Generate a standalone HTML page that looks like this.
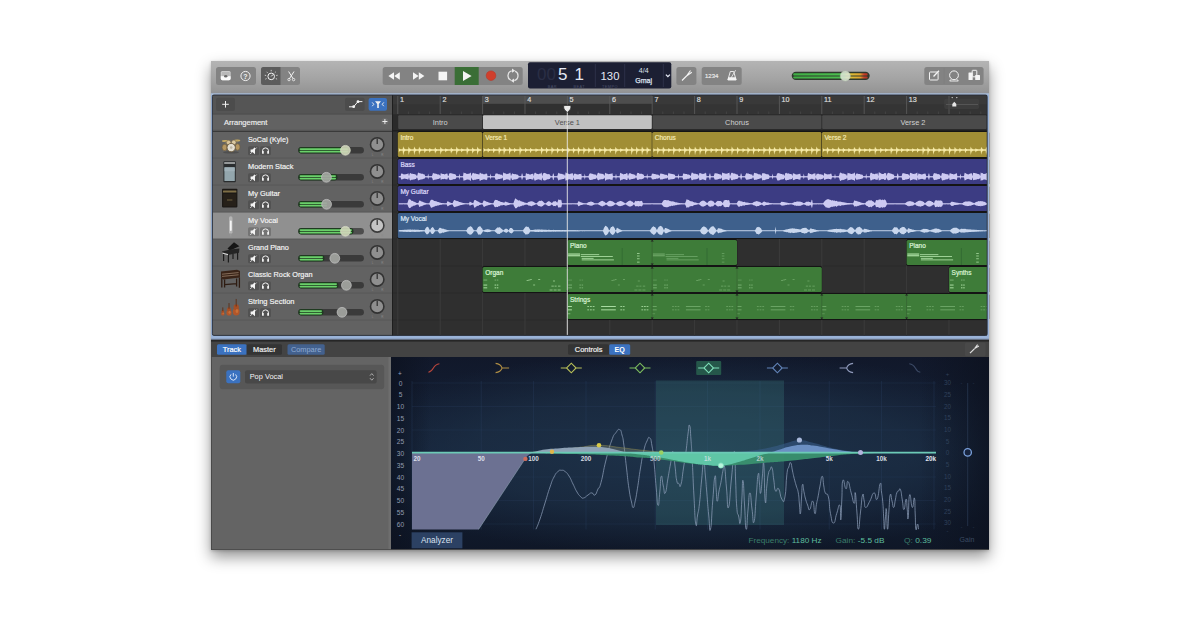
<!DOCTYPE html><html><head><meta charset="utf-8"><title>GarageBand</title><style>*{box-sizing:border-box;margin:0;padding:0}
html,body{width:1200px;height:627px;overflow:hidden;background:#fff;font-family:"Liberation Sans",sans-serif;}
body{position:relative}
#win{position:absolute;left:211px;top:61px;width:778px;height:489px;background:#616161;box-shadow:0 7px 14px rgba(0,0,0,.42),0 1px 3px rgba(0,0,0,.18)}
#main{position:absolute;left:0;top:0}
text{white-space:pre}
</style></head><body><div id="win"></div><svg id="main" width="1200" height="627" viewBox="0 0 1200 627" font-family="Liberation Sans, sans-serif"><defs>
<linearGradient id="tbg" x1="0" y1="0" x2="0" y2="1"><stop offset="0" stop-color="#b4b4b4"/><stop offset=".5" stop-color="#a5a5a5"/><stop offset=".88" stop-color="#979797"/><stop offset="1" stop-color="#8e9094"/></linearGradient>
<linearGradient id="eqbg" x1="0" y1="0" x2="0" y2="1"><stop offset="0" stop-color="#11182a"/><stop offset=".5" stop-color="#15233a"/><stop offset="1" stop-color="#0f1727"/></linearGradient>
<radialGradient id="eqglow" cx=".5" cy=".47" r=".62" gradientTransform="translate(0 .1) scale(1 .85)"><stop offset="0" stop-color="#1f344b" stop-opacity=".9"/><stop offset=".6" stop-color="#1d3046" stop-opacity=".65"/><stop offset="1" stop-color="#1b2c42" stop-opacity="0"/></radialGradient>
<linearGradient id="mtr" x1="0" y1="0" x2="1" y2="0"><stop offset="0" stop-color="#3fae44"/><stop offset=".68" stop-color="#4cc04f"/><stop offset=".72" stop-color="#d8c93a"/><stop offset=".9" stop-color="#e0a22e"/><stop offset=".95" stop-color="#c8402a"/><stop offset="1" stop-color="#b23020"/></linearGradient>
<linearGradient id="vl" x1="0" y1="0" x2="1" y2="0"><stop offset="0" stop-color="#0c111e" stop-opacity=".7"/><stop offset="1" stop-color="#0c111e" stop-opacity="0"/></linearGradient>
<linearGradient id="vr" x1="0" y1="0" x2="1" y2="0"><stop offset="0" stop-color="#0c111e" stop-opacity="0"/><stop offset="1" stop-color="#0c111e" stop-opacity=".75"/></linearGradient>
</defs><rect x="211" y="61" width="778" height="33" fill="url(#tbg)"/>
<rect x="216" y="67" width="40" height="18" fill="#838383" rx="2.5"/>
<rect x="220.8" y="71" width="9.8" height="9.2" fill="#d2d2d2" rx="1.6"/>
<rect x="221.6" y="71.8" width="8.2" height="4.6" fill="#b9b9b9" rx="1"/>
<path d="M220.8 76.2 h9.8 v2.4 a1.6 1.6 0 0 1 -1.6 1.6 h-6.6 a1.6 1.6 0 0 1 -1.6 -1.6z" fill="#fbfbfb"/>
<ellipse cx="225.7" cy="76.2" rx="1.7" ry="1.2" fill="#6a6a6a"/>
<circle cx="245.5" cy="76" r="4.6" fill="none" stroke="#f2f2f2" stroke-width="1"/>
<text x="245.5" y="78.6" font-size="7" fill="#f2f2f2" text-anchor="middle" font-weight="bold">?</text>
<rect x="261" y="67" width="39" height="18" fill="#838383" rx="2.5"/>
<path d="M263.5 67 h17 v18 h-17 a2.5 2.5 0 0 1 -2.5 -2.5 v-13 a2.5 2.5 0 0 1 2.5 -2.5z" fill="#5c5c5c"/>
<circle cx="271.2" cy="76.4" r="3.3" fill="none" stroke="#f2f2f2" stroke-width="1"/>
<line x1="271.2" y1="76.4" x2="273.2" y2="74.4" stroke="#f2f2f2" stroke-width="1"/>
<line x1="266.58" y1="78.56" x2="265.31" y2="79.15" stroke="#e6e6e6" stroke-width="0.8"/>
<line x1="266.18" y1="75.51" x2="264.8" y2="75.27" stroke="#e6e6e6" stroke-width="0.8"/>
<line x1="267.59" y1="72.79" x2="266.6" y2="71.8" stroke="#e6e6e6" stroke-width="0.8"/>
<line x1="271.2" y1="71.3" x2="271.2" y2="69.9" stroke="#e6e6e6" stroke-width="0.8"/>
<line x1="274.81" y1="72.79" x2="275.8" y2="71.8" stroke="#e6e6e6" stroke-width="0.8"/>
<line x1="276.22" y1="75.51" x2="277.6" y2="75.27" stroke="#e6e6e6" stroke-width="0.8"/>
<line x1="275.82" y1="78.56" x2="277.09" y2="79.15" stroke="#e6e6e6" stroke-width="0.8"/>
<path d="M288.6 71.5 L293.2 78.8 M294 71.5 L289.4 78.8" fill="none" stroke="#f2f2f2" stroke-width="1"/>
<circle cx="289" cy="79.6" r="1.2" fill="none" stroke="#f2f2f2" stroke-width="0.8"/>
<circle cx="293.6" cy="79.6" r="1.2" fill="none" stroke="#f2f2f2" stroke-width="0.8"/>
<rect x="382.7" y="67" width="140" height="18" fill="#838383" rx="2.5"/>
<rect x="454.7" y="67" width="24" height="18" fill="#3a6e36"/>
<path d="M394 72.2 v7.6 l-5.6 -3.8z M399.8 72.2 v7.6 l-5.6 -3.8z" fill="#f4f4f4"/>
<path d="M413 72.2 v7.6 l5.6 -3.8z M418.8 72.2 v7.6 l5.6 -3.8z" fill="#f4f4f4"/>
<rect x="438.5" y="71.7" width="8.6" height="8.6" fill="#f4f4f4"/>
<path d="M463 71 v10 l8.6 -5z" fill="#f4f4f4"/>
<circle cx="491" cy="75.7" r="4.8" fill="#d03f2c" stroke="#b8382a" stroke-width="0.6"/>
<path d="M510.89 80.23 A5 5 0 0 1 511.71 70.87 M515.11 71.17 A5 5 0 0 1 514.29 80.53" fill="none" stroke="#e2e2e2" stroke-width="1.3"/>
<path d="M512 68.6 l3.2 2.1 l-3.2 2.1z M514 82.8 l-3.2 -2.1 l3.2 -2.1z" fill="#e8e8e8"/>
<rect x="528" y="62.3" width="143.3" height="26.3" fill="#1c1f33" rx="2"/>
<line x1="595.3" y1="64" x2="595.3" y2="87" stroke="#2d3149" stroke-width="1"/>
<line x1="624.7" y1="64" x2="624.7" y2="87" stroke="#2d3149" stroke-width="1"/>
<line x1="663.3" y1="64" x2="663.3" y2="87" stroke="#2d3149" stroke-width="1"/>
<text x="556" y="80.3" font-size="17" fill="#2a2e45" text-anchor="end">00</text>
<text x="562.7" y="80.3" font-size="17" fill="#e6e9f5" text-anchor="middle">5</text>
<text x="579.3" y="80.3" font-size="17" fill="#e6e9f5" text-anchor="middle">1</text>
<text x="610" y="80.2" font-size="11.3" fill="#e6e9f5" text-anchor="middle">130</text>
<text x="643.7" y="73.2" font-size="7" fill="#dfe3f0" text-anchor="middle">4/4</text>
<text x="643.7" y="83.4" font-size="7" fill="#dfe3f0" text-anchor="middle" stroke="#dfe3f0" stroke-width=".25">Gmaj</text>
<text x="552.3" y="87.6" font-size="3.9" fill="#4a506a" text-anchor="middle" letter-spacing=".4">BAR</text>
<text x="579.3" y="87.6" font-size="3.9" fill="#4a506a" text-anchor="middle" letter-spacing=".4">BEAT</text>
<text x="610" y="87.6" font-size="3.9" fill="#4a506a" text-anchor="middle" letter-spacing=".4">TEMPO</text>
<path d="M665.9 74.6 l2 2 l2 -2" fill="none" stroke="#e6e9f5" stroke-width="1.3"/>
<rect x="676.4" y="67" width="20" height="18" fill="#838383" rx="2.5"/>
<path d="M682 80.5 L686.5 76 M686.5 76 L690.5 70.5 M686.5 76 L691.8 72.2" fill="none" stroke="#f4f4f4" stroke-width="1.1"/>
<rect x="701.7" y="67" width="40" height="18" fill="#838383" rx="2.5"/>
<text x="711.7" y="78.3" font-size="6" fill="#ececec" text-anchor="middle" stroke="#ececec" stroke-width=".15">1234</text>
<path d="M730.3 71.5 h3.4 l2.4 8.5 h-8.2z" fill="none" stroke="#f4f4f4" stroke-width="0.9"/>
<path d="M728.2 77.3 h7.6 l0.6 2.7 h-8.8z" fill="#f4f4f4"/>
<line x1="731" y1="78" x2="735.6" y2="70.2" stroke="#f4f4f4" stroke-width="0.8"/>
<rect x="791.7" y="71.7" width="78" height="8.3" fill="#2f3a2d" rx="4.15"/>
<rect x="793.2" y="73.2" width="74.5" height="2.2" fill="url(#mtr)" rx="1"/>
<rect x="793.2" y="76.4" width="74.5" height="2.2" fill="url(#mtr)" rx="1"/>
<circle cx="845.3" cy="76" r="5" fill="#d9e6d2" stroke="#b9c6b2" stroke-width="0.6" fill-opacity=".9"/>
<rect x="924.3" y="67" width="59.3" height="18" fill="#838383" rx="2.5"/>
<line x1="944.2" y1="68" x2="944.2" y2="84" stroke="#7d7d7d" stroke-width="0.8"/>
<rect x="929.5" y="72" width="8.6" height="8" fill="none" rx="0.8" stroke="#f2f2f2" stroke-width="1"/>
<line x1="933.5" y1="76.5" x2="939" y2="70.8" stroke="#f4f4f4" stroke-width="1.3"/>
<circle cx="954" cy="75.3" r="4.4" fill="none" stroke="#f4f4f4" stroke-width="1"/>
<path d="M951 79.3 l-1.3 1.7 h8.6 l-1.3 -1.7" fill="none" stroke="#f4f4f4" stroke-width="0.9"/>
<rect x="968.5" y="72.5" width="4.2" height="7.5" fill="#f4f4f4" rx="0.5"/>
<rect x="972.2" y="70.3" width="4.6" height="6.5" fill="none" rx="0.5" stroke="#f2f2f2" stroke-width="1"/>
<rect x="975.2" y="75" width="4.8" height="5" fill="#f4f4f4" rx="0.5"/>
<rect x="211" y="93.5" width="778" height="248" fill="#9ab3d8"/>
<rect x="211" y="93.5" width="778" height="1.2" fill="#aebfd8"/>
<rect x="212.6" y="95" width="179.4" height="240.5" fill="#626262"/>
<rect x="392" y="95" width="595.3" height="240.5" fill="#2f2f2f"/>
<rect x="392" y="95" width="1" height="240.5" fill="#1e1e1e"/>
<rect x="212.6" y="95" width="179.4" height="19" fill="#555555"/>
<rect x="216" y="97.7" width="19" height="13.2" fill="#4c4c4c" rx="2"/>
<path d="M225.5 101 v6.6 M222.2 104.3 h6.6" fill="none" stroke="#f0f0f0" stroke-width="1"/>
<rect x="345" y="97.7" width="19.6" height="13.2" fill="#4c4c4c" rx="2"/>
<path d="M349 106.8 h4.6 l4.4 -5.2 h4.4" fill="none" stroke="#f0f0f0" stroke-width="1"/>
<circle cx="353.7" cy="106.7" r="1.4" fill="#f4f4f4"/>
<circle cx="358" cy="101.7" r="1.4" fill="#f4f4f4"/>
<rect x="368.6" y="97.9" width="18.4" height="12.8" fill="#3b72c0" rx="2"/>
<path d="M375 101.3 h6 l-2.2 2.6 v4 h-1.6 v-4z" fill="#f0f0f0"/>
<path d="M372.2 102.4 l1.6 1.9 l-1.6 1.9 M383.8 102.4 l-1.6 1.9 l1.6 1.9" fill="none" stroke="#f0f0f0" stroke-width="0.9"/>
<line x1="212.6" y1="114.1" x2="392" y2="114.1" stroke="#4d4d4d" stroke-width="1"/>
<text x="224" y="124.5" font-size="7.5" fill="#ececec" stroke="#ececec" stroke-width=".18">Arrangement</text>
<circle cx="384.9" cy="121.5" r="3.6" fill="#6c6c6c"/>
<path d="M384.9 119 v5 M382.4 121.5 h5" fill="none" stroke="#ececec" stroke-width="1"/>
<line x1="212.6" y1="131.2" x2="392" y2="131.2" stroke="#2e2e2e" stroke-width="1.1"/>
<line x1="212.6" y1="130.2" x2="392" y2="130.2" stroke="#575757" stroke-width="0.9"/>
<rect x="393" y="95" width="594.3" height="9.8" fill="#393939"/>
<rect x="393" y="104.8" width="594.3" height="9.6" fill="#343434"/>
<rect x="482.6" y="95" width="169.6" height="8.9" fill="#4d4d4d"/>
<rect x="482.6" y="103.9" width="169.6" height="10.5" fill="#303030"/>
<line x1="397.8" y1="96" x2="397.8" y2="114" stroke="#5e5e5e" stroke-width="0.8"/>
<text x="400" y="102.4" font-size="7.2" fill="#dcdcdc" stroke="#dcdcdc" stroke-width=".2">1</text>
<line x1="408.4" y1="111.5" x2="408.4" y2="114" stroke="#4a4a4a" stroke-width="0.7"/>
<line x1="419" y1="111.5" x2="419" y2="114" stroke="#4a4a4a" stroke-width="0.7"/>
<line x1="429.6" y1="111.5" x2="429.6" y2="114" stroke="#4a4a4a" stroke-width="0.7"/>
<line x1="440.2" y1="96" x2="440.2" y2="114" stroke="#5e5e5e" stroke-width="0.8"/>
<text x="442.4" y="102.4" font-size="7.2" fill="#dcdcdc" stroke="#dcdcdc" stroke-width=".2">2</text>
<line x1="450.8" y1="111.5" x2="450.8" y2="114" stroke="#4a4a4a" stroke-width="0.7"/>
<line x1="461.4" y1="111.5" x2="461.4" y2="114" stroke="#4a4a4a" stroke-width="0.7"/>
<line x1="472" y1="111.5" x2="472" y2="114" stroke="#4a4a4a" stroke-width="0.7"/>
<line x1="482.6" y1="96" x2="482.6" y2="114" stroke="#5e5e5e" stroke-width="0.8"/>
<text x="484.8" y="102.4" font-size="7.2" fill="#dcdcdc" stroke="#dcdcdc" stroke-width=".2">3</text>
<line x1="493.2" y1="111.5" x2="493.2" y2="114" stroke="#4a4a4a" stroke-width="0.7"/>
<line x1="503.8" y1="111.5" x2="503.8" y2="114" stroke="#4a4a4a" stroke-width="0.7"/>
<line x1="514.4" y1="111.5" x2="514.4" y2="114" stroke="#4a4a4a" stroke-width="0.7"/>
<line x1="525" y1="96" x2="525" y2="114" stroke="#5e5e5e" stroke-width="0.8"/>
<text x="527.2" y="102.4" font-size="7.2" fill="#dcdcdc" stroke="#dcdcdc" stroke-width=".2">4</text>
<line x1="535.6" y1="111.5" x2="535.6" y2="114" stroke="#4a4a4a" stroke-width="0.7"/>
<line x1="546.2" y1="111.5" x2="546.2" y2="114" stroke="#4a4a4a" stroke-width="0.7"/>
<line x1="556.8" y1="111.5" x2="556.8" y2="114" stroke="#4a4a4a" stroke-width="0.7"/>
<line x1="567.4" y1="96" x2="567.4" y2="114" stroke="#5e5e5e" stroke-width="0.8"/>
<text x="569.6" y="102.4" font-size="7.2" fill="#dcdcdc" stroke="#dcdcdc" stroke-width=".2">5</text>
<line x1="578" y1="111.5" x2="578" y2="114" stroke="#4a4a4a" stroke-width="0.7"/>
<line x1="588.6" y1="111.5" x2="588.6" y2="114" stroke="#4a4a4a" stroke-width="0.7"/>
<line x1="599.2" y1="111.5" x2="599.2" y2="114" stroke="#4a4a4a" stroke-width="0.7"/>
<line x1="609.8" y1="96" x2="609.8" y2="114" stroke="#5e5e5e" stroke-width="0.8"/>
<text x="612" y="102.4" font-size="7.2" fill="#dcdcdc" stroke="#dcdcdc" stroke-width=".2">6</text>
<line x1="620.4" y1="111.5" x2="620.4" y2="114" stroke="#4a4a4a" stroke-width="0.7"/>
<line x1="631" y1="111.5" x2="631" y2="114" stroke="#4a4a4a" stroke-width="0.7"/>
<line x1="641.6" y1="111.5" x2="641.6" y2="114" stroke="#4a4a4a" stroke-width="0.7"/>
<line x1="652.2" y1="96" x2="652.2" y2="114" stroke="#5e5e5e" stroke-width="0.8"/>
<text x="654.4" y="102.4" font-size="7.2" fill="#dcdcdc" stroke="#dcdcdc" stroke-width=".2">7</text>
<line x1="662.8" y1="111.5" x2="662.8" y2="114" stroke="#4a4a4a" stroke-width="0.7"/>
<line x1="673.4" y1="111.5" x2="673.4" y2="114" stroke="#4a4a4a" stroke-width="0.7"/>
<line x1="684" y1="111.5" x2="684" y2="114" stroke="#4a4a4a" stroke-width="0.7"/>
<line x1="694.6" y1="96" x2="694.6" y2="114" stroke="#5e5e5e" stroke-width="0.8"/>
<text x="696.8" y="102.4" font-size="7.2" fill="#dcdcdc" stroke="#dcdcdc" stroke-width=".2">8</text>
<line x1="705.2" y1="111.5" x2="705.2" y2="114" stroke="#4a4a4a" stroke-width="0.7"/>
<line x1="715.8" y1="111.5" x2="715.8" y2="114" stroke="#4a4a4a" stroke-width="0.7"/>
<line x1="726.4" y1="111.5" x2="726.4" y2="114" stroke="#4a4a4a" stroke-width="0.7"/>
<line x1="737" y1="96" x2="737" y2="114" stroke="#5e5e5e" stroke-width="0.8"/>
<text x="739.2" y="102.4" font-size="7.2" fill="#dcdcdc" stroke="#dcdcdc" stroke-width=".2">9</text>
<line x1="747.6" y1="111.5" x2="747.6" y2="114" stroke="#4a4a4a" stroke-width="0.7"/>
<line x1="758.2" y1="111.5" x2="758.2" y2="114" stroke="#4a4a4a" stroke-width="0.7"/>
<line x1="768.8" y1="111.5" x2="768.8" y2="114" stroke="#4a4a4a" stroke-width="0.7"/>
<line x1="779.4" y1="96" x2="779.4" y2="114" stroke="#5e5e5e" stroke-width="0.8"/>
<text x="781.6" y="102.4" font-size="7.2" fill="#dcdcdc" stroke="#dcdcdc" stroke-width=".2">10</text>
<line x1="790" y1="111.5" x2="790" y2="114" stroke="#4a4a4a" stroke-width="0.7"/>
<line x1="800.6" y1="111.5" x2="800.6" y2="114" stroke="#4a4a4a" stroke-width="0.7"/>
<line x1="811.2" y1="111.5" x2="811.2" y2="114" stroke="#4a4a4a" stroke-width="0.7"/>
<line x1="821.8" y1="96" x2="821.8" y2="114" stroke="#5e5e5e" stroke-width="0.8"/>
<text x="824" y="102.4" font-size="7.2" fill="#dcdcdc" stroke="#dcdcdc" stroke-width=".2">11</text>
<line x1="832.4" y1="111.5" x2="832.4" y2="114" stroke="#4a4a4a" stroke-width="0.7"/>
<line x1="843" y1="111.5" x2="843" y2="114" stroke="#4a4a4a" stroke-width="0.7"/>
<line x1="853.6" y1="111.5" x2="853.6" y2="114" stroke="#4a4a4a" stroke-width="0.7"/>
<line x1="864.2" y1="96" x2="864.2" y2="114" stroke="#5e5e5e" stroke-width="0.8"/>
<text x="866.4" y="102.4" font-size="7.2" fill="#dcdcdc" stroke="#dcdcdc" stroke-width=".2">12</text>
<line x1="874.8" y1="111.5" x2="874.8" y2="114" stroke="#4a4a4a" stroke-width="0.7"/>
<line x1="885.4" y1="111.5" x2="885.4" y2="114" stroke="#4a4a4a" stroke-width="0.7"/>
<line x1="896" y1="111.5" x2="896" y2="114" stroke="#4a4a4a" stroke-width="0.7"/>
<line x1="906.6" y1="96" x2="906.6" y2="114" stroke="#5e5e5e" stroke-width="0.8"/>
<text x="908.8" y="102.4" font-size="7.2" fill="#dcdcdc" stroke="#dcdcdc" stroke-width=".2">13</text>
<line x1="917.2" y1="111.5" x2="917.2" y2="114" stroke="#4a4a4a" stroke-width="0.7"/>
<line x1="927.8" y1="111.5" x2="927.8" y2="114" stroke="#4a4a4a" stroke-width="0.7"/>
<line x1="938.4" y1="111.5" x2="938.4" y2="114" stroke="#4a4a4a" stroke-width="0.7"/>
<line x1="949" y1="96" x2="949" y2="114" stroke="#5e5e5e" stroke-width="0.8"/>
<line x1="959.6" y1="111.5" x2="959.6" y2="114" stroke="#4a4a4a" stroke-width="0.7"/>
<line x1="970.2" y1="111.5" x2="970.2" y2="114" stroke="#4a4a4a" stroke-width="0.7"/>
<line x1="980.8" y1="111.5" x2="980.8" y2="114" stroke="#4a4a4a" stroke-width="0.7"/>
<rect x="393" y="114.4" width="594.3" height="16.4" fill="#2a2a2a"/>
<rect x="398.2" y="115.3" width="84" height="13.8" fill="#4a4a4a" rx="1"/>
<text x="440.2" y="124.8" font-size="7.4" fill="#d2d2d2" text-anchor="middle">Intro</text>
<rect x="483" y="115.3" width="168.8" height="13.8" fill="#c1c1c1" rx="1"/>
<text x="567.4" y="124.8" font-size="7.4" fill="#505050" text-anchor="middle">Verse 1</text>
<rect x="652.6" y="115.3" width="168.8" height="13.8" fill="#4a4a4a" rx="1"/>
<text x="737" y="124.8" font-size="7.4" fill="#d2d2d2" text-anchor="middle">Chorus</text>
<rect x="822.2" y="115.3" width="164.4" height="13.8" fill="#4a4a4a" rx="1"/>
<text x="912.96" y="124.8" font-size="7.4" fill="#d2d2d2" text-anchor="middle">Verse 2</text>
<line x1="212.6" y1="158" x2="392" y2="158" stroke="#575757" stroke-width="0.9"/>
<text x="248" y="141.9" font-size="8" fill="#f4f4f4" textLength="40.3" lengthAdjust="spacingAndGlyphs" stroke="#f4f4f4" stroke-width=".18">SoCal (Kyle)</text>
<rect x="248" y="146.2" width="11" height="9" fill="#525252" rx="1.5"/>
<rect x="260" y="146.2" width="11" height="9" fill="#525252" rx="1.5"/>
<path d="M250.6 149.5 h1.8 l2.6 -2.2 v7 l-2.6 -2.2 h-1.8z" fill="#f2f2f2"/>
<line x1="250.2" y1="154" x2="256.6" y2="147.6" stroke="#f2f2f2" stroke-width="0.8"/>
<path d="M262.5 152.5 v-1.6 a3 3 0 0 1 6 0 v1.6" fill="none" stroke="#f2f2f2" stroke-width="1"/>
<rect x="262" y="151" width="1.8" height="2.8" fill="#f2f2f2" rx="0.5"/>
<rect x="267.2" y="151" width="1.8" height="2.8" fill="#f2f2f2" rx="0.5"/>
<rect x="298.3" y="147" width="65.6" height="6.6" fill="#3a3a3a" rx="3.3"/>
<rect x="298.3" y="147" width="51.2" height="6.6" fill="#1f3a20" rx="3.3"/>
<rect x="299.6" y="148.2" width="48.4" height="1.8" fill="#6ad06a" rx="0.9"/>
<rect x="299.6" y="150.7" width="48.4" height="1.8" fill="#6ad06a" rx="0.9"/>
<circle cx="345.4" cy="150.3" r="4.9" fill="#cfd6b8" stroke="#d9ddc8" stroke-width="0.7" fill-opacity=".92"/>
<circle cx="377.2" cy="144.4" r="6.7" fill="#8f8f8f" stroke="#333333" stroke-width="1.6"/>
<line x1="377.2" y1="144" x2="377.2" y2="138.4" stroke="#2e2e2e" stroke-width="1.2"/>
<text x="372.6" y="155.6" font-size="3" fill="#8a8a8a" text-anchor="middle">L</text>
<text x="382.4" y="155.6" font-size="3" fill="#8a8a8a" text-anchor="middle">R</text>
<line x1="212.6" y1="185" x2="392" y2="185" stroke="#575757" stroke-width="0.9"/>
<text x="248" y="168.9" font-size="8" fill="#f4f4f4" textLength="45.5" lengthAdjust="spacingAndGlyphs" stroke="#f4f4f4" stroke-width=".18">Modern Stack</text>
<rect x="248" y="173.2" width="11" height="9" fill="#525252" rx="1.5"/>
<rect x="260" y="173.2" width="11" height="9" fill="#525252" rx="1.5"/>
<path d="M250.6 176.5 h1.8 l2.6 -2.2 v7 l-2.6 -2.2 h-1.8z" fill="#f2f2f2"/>
<line x1="250.2" y1="181" x2="256.6" y2="174.6" stroke="#f2f2f2" stroke-width="0.8"/>
<path d="M262.5 179.5 v-1.6 a3 3 0 0 1 6 0 v1.6" fill="none" stroke="#f2f2f2" stroke-width="1"/>
<rect x="262" y="178" width="1.8" height="2.8" fill="#f2f2f2" rx="0.5"/>
<rect x="267.2" y="178" width="1.8" height="2.8" fill="#f2f2f2" rx="0.5"/>
<rect x="298.3" y="174" width="65.6" height="6.6" fill="#3a3a3a" rx="3.3"/>
<rect x="298.3" y="174" width="39.2" height="6.6" fill="#1f3a20" rx="3.3"/>
<rect x="299.6" y="175.2" width="36.4" height="1.8" fill="#6ad06a" rx="0.9"/>
<rect x="299.6" y="177.7" width="36.4" height="1.8" fill="#6ad06a" rx="0.9"/>
<circle cx="326.4" cy="177.3" r="4.9" fill="#a4a6a2" stroke="#c6c6c6" stroke-width="0.7" fill-opacity=".92"/>
<circle cx="377.2" cy="171.4" r="6.7" fill="#8f8f8f" stroke="#333333" stroke-width="1.6"/>
<line x1="377.2" y1="171" x2="377.2" y2="165.4" stroke="#2e2e2e" stroke-width="1.2"/>
<text x="372.6" y="182.6" font-size="3" fill="#8a8a8a" text-anchor="middle">L</text>
<text x="382.4" y="182.6" font-size="3" fill="#8a8a8a" text-anchor="middle">R</text>
<line x1="212.6" y1="212" x2="392" y2="212" stroke="#575757" stroke-width="0.9"/>
<text x="248" y="195.9" font-size="8" fill="#f4f4f4" textLength="32" lengthAdjust="spacingAndGlyphs" stroke="#f4f4f4" stroke-width=".18">My Guitar</text>
<rect x="248" y="200.2" width="11" height="9" fill="#525252" rx="1.5"/>
<rect x="260" y="200.2" width="11" height="9" fill="#525252" rx="1.5"/>
<path d="M250.6 203.5 h1.8 l2.6 -2.2 v7 l-2.6 -2.2 h-1.8z" fill="#f2f2f2"/>
<line x1="250.2" y1="208" x2="256.6" y2="201.6" stroke="#f2f2f2" stroke-width="0.8"/>
<path d="M262.5 206.5 v-1.6 a3 3 0 0 1 6 0 v1.6" fill="none" stroke="#f2f2f2" stroke-width="1"/>
<rect x="262" y="205" width="1.8" height="2.8" fill="#f2f2f2" rx="0.5"/>
<rect x="267.2" y="205" width="1.8" height="2.8" fill="#f2f2f2" rx="0.5"/>
<rect x="298.3" y="201" width="65.6" height="6.6" fill="#3a3a3a" rx="3.3"/>
<rect x="298.3" y="201" width="30.2" height="6.6" fill="#1f3a20" rx="3.3"/>
<rect x="299.6" y="202.2" width="27.4" height="1.8" fill="#6ad06a" rx="0.9"/>
<rect x="299.6" y="204.7" width="27.4" height="1.8" fill="#6ad06a" rx="0.9"/>
<circle cx="326.6" cy="204.3" r="4.9" fill="#a4a6a2" stroke="#c6c6c6" stroke-width="0.7" fill-opacity=".92"/>
<circle cx="377.2" cy="198.4" r="6.7" fill="#8f8f8f" stroke="#333333" stroke-width="1.6"/>
<line x1="377.2" y1="198" x2="377.2" y2="192.4" stroke="#2e2e2e" stroke-width="1.2"/>
<text x="372.6" y="209.6" font-size="3" fill="#8a8a8a" text-anchor="middle">L</text>
<text x="382.4" y="209.6" font-size="3" fill="#8a8a8a" text-anchor="middle">R</text>
<rect x="212.6" y="212.6" width="179.4" height="26.4" fill="#909090"/>
<line x1="212.6" y1="239" x2="392" y2="239" stroke="#575757" stroke-width="0.9"/>
<text x="248" y="222.9" font-size="8" fill="#f4f4f4" textLength="30" lengthAdjust="spacingAndGlyphs" stroke="#f4f4f4" stroke-width=".18">My Vocal</text>
<rect x="248" y="227.2" width="11" height="9" fill="#747474" rx="1.5"/>
<rect x="260" y="227.2" width="11" height="9" fill="#747474" rx="1.5"/>
<path d="M250.6 230.5 h1.8 l2.6 -2.2 v7 l-2.6 -2.2 h-1.8z" fill="#f2f2f2"/>
<line x1="250.2" y1="235" x2="256.6" y2="228.6" stroke="#f2f2f2" stroke-width="0.8"/>
<path d="M262.5 233.5 v-1.6 a3 3 0 0 1 6 0 v1.6" fill="none" stroke="#f2f2f2" stroke-width="1"/>
<rect x="262" y="232" width="1.8" height="2.8" fill="#f2f2f2" rx="0.5"/>
<rect x="267.2" y="232" width="1.8" height="2.8" fill="#f2f2f2" rx="0.5"/>
<rect x="298.3" y="228" width="65.6" height="6.6" fill="#4d4d4d" rx="3.3"/>
<rect x="298.3" y="228" width="55.2" height="6.6" fill="#1f3a20" rx="3.3"/>
<rect x="299.6" y="229.2" width="52.4" height="1.8" fill="#6ad06a" rx="0.9"/>
<rect x="299.6" y="231.7" width="52.4" height="1.8" fill="#6ad06a" rx="0.9"/>
<circle cx="345.4" cy="231.3" r="4.9" fill="#cfd6b8" stroke="#d9ddc8" stroke-width="0.7" fill-opacity=".92"/>
<circle cx="377.2" cy="225.4" r="6.7" fill="#c4c4c4" stroke="#3c3c3c" stroke-width="1.6"/>
<line x1="377.2" y1="225" x2="377.2" y2="219.4" stroke="#2e2e2e" stroke-width="1.2"/>
<text x="372.6" y="236.6" font-size="3" fill="#8a8a8a" text-anchor="middle">L</text>
<text x="382.4" y="236.6" font-size="3" fill="#8a8a8a" text-anchor="middle">R</text>
<line x1="212.6" y1="266" x2="392" y2="266" stroke="#575757" stroke-width="0.9"/>
<text x="248" y="249.9" font-size="8" fill="#f4f4f4" textLength="40.8" lengthAdjust="spacingAndGlyphs" stroke="#f4f4f4" stroke-width=".18">Grand Piano</text>
<rect x="248" y="254.2" width="11" height="9" fill="#525252" rx="1.5"/>
<rect x="260" y="254.2" width="11" height="9" fill="#525252" rx="1.5"/>
<path d="M250.6 257.5 h1.8 l2.6 -2.2 v7 l-2.6 -2.2 h-1.8z" fill="#f2f2f2"/>
<line x1="250.2" y1="262" x2="256.6" y2="255.6" stroke="#f2f2f2" stroke-width="0.8"/>
<path d="M262.5 260.5 v-1.6 a3 3 0 0 1 6 0 v1.6" fill="none" stroke="#f2f2f2" stroke-width="1"/>
<rect x="262" y="259" width="1.8" height="2.8" fill="#f2f2f2" rx="0.5"/>
<rect x="267.2" y="259" width="1.8" height="2.8" fill="#f2f2f2" rx="0.5"/>
<rect x="298.3" y="255" width="65.6" height="6.6" fill="#3a3a3a" rx="3.3"/>
<rect x="298.3" y="255" width="26.2" height="6.6" fill="#1f3a20" rx="3.3"/>
<rect x="299.6" y="256.2" width="23.4" height="1.8" fill="#6ad06a" rx="0.9"/>
<rect x="299.6" y="258.7" width="23.4" height="1.8" fill="#6ad06a" rx="0.9"/>
<circle cx="334.8" cy="258.3" r="4.9" fill="#a4a6a2" stroke="#c6c6c6" stroke-width="0.7" fill-opacity=".92"/>
<circle cx="377.2" cy="252.4" r="6.7" fill="#8f8f8f" stroke="#333333" stroke-width="1.6"/>
<line x1="377.2" y1="252" x2="377.2" y2="246.4" stroke="#2e2e2e" stroke-width="1.2"/>
<text x="372.6" y="263.6" font-size="3" fill="#8a8a8a" text-anchor="middle">L</text>
<text x="382.4" y="263.6" font-size="3" fill="#8a8a8a" text-anchor="middle">R</text>
<line x1="212.6" y1="293" x2="392" y2="293" stroke="#575757" stroke-width="0.9"/>
<text x="248" y="276.9" font-size="8" fill="#f4f4f4" textLength="64.5" lengthAdjust="spacingAndGlyphs" stroke="#f4f4f4" stroke-width=".18">Classic Rock Organ</text>
<rect x="248" y="281.2" width="11" height="9" fill="#525252" rx="1.5"/>
<rect x="260" y="281.2" width="11" height="9" fill="#525252" rx="1.5"/>
<path d="M250.6 284.5 h1.8 l2.6 -2.2 v7 l-2.6 -2.2 h-1.8z" fill="#f2f2f2"/>
<line x1="250.2" y1="289" x2="256.6" y2="282.6" stroke="#f2f2f2" stroke-width="0.8"/>
<path d="M262.5 287.5 v-1.6 a3 3 0 0 1 6 0 v1.6" fill="none" stroke="#f2f2f2" stroke-width="1"/>
<rect x="262" y="286" width="1.8" height="2.8" fill="#f2f2f2" rx="0.5"/>
<rect x="267.2" y="286" width="1.8" height="2.8" fill="#f2f2f2" rx="0.5"/>
<rect x="298.3" y="282" width="65.6" height="6.6" fill="#3a3a3a" rx="3.3"/>
<rect x="298.3" y="282" width="40.2" height="6.6" fill="#1f3a20" rx="3.3"/>
<rect x="299.6" y="283.2" width="37.4" height="1.8" fill="#6ad06a" rx="0.9"/>
<rect x="299.6" y="285.7" width="37.4" height="1.8" fill="#6ad06a" rx="0.9"/>
<circle cx="346.4" cy="285.3" r="4.9" fill="#a4a6a2" stroke="#c6c6c6" stroke-width="0.7" fill-opacity=".92"/>
<circle cx="377.2" cy="279.4" r="6.7" fill="#8f8f8f" stroke="#333333" stroke-width="1.6"/>
<line x1="377.2" y1="279" x2="377.2" y2="273.4" stroke="#2e2e2e" stroke-width="1.2"/>
<text x="372.6" y="290.6" font-size="3" fill="#8a8a8a" text-anchor="middle">L</text>
<text x="382.4" y="290.6" font-size="3" fill="#8a8a8a" text-anchor="middle">R</text>
<line x1="212.6" y1="320" x2="392" y2="320" stroke="#575757" stroke-width="0.9"/>
<text x="248" y="303.9" font-size="8" fill="#f4f4f4" textLength="46.5" lengthAdjust="spacingAndGlyphs" stroke="#f4f4f4" stroke-width=".18">String Section</text>
<rect x="248" y="308.2" width="11" height="9" fill="#525252" rx="1.5"/>
<rect x="260" y="308.2" width="11" height="9" fill="#525252" rx="1.5"/>
<path d="M250.6 311.5 h1.8 l2.6 -2.2 v7 l-2.6 -2.2 h-1.8z" fill="#f2f2f2"/>
<line x1="250.2" y1="316" x2="256.6" y2="309.6" stroke="#f2f2f2" stroke-width="0.8"/>
<path d="M262.5 314.5 v-1.6 a3 3 0 0 1 6 0 v1.6" fill="none" stroke="#f2f2f2" stroke-width="1"/>
<rect x="262" y="313" width="1.8" height="2.8" fill="#f2f2f2" rx="0.5"/>
<rect x="267.2" y="313" width="1.8" height="2.8" fill="#f2f2f2" rx="0.5"/>
<rect x="298.3" y="309" width="65.6" height="6.6" fill="#3a3a3a" rx="3.3"/>
<rect x="298.3" y="309" width="25.2" height="6.6" fill="#1f3a20" rx="3.3"/>
<rect x="299.6" y="310.2" width="22.4" height="1.8" fill="#6ad06a" rx="0.9"/>
<rect x="299.6" y="312.7" width="22.4" height="1.8" fill="#6ad06a" rx="0.9"/>
<circle cx="342" cy="312.3" r="4.9" fill="#a4a6a2" stroke="#c6c6c6" stroke-width="0.7" fill-opacity=".92"/>
<circle cx="377.2" cy="306.4" r="6.7" fill="#8f8f8f" stroke="#333333" stroke-width="1.6"/>
<line x1="377.2" y1="306" x2="377.2" y2="300.4" stroke="#2e2e2e" stroke-width="1.2"/>
<text x="372.6" y="317.6" font-size="3" fill="#8a8a8a" text-anchor="middle">L</text>
<text x="382.4" y="317.6" font-size="3" fill="#8a8a8a" text-anchor="middle">R</text>
<ellipse cx="231" cy="152.3" rx="8" ry="1.3" fill="#3c3c3c" fill-opacity=".5"/>
<ellipse cx="225.3" cy="141" rx="3.4" ry="1.1" fill="#c9ad62"/>
<ellipse cx="237.2" cy="140.6" rx="3.2" ry="1.1" fill="#c9ad62"/>
<line x1="225.3" y1="141" x2="225.3" y2="151" stroke="#8a8064" stroke-width="0.6"/>
<line x1="237.2" y1="140.6" x2="237.2" y2="151" stroke="#8a8064" stroke-width="0.6"/>
<circle cx="228.6" cy="142.6" r="2.3" fill="#d8c49a" stroke="#7a6645" stroke-width="0.6"/>
<circle cx="233.8" cy="142.4" r="2.3" fill="#dccaa2" stroke="#7a6645" stroke-width="0.6"/>
<ellipse cx="224.6" cy="147.4" rx="2.5" ry="3.1" fill="#b59660" stroke="#6c5a3c" stroke-width=".6"/>
<ellipse cx="237.6" cy="147" rx="2.4" ry="3.2" fill="#b59660" stroke="#6c5a3c" stroke-width=".6"/>
<circle cx="231.2" cy="147.6" r="4.2" fill="#e4dfd2" stroke="#6c5a3c" stroke-width="0.9"/>
<circle cx="231.2" cy="147.6" r="1.3" fill="#bdb6a4"/>
<rect x="223.4" y="161.2" width="12.4" height="21" fill="#2a2d2f" rx="0.8"/>
<rect x="224.2" y="162.2" width="10.8" height="1.6" fill="#b9bcbd" rx="0.3"/>
<rect x="224.4" y="167.2" width="10.4" height="13.8" fill="#93a6ad" rx="0.5"/>
<rect x="224.4" y="167.2" width="10.4" height="4" fill="#a5b7bd" rx="0.5" fill-opacity=".7"/>
<rect x="222" y="188.8" width="15.4" height="18.6" fill="#1c1916" rx="0.8"/>
<rect x="223" y="190.6" width="13.4" height="2" fill="#7e6e46" rx="0.3"/>
<rect x="223.2" y="194" width="13" height="12.2" fill="#262019" rx="0.4"/>
<rect x="227" y="199.5" width="5.4" height="1" fill="#6e6040"/>
<rect x="229" y="216.3" width="3.5" height="17.5" fill="#b4b4b4" rx="1.6"/>
<rect x="229.9" y="220.6" width="1.8" height="10.4" fill="#f6f6f6" rx="0.9"/>
<rect x="230.2" y="233.5" width="1.2" height="3" fill="#9a9a9a"/>
<path d="M227.5 248.5 L234 242.2 L239.4 246.2 L230 250.4 Z" fill="#161616"/>
<path d="M222 251.4 L230 249.6 L239.4 248.4 L239 252.8 L228 255 L222.4 253.6 Z" fill="#242424"/>
<path d="M222.3 252.6 L228 254 L228 255.2 L222.5 253.8 Z" fill="#d8d8d8"/>
<path d="M223.6 254 v7 M228.4 255 v7.4 M237.6 252.6 v7.2 M233 254 v5" fill="none" stroke="#1c1c1c" stroke-width="1.2"/>
<path d="M221 271.4 L237 269.8 L240 271 L240 277.4 L223.4 279.4 L221 277.6 Z" fill="#3a2418"/>
<path d="M222 274.2 L238.6 272.6 M222 276.4 L238.6 274.8" fill="none" stroke="#8c7460" stroke-width="0.9"/>
<path d="M221.8 278 v9.6 M239.4 277.4 v10.4 M224.6 279.4 v8 M236.6 278.4 v8 M224.6 284.6 L236.6 283.6" fill="none" stroke="#2e1c12" stroke-width="1.3"/>
<ellipse cx="222.8" cy="313.74" rx="1.67" ry="1.86" fill="#b2562a"/>
<ellipse cx="222.8" cy="311.51" rx="1.3" ry="1.43" fill="#a64e24"/>
<ellipse cx="223.17" cy="313.37" rx="0.68" ry="0.99" fill="#d07a3e" fill-opacity=".7"/>
<line x1="222.8" y1="311.14" x2="222.8" y2="307.42" stroke="#5a301a" stroke-width="0.9"/>
<ellipse cx="229" cy="312.74" rx="2.56" ry="2.85" fill="#b2562a"/>
<ellipse cx="229" cy="309.32" rx="1.99" ry="2.18" fill="#a64e24"/>
<ellipse cx="229.57" cy="312.17" rx="1.04" ry="1.52" fill="#d07a3e" fill-opacity=".7"/>
<line x1="229" y1="308.75" x2="229" y2="303.05" stroke="#5a301a" stroke-width="0.9"/>
<ellipse cx="236.2" cy="311.7" rx="3.38" ry="3.75" fill="#b2562a"/>
<ellipse cx="236.2" cy="307.2" rx="2.62" ry="2.88" fill="#a64e24"/>
<ellipse cx="236.95" cy="310.95" rx="1.38" ry="2" fill="#d07a3e" fill-opacity=".7"/>
<line x1="236.2" y1="306.45" x2="236.2" y2="298.95" stroke="#5a301a" stroke-width="0.9"/>
<line x1="393" y1="158" x2="987" y2="158" stroke="#292929" stroke-width="0.8"/>
<line x1="393" y1="185" x2="987" y2="185" stroke="#292929" stroke-width="0.8"/>
<line x1="393" y1="212" x2="987" y2="212" stroke="#292929" stroke-width="0.8"/>
<line x1="393" y1="239" x2="987" y2="239" stroke="#292929" stroke-width="0.8"/>
<line x1="393" y1="266" x2="987" y2="266" stroke="#292929" stroke-width="0.8"/>
<line x1="393" y1="293" x2="987" y2="293" stroke="#292929" stroke-width="0.8"/>
<line x1="393" y1="320" x2="987" y2="320" stroke="#292929" stroke-width="0.8"/>
<line x1="397.8" y1="131" x2="397.8" y2="335.5" stroke="#3d3d3d" stroke-width="0.9"/>
<line x1="440.2" y1="131" x2="440.2" y2="335.5" stroke="#3d3d3d" stroke-width="0.9"/>
<line x1="482.6" y1="131" x2="482.6" y2="335.5" stroke="#3d3d3d" stroke-width="0.9"/>
<line x1="525" y1="131" x2="525" y2="335.5" stroke="#3d3d3d" stroke-width="0.9"/>
<line x1="567.4" y1="131" x2="567.4" y2="335.5" stroke="#3d3d3d" stroke-width="0.9"/>
<line x1="609.8" y1="131" x2="609.8" y2="335.5" stroke="#3d3d3d" stroke-width="0.9"/>
<line x1="652.2" y1="131" x2="652.2" y2="335.5" stroke="#3d3d3d" stroke-width="0.9"/>
<line x1="694.6" y1="131" x2="694.6" y2="335.5" stroke="#3d3d3d" stroke-width="0.9"/>
<line x1="737" y1="131" x2="737" y2="335.5" stroke="#3d3d3d" stroke-width="0.9"/>
<line x1="779.4" y1="131" x2="779.4" y2="335.5" stroke="#3d3d3d" stroke-width="0.9"/>
<line x1="821.8" y1="131" x2="821.8" y2="335.5" stroke="#3d3d3d" stroke-width="0.9"/>
<line x1="864.2" y1="131" x2="864.2" y2="335.5" stroke="#3d3d3d" stroke-width="0.9"/>
<line x1="906.6" y1="131" x2="906.6" y2="335.5" stroke="#3d3d3d" stroke-width="0.9"/>
<line x1="949" y1="131" x2="949" y2="335.5" stroke="#3d3d3d" stroke-width="0.9"/>
<line x1="392.5" y1="130.9" x2="987" y2="130.9" stroke="#1c1c1c" stroke-width="1.2"/>
<rect x="397.4" y="131.1" width="85.6" height="26.9" fill="#141414" rx="1.8"/>
<rect x="397.8" y="132" width="84.8" height="25" fill="#a18e35" rx="1.6"/>
<text x="400.4" y="139.6" font-size="6.5" fill="#f3e8b4" stroke="#f3e8b4" stroke-width=".22">Intro</text>
<path d="M398.8 148.01 L399.35 148.85 L399.9 148.85 L400.45 149.15 L401 149.15 L401.55 149.15 L402.1 149.15 L402.65 149.15 L403.2 146.3 L403.75 147.77 L404.3 148.78 L404.85 148.78 L405.4 149.15 L405.95 149.15 L406.5 149.15 L407.05 149.15 L407.6 149.15 L408.15 149.15 L408.7 146.55 L409.25 147.89 L409.8 148.81 L410.35 148.81 L410.9 149.15 L411.45 149.15 L412 149.15 L412.55 149.15 L413.1 149.15 L413.65 149.15 L414.2 146.42 L414.75 147.83 L415.3 148.8 L415.85 148.8 L416.4 149.15 L416.95 149.15 L417.5 149.15 L418.05 149.15 L418.6 149.15 L419.15 146.55 L419.7 147.89 L420.25 148.81 L420.8 148.81 L421.35 149.15 L421.9 149.15 L422.45 149.15 L423 149.15 L423.55 149.15 L424.1 149.15 L424.65 147.66 L425.2 148.43 L425.75 148.96 L426.3 148.96 L426.85 149.15 L427.4 149.15 L427.95 149.15 L428.5 149.15 L429.05 149.15 L429.6 147.91 L430.15 148.55 L430.7 148.99 L431.25 148.99 L431.8 149.15 L432.35 149.15 L432.9 149.15 L433.45 149.15 L434 149.15 L434.55 149.15 L435.1 147.29 L435.65 148.25 L436.2 148.91 L436.75 148.91 L437.3 149.15 L437.85 149.15 L438.4 149.15 L438.95 149.15 L439.5 149.15 L440.05 149.15 L440.6 146.79 L441.15 148.01 L441.7 148.85 L442.25 148.85 L442.8 149.15 L443.35 149.15 L443.9 149.15 L444.45 149.15 L445 149.15 L445.55 148.16 L446.1 148.67 L446.65 149.02 L447.2 149.02 L447.75 149.15 L448.3 149.15 L448.85 149.15 L449.4 149.15 L449.95 149.15 L450.5 149.15 L451.05 147.29 L451.6 148.25 L452.15 148.91 L452.7 148.91 L453.25 149.15 L453.8 149.15 L454.35 149.15 L454.9 149.15 L455.45 149.15 L456 149.15 L456.55 146.42 L457.1 147.83 L457.65 148.8 L458.2 148.8 L458.75 149.15 L459.3 149.15 L459.85 149.15 L460.4 149.15 L460.95 149.15 L461.5 148.16 L462.05 148.67 L462.6 149.02 L463.15 149.02 L463.7 149.15 L464.25 149.15 L464.8 149.15 L465.35 149.15 L465.9 149.15 L466.45 149.15 L467 146.55 L467.55 147.89 L468.1 148.81 L468.65 148.81 L469.2 149.15 L469.75 149.15 L470.3 149.15 L470.85 149.15 L471.4 149.15 L471.95 149.15 L472.5 147.29 L473.05 148.25 L473.6 148.91 L474.15 148.91 L474.7 149.15 L475.25 149.15 L475.8 149.15 L476.35 149.15 L476.9 149.15 L477.45 146.55 L478 147.89 L478.55 148.81 L479.1 148.81 L479.65 149.15 L480.2 149.15 L480.75 149.15 L481.3 149.15 L481.3 150.85 L480.75 150.85 L480.2 150.85 L479.65 150.85 L479.1 151.27 L478.55 151.27 L478 152.74 L477.45 155.05 L476.9 150.85 L476.35 150.85 L475.8 150.85 L475.25 150.85 L474.7 150.85 L474.15 151.15 L473.6 151.15 L473.05 152.2 L472.5 153.85 L471.95 150.85 L471.4 150.85 L470.85 150.85 L470.3 150.85 L469.75 150.85 L469.2 150.85 L468.65 151.27 L468.1 151.27 L467.55 152.74 L467 155.05 L466.45 150.85 L465.9 150.85 L465.35 150.85 L464.8 150.85 L464.25 150.85 L463.7 150.85 L463.15 151.01 L462.6 151.01 L462.05 151.57 L461.5 152.45 L460.95 150.85 L460.4 150.85 L459.85 150.85 L459.3 150.85 L458.75 150.85 L458.2 151.29 L457.65 151.29 L457.1 152.83 L456.55 155.25 L456 150.85 L455.45 150.85 L454.9 150.85 L454.35 150.85 L453.8 150.85 L453.25 150.85 L452.7 151.15 L452.15 151.15 L451.6 152.2 L451.05 153.85 L450.5 150.85 L449.95 150.85 L449.4 150.85 L448.85 150.85 L448.3 150.85 L447.75 150.85 L447.2 151.01 L446.65 151.01 L446.1 151.57 L445.55 152.45 L445 150.85 L444.45 150.85 L443.9 150.85 L443.35 150.85 L442.8 150.85 L442.25 151.23 L441.7 151.23 L441.15 152.56 L440.6 154.65 L440.05 150.85 L439.5 150.85 L438.95 150.85 L438.4 150.85 L437.85 150.85 L437.3 150.85 L436.75 151.15 L436.2 151.15 L435.65 152.2 L435.1 153.85 L434.55 150.85 L434 150.85 L433.45 150.85 L432.9 150.85 L432.35 150.85 L431.8 150.85 L431.25 151.05 L430.7 151.05 L430.15 151.75 L429.6 152.85 L429.05 150.85 L428.5 150.85 L427.95 150.85 L427.4 150.85 L426.85 150.85 L426.3 151.09 L425.75 151.09 L425.2 151.93 L424.65 153.25 L424.1 150.85 L423.55 150.85 L423 150.85 L422.45 150.85 L421.9 150.85 L421.35 150.85 L420.8 151.27 L420.25 151.27 L419.7 152.74 L419.15 155.05 L418.6 150.85 L418.05 150.85 L417.5 150.85 L416.95 150.85 L416.4 150.85 L415.85 151.29 L415.3 151.29 L414.75 152.83 L414.2 155.25 L413.65 150.85 L413.1 150.85 L412.55 150.85 L412 150.85 L411.45 150.85 L410.9 150.85 L410.35 151.27 L409.8 151.27 L409.25 152.74 L408.7 155.05 L408.15 150.85 L407.6 150.85 L407.05 150.85 L406.5 150.85 L405.95 150.85 L405.4 150.85 L404.85 151.31 L404.3 151.31 L403.75 152.92 L403.2 155.45 L402.65 150.85 L402.1 150.85 L401.55 150.85 L401 150.85 L400.45 150.85 L399.9 151.23 L399.35 151.23 L398.8 152.56Z" fill="#f6eaa6"/>
<rect x="482.2" y="131.1" width="170.4" height="26.9" fill="#141414" rx="1.8"/>
<rect x="482.6" y="132" width="169.6" height="25" fill="#a18e35" rx="1.6"/>
<text x="485.2" y="139.6" font-size="6.5" fill="#f3e8b4" stroke="#f3e8b4" stroke-width=".22">Verse 1</text>
<path d="M483.6 147.77 L484.15 148.78 L484.7 148.78 L485.25 149.15 L485.8 149.15 L486.35 149.15 L486.9 149.15 L487.45 149.15 L488 147.91 L488.55 148.55 L489.1 148.99 L489.65 148.99 L490.2 149.15 L490.75 149.15 L491.3 149.15 L491.85 149.15 L492.4 149.15 L492.95 149.15 L493.5 147.66 L494.05 148.43 L494.6 148.96 L495.15 148.96 L495.7 149.15 L496.25 149.15 L496.8 149.15 L497.35 149.15 L497.9 149.15 L498.45 149.15 L499 146.55 L499.55 147.89 L500.1 148.81 L500.65 148.81 L501.2 149.15 L501.75 149.15 L502.3 149.15 L502.85 149.15 L503.4 149.15 L503.95 146.42 L504.5 147.83 L505.05 148.8 L505.6 148.8 L506.15 149.15 L506.7 149.15 L507.25 149.15 L507.8 149.15 L508.35 149.15 L508.9 149.15 L509.45 146.79 L510 148.01 L510.55 148.85 L511.1 148.85 L511.65 149.15 L512.2 149.15 L512.75 149.15 L513.3 149.15 L513.85 149.15 L514.4 147.91 L514.95 148.55 L515.5 148.99 L516.05 148.99 L516.6 149.15 L517.15 149.15 L517.7 149.15 L518.25 149.15 L518.8 149.15 L519.35 149.15 L519.9 146.3 L520.45 147.77 L521 148.78 L521.55 148.78 L522.1 149.15 L522.65 149.15 L523.2 149.15 L523.75 149.15 L524.3 149.15 L524.85 149.15 L525.4 147.91 L525.95 148.55 L526.5 148.99 L527.05 148.99 L527.6 149.15 L528.15 149.15 L528.7 149.15 L529.25 149.15 L529.8 149.15 L530.35 147.66 L530.9 148.43 L531.45 148.96 L532 148.96 L532.55 149.15 L533.1 149.15 L533.65 149.15 L534.2 149.15 L534.75 149.15 L535.3 149.15 L535.85 148.16 L536.4 148.67 L536.95 149.02 L537.5 149.02 L538.05 149.15 L538.6 149.15 L539.15 149.15 L539.7 149.15 L540.25 149.15 L540.8 149.15 L541.35 146.55 L541.9 147.89 L542.45 148.81 L543 148.81 L543.55 149.15 L544.1 149.15 L544.65 149.15 L545.2 149.15 L545.75 149.15 L546.3 147.29 L546.85 148.25 L547.4 148.91 L547.95 148.91 L548.5 149.15 L549.05 149.15 L549.6 149.15 L550.15 149.15 L550.7 149.15 L551.25 149.15 L551.8 146.55 L552.35 147.89 L552.9 148.81 L553.45 148.81 L554 149.15 L554.55 149.15 L555.1 149.15 L555.65 149.15 L556.2 149.15 L556.75 149.15 L557.3 147.29 L557.85 148.25 L558.4 148.91 L558.95 148.91 L559.5 149.15 L560.05 149.15 L560.6 149.15 L561.15 149.15 L561.7 149.15 L562.25 147.91 L562.8 148.55 L563.35 148.99 L563.9 148.99 L564.45 149.15 L565 149.15 L565.55 149.15 L566.1 149.15 L566.65 149.15 L567.2 149.15 L567.75 146.79 L568.3 148.01 L568.85 148.85 L569.4 148.85 L569.95 149.15 L570.5 149.15 L571.05 149.15 L571.6 149.15 L572.15 149.15 L572.7 149.15 L573.25 147.29 L573.8 148.25 L574.35 148.91 L574.9 148.91 L575.45 149.15 L576 149.15 L576.55 149.15 L577.1 149.15 L577.65 149.15 L578.2 146.42 L578.75 147.83 L579.3 148.8 L579.85 148.8 L580.4 149.15 L580.95 149.15 L581.5 149.15 L582.05 149.15 L582.6 149.15 L583.15 149.15 L583.7 146.79 L584.25 148.01 L584.8 148.85 L585.35 148.85 L585.9 149.15 L586.45 149.15 L587 149.15 L587.55 149.15 L588.1 149.15 L588.65 147.29 L589.2 148.25 L589.75 148.91 L590.3 148.91 L590.85 149.15 L591.4 149.15 L591.95 149.15 L592.5 149.15 L593.05 149.15 L593.6 149.15 L594.15 146.3 L594.7 147.77 L595.25 148.78 L595.8 148.78 L596.35 149.15 L596.9 149.15 L597.45 149.15 L598 149.15 L598.55 149.15 L599.1 149.15 L599.65 147.66 L600.2 148.43 L600.75 148.96 L601.3 148.96 L601.85 149.15 L602.4 149.15 L602.95 149.15 L603.5 149.15 L604.05 149.15 L604.6 146.55 L605.15 147.89 L605.7 148.81 L606.25 148.81 L606.8 149.15 L607.35 149.15 L607.9 149.15 L608.45 149.15 L609 149.15 L609.55 149.15 L610.1 147.66 L610.65 148.43 L611.2 148.96 L611.75 148.96 L612.3 149.15 L612.85 149.15 L613.4 149.15 L613.95 149.15 L614.5 149.15 L615.05 149.15 L615.6 146.79 L616.15 148.01 L616.7 148.85 L617.25 148.85 L617.8 149.15 L618.35 149.15 L618.9 149.15 L619.45 149.15 L620 149.15 L620.55 148.16 L621.1 148.67 L621.65 149.02 L622.2 149.02 L622.75 149.15 L623.3 149.15 L623.85 149.15 L624.4 149.15 L624.95 149.15 L625.5 149.15 L626.05 146.79 L626.6 148.01 L627.15 148.85 L627.7 148.85 L628.25 149.15 L628.8 149.15 L629.35 149.15 L629.9 149.15 L630.45 149.15 L631 149.15 L631.55 146.42 L632.1 147.83 L632.65 148.8 L633.2 148.8 L633.75 149.15 L634.3 149.15 L634.85 149.15 L635.4 149.15 L635.95 149.15 L636.5 146.55 L637.05 147.89 L637.6 148.81 L638.15 148.81 L638.7 149.15 L639.25 149.15 L639.8 149.15 L640.35 149.15 L640.9 149.15 L641.45 149.15 L642 146.3 L642.55 147.77 L643.1 148.78 L643.65 148.78 L644.2 149.15 L644.75 149.15 L645.3 149.15 L645.85 149.15 L646.4 149.15 L646.95 146.55 L647.5 147.89 L648.05 148.81 L648.6 148.81 L649.15 149.15 L649.7 149.15 L650.25 149.15 L650.8 149.15 L650.8 150.85 L650.25 150.85 L649.7 150.85 L649.15 150.85 L648.6 151.27 L648.05 151.27 L647.5 152.74 L646.95 155.05 L646.4 150.85 L645.85 150.85 L645.3 150.85 L644.75 150.85 L644.2 150.85 L643.65 151.31 L643.1 151.31 L642.55 152.92 L642 155.45 L641.45 150.85 L640.9 150.85 L640.35 150.85 L639.8 150.85 L639.25 150.85 L638.7 150.85 L638.15 151.27 L637.6 151.27 L637.05 152.74 L636.5 155.05 L635.95 150.85 L635.4 150.85 L634.85 150.85 L634.3 150.85 L633.75 150.85 L633.2 151.29 L632.65 151.29 L632.1 152.83 L631.55 155.25 L631 150.85 L630.45 150.85 L629.9 150.85 L629.35 150.85 L628.8 150.85 L628.25 150.85 L627.7 151.23 L627.15 151.23 L626.6 152.56 L626.05 154.65 L625.5 150.85 L624.95 150.85 L624.4 150.85 L623.85 150.85 L623.3 150.85 L622.75 150.85 L622.2 151.01 L621.65 151.01 L621.1 151.57 L620.55 152.45 L620 150.85 L619.45 150.85 L618.9 150.85 L618.35 150.85 L617.8 150.85 L617.25 151.23 L616.7 151.23 L616.15 152.56 L615.6 154.65 L615.05 150.85 L614.5 150.85 L613.95 150.85 L613.4 150.85 L612.85 150.85 L612.3 150.85 L611.75 151.09 L611.2 151.09 L610.65 151.93 L610.1 153.25 L609.55 150.85 L609 150.85 L608.45 150.85 L607.9 150.85 L607.35 150.85 L606.8 150.85 L606.25 151.27 L605.7 151.27 L605.15 152.74 L604.6 155.05 L604.05 150.85 L603.5 150.85 L602.95 150.85 L602.4 150.85 L601.85 150.85 L601.3 151.09 L600.75 151.09 L600.2 151.93 L599.65 153.25 L599.1 150.85 L598.55 150.85 L598 150.85 L597.45 150.85 L596.9 150.85 L596.35 150.85 L595.8 151.31 L595.25 151.31 L594.7 152.92 L594.15 155.45 L593.6 150.85 L593.05 150.85 L592.5 150.85 L591.95 150.85 L591.4 150.85 L590.85 150.85 L590.3 151.15 L589.75 151.15 L589.2 152.2 L588.65 153.85 L588.1 150.85 L587.55 150.85 L587 150.85 L586.45 150.85 L585.9 150.85 L585.35 151.23 L584.8 151.23 L584.25 152.56 L583.7 154.65 L583.15 150.85 L582.6 150.85 L582.05 150.85 L581.5 150.85 L580.95 150.85 L580.4 150.85 L579.85 151.29 L579.3 151.29 L578.75 152.83 L578.2 155.25 L577.65 150.85 L577.1 150.85 L576.55 150.85 L576 150.85 L575.45 150.85 L574.9 151.15 L574.35 151.15 L573.8 152.2 L573.25 153.85 L572.7 150.85 L572.15 150.85 L571.6 150.85 L571.05 150.85 L570.5 150.85 L569.95 150.85 L569.4 151.23 L568.85 151.23 L568.3 152.56 L567.75 154.65 L567.2 150.85 L566.65 150.85 L566.1 150.85 L565.55 150.85 L565 150.85 L564.45 150.85 L563.9 151.05 L563.35 151.05 L562.8 151.75 L562.25 152.85 L561.7 150.85 L561.15 150.85 L560.6 150.85 L560.05 150.85 L559.5 150.85 L558.95 151.15 L558.4 151.15 L557.85 152.2 L557.3 153.85 L556.75 150.85 L556.2 150.85 L555.65 150.85 L555.1 150.85 L554.55 150.85 L554 150.85 L553.45 151.27 L552.9 151.27 L552.35 152.74 L551.8 155.05 L551.25 150.85 L550.7 150.85 L550.15 150.85 L549.6 150.85 L549.05 150.85 L548.5 150.85 L547.95 151.15 L547.4 151.15 L546.85 152.2 L546.3 153.85 L545.75 150.85 L545.2 150.85 L544.65 150.85 L544.1 150.85 L543.55 150.85 L543 151.27 L542.45 151.27 L541.9 152.74 L541.35 155.05 L540.8 150.85 L540.25 150.85 L539.7 150.85 L539.15 150.85 L538.6 150.85 L538.05 150.85 L537.5 151.01 L536.95 151.01 L536.4 151.57 L535.85 152.45 L535.3 150.85 L534.75 150.85 L534.2 150.85 L533.65 150.85 L533.1 150.85 L532.55 150.85 L532 151.09 L531.45 151.09 L530.9 151.93 L530.35 153.25 L529.8 150.85 L529.25 150.85 L528.7 150.85 L528.15 150.85 L527.6 150.85 L527.05 151.05 L526.5 151.05 L525.95 151.75 L525.4 152.85 L524.85 150.85 L524.3 150.85 L523.75 150.85 L523.2 150.85 L522.65 150.85 L522.1 150.85 L521.55 151.31 L521 151.31 L520.45 152.92 L519.9 155.45 L519.35 150.85 L518.8 150.85 L518.25 150.85 L517.7 150.85 L517.15 150.85 L516.6 150.85 L516.05 151.05 L515.5 151.05 L514.95 151.75 L514.4 152.85 L513.85 150.85 L513.3 150.85 L512.75 150.85 L512.2 150.85 L511.65 150.85 L511.1 151.23 L510.55 151.23 L510 152.56 L509.45 154.65 L508.9 150.85 L508.35 150.85 L507.8 150.85 L507.25 150.85 L506.7 150.85 L506.15 150.85 L505.6 151.29 L505.05 151.29 L504.5 152.83 L503.95 155.25 L503.4 150.85 L502.85 150.85 L502.3 150.85 L501.75 150.85 L501.2 150.85 L500.65 151.27 L500.1 151.27 L499.55 152.74 L499 155.05 L498.45 150.85 L497.9 150.85 L497.35 150.85 L496.8 150.85 L496.25 150.85 L495.7 150.85 L495.15 151.09 L494.6 151.09 L494.05 151.93 L493.5 153.25 L492.95 150.85 L492.4 150.85 L491.85 150.85 L491.3 150.85 L490.75 150.85 L490.2 150.85 L489.65 151.05 L489.1 151.05 L488.55 151.75 L488 152.85 L487.45 150.85 L486.9 150.85 L486.35 150.85 L485.8 150.85 L485.25 150.85 L484.7 151.31 L484.15 151.31 L483.6 152.92Z" fill="#f6eaa6"/>
<rect x="651.8" y="131.1" width="170.4" height="26.9" fill="#141414" rx="1.8"/>
<rect x="652.2" y="132" width="169.6" height="25" fill="#a18e35" rx="1.6"/>
<text x="654.8" y="139.6" font-size="6.5" fill="#f3e8b4" stroke="#f3e8b4" stroke-width=".22">Chorus</text>
<path d="M653.2 147.89 L653.75 148.81 L654.3 148.81 L654.85 149.15 L655.4 149.15 L655.95 149.15 L656.5 149.15 L657.05 149.15 L657.6 146.79 L658.15 148.01 L658.7 148.85 L659.25 148.85 L659.8 149.15 L660.35 149.15 L660.9 149.15 L661.45 149.15 L662 149.15 L662.55 149.15 L663.1 146.55 L663.65 147.89 L664.2 148.81 L664.75 148.81 L665.3 149.15 L665.85 149.15 L666.4 149.15 L666.95 149.15 L667.5 149.15 L668.05 149.15 L668.6 147.91 L669.15 148.55 L669.7 148.99 L670.25 148.99 L670.8 149.15 L671.35 149.15 L671.9 149.15 L672.45 149.15 L673 149.15 L673.55 146.42 L674.1 147.83 L674.65 148.8 L675.2 148.8 L675.75 149.15 L676.3 149.15 L676.85 149.15 L677.4 149.15 L677.95 149.15 L678.5 149.15 L679.05 147.91 L679.6 148.55 L680.15 148.99 L680.7 148.99 L681.25 149.15 L681.8 149.15 L682.35 149.15 L682.9 149.15 L683.45 149.15 L684 149.15 L684.55 146.55 L685.1 147.89 L685.65 148.81 L686.2 148.81 L686.75 149.15 L687.3 149.15 L687.85 149.15 L688.4 149.15 L688.95 149.15 L689.5 146.3 L690.05 147.77 L690.6 148.78 L691.15 148.78 L691.7 149.15 L692.25 149.15 L692.8 149.15 L693.35 149.15 L693.9 149.15 L694.45 149.15 L695 146.42 L695.55 147.83 L696.1 148.8 L696.65 148.8 L697.2 149.15 L697.75 149.15 L698.3 149.15 L698.85 149.15 L699.4 149.15 L699.95 146.42 L700.5 147.83 L701.05 148.8 L701.6 148.8 L702.15 149.15 L702.7 149.15 L703.25 149.15 L703.8 149.15 L704.35 149.15 L704.9 149.15 L705.45 146.55 L706 147.89 L706.55 148.81 L707.1 148.81 L707.65 149.15 L708.2 149.15 L708.75 149.15 L709.3 149.15 L709.85 149.15 L710.4 149.15 L710.95 147.66 L711.5 148.43 L712.05 148.96 L712.6 148.96 L713.15 149.15 L713.7 149.15 L714.25 149.15 L714.8 149.15 L715.35 149.15 L715.9 147.66 L716.45 148.43 L717 148.96 L717.55 148.96 L718.1 149.15 L718.65 149.15 L719.2 149.15 L719.75 149.15 L720.3 149.15 L720.85 149.15 L721.4 146.42 L721.95 147.83 L722.5 148.8 L723.05 148.8 L723.6 149.15 L724.15 149.15 L724.7 149.15 L725.25 149.15 L725.8 149.15 L726.35 149.15 L726.9 147.66 L727.45 148.43 L728 148.96 L728.55 148.96 L729.1 149.15 L729.65 149.15 L730.2 149.15 L730.75 149.15 L731.3 149.15 L731.85 146.3 L732.4 147.77 L732.95 148.78 L733.5 148.78 L734.05 149.15 L734.6 149.15 L735.15 149.15 L735.7 149.15 L736.25 149.15 L736.8 149.15 L737.35 146.79 L737.9 148.01 L738.45 148.85 L739 148.85 L739.55 149.15 L740.1 149.15 L740.65 149.15 L741.2 149.15 L741.75 149.15 L742.3 149.15 L742.85 147.91 L743.4 148.55 L743.95 148.99 L744.5 148.99 L745.05 149.15 L745.6 149.15 L746.15 149.15 L746.7 149.15 L747.25 149.15 L747.8 146.79 L748.35 148.01 L748.9 148.85 L749.45 148.85 L750 149.15 L750.55 149.15 L751.1 149.15 L751.65 149.15 L752.2 149.15 L752.75 149.15 L753.3 146.55 L753.85 147.89 L754.4 148.81 L754.95 148.81 L755.5 149.15 L756.05 149.15 L756.6 149.15 L757.15 149.15 L757.7 149.15 L758.25 148.16 L758.8 148.67 L759.35 149.02 L759.9 149.02 L760.45 149.15 L761 149.15 L761.55 149.15 L762.1 149.15 L762.65 149.15 L763.2 149.15 L763.75 146.79 L764.3 148.01 L764.85 148.85 L765.4 148.85 L765.95 149.15 L766.5 149.15 L767.05 149.15 L767.6 149.15 L768.15 149.15 L768.7 149.15 L769.25 146.3 L769.8 147.77 L770.35 148.78 L770.9 148.78 L771.45 149.15 L772 149.15 L772.55 149.15 L773.1 149.15 L773.65 149.15 L774.2 146.79 L774.75 148.01 L775.3 148.85 L775.85 148.85 L776.4 149.15 L776.95 149.15 L777.5 149.15 L778.05 149.15 L778.6 149.15 L779.15 149.15 L779.7 147.29 L780.25 148.25 L780.8 148.91 L781.35 148.91 L781.9 149.15 L782.45 149.15 L783 149.15 L783.55 149.15 L784.1 149.15 L784.65 149.15 L785.2 146.3 L785.75 147.77 L786.3 148.78 L786.85 148.78 L787.4 149.15 L787.95 149.15 L788.5 149.15 L789.05 149.15 L789.6 149.15 L790.15 147.66 L790.7 148.43 L791.25 148.96 L791.8 148.96 L792.35 149.15 L792.9 149.15 L793.45 149.15 L794 149.15 L794.55 149.15 L795.1 149.15 L795.65 146.42 L796.2 147.83 L796.75 148.8 L797.3 148.8 L797.85 149.15 L798.4 149.15 L798.95 149.15 L799.5 149.15 L800.05 149.15 L800.6 149.15 L801.15 146.55 L801.7 147.89 L802.25 148.81 L802.8 148.81 L803.35 149.15 L803.9 149.15 L804.45 149.15 L805 149.15 L805.55 149.15 L806.1 147.29 L806.65 148.25 L807.2 148.91 L807.75 148.91 L808.3 149.15 L808.85 149.15 L809.4 149.15 L809.95 149.15 L810.5 149.15 L811.05 149.15 L811.6 146.55 L812.15 147.89 L812.7 148.81 L813.25 148.81 L813.8 149.15 L814.35 149.15 L814.9 149.15 L815.45 149.15 L816 149.15 L816.55 146.42 L817.1 147.83 L817.65 148.8 L818.2 148.8 L818.75 149.15 L819.3 149.15 L819.85 149.15 L820.4 149.15 L820.4 150.85 L819.85 150.85 L819.3 150.85 L818.75 150.85 L818.2 151.29 L817.65 151.29 L817.1 152.83 L816.55 155.25 L816 150.85 L815.45 150.85 L814.9 150.85 L814.35 150.85 L813.8 150.85 L813.25 151.27 L812.7 151.27 L812.15 152.74 L811.6 155.05 L811.05 150.85 L810.5 150.85 L809.95 150.85 L809.4 150.85 L808.85 150.85 L808.3 150.85 L807.75 151.15 L807.2 151.15 L806.65 152.2 L806.1 153.85 L805.55 150.85 L805 150.85 L804.45 150.85 L803.9 150.85 L803.35 150.85 L802.8 151.27 L802.25 151.27 L801.7 152.74 L801.15 155.05 L800.6 150.85 L800.05 150.85 L799.5 150.85 L798.95 150.85 L798.4 150.85 L797.85 150.85 L797.3 151.29 L796.75 151.29 L796.2 152.83 L795.65 155.25 L795.1 150.85 L794.55 150.85 L794 150.85 L793.45 150.85 L792.9 150.85 L792.35 150.85 L791.8 151.09 L791.25 151.09 L790.7 151.93 L790.15 153.25 L789.6 150.85 L789.05 150.85 L788.5 150.85 L787.95 150.85 L787.4 150.85 L786.85 151.31 L786.3 151.31 L785.75 152.92 L785.2 155.45 L784.65 150.85 L784.1 150.85 L783.55 150.85 L783 150.85 L782.45 150.85 L781.9 150.85 L781.35 151.15 L780.8 151.15 L780.25 152.2 L779.7 153.85 L779.15 150.85 L778.6 150.85 L778.05 150.85 L777.5 150.85 L776.95 150.85 L776.4 150.85 L775.85 151.23 L775.3 151.23 L774.75 152.56 L774.2 154.65 L773.65 150.85 L773.1 150.85 L772.55 150.85 L772 150.85 L771.45 150.85 L770.9 151.31 L770.35 151.31 L769.8 152.92 L769.25 155.45 L768.7 150.85 L768.15 150.85 L767.6 150.85 L767.05 150.85 L766.5 150.85 L765.95 150.85 L765.4 151.23 L764.85 151.23 L764.3 152.56 L763.75 154.65 L763.2 150.85 L762.65 150.85 L762.1 150.85 L761.55 150.85 L761 150.85 L760.45 150.85 L759.9 151.01 L759.35 151.01 L758.8 151.57 L758.25 152.45 L757.7 150.85 L757.15 150.85 L756.6 150.85 L756.05 150.85 L755.5 150.85 L754.95 151.27 L754.4 151.27 L753.85 152.74 L753.3 155.05 L752.75 150.85 L752.2 150.85 L751.65 150.85 L751.1 150.85 L750.55 150.85 L750 150.85 L749.45 151.23 L748.9 151.23 L748.35 152.56 L747.8 154.65 L747.25 150.85 L746.7 150.85 L746.15 150.85 L745.6 150.85 L745.05 150.85 L744.5 151.05 L743.95 151.05 L743.4 151.75 L742.85 152.85 L742.3 150.85 L741.75 150.85 L741.2 150.85 L740.65 150.85 L740.1 150.85 L739.55 150.85 L739 151.23 L738.45 151.23 L737.9 152.56 L737.35 154.65 L736.8 150.85 L736.25 150.85 L735.7 150.85 L735.15 150.85 L734.6 150.85 L734.05 150.85 L733.5 151.31 L732.95 151.31 L732.4 152.92 L731.85 155.45 L731.3 150.85 L730.75 150.85 L730.2 150.85 L729.65 150.85 L729.1 150.85 L728.55 151.09 L728 151.09 L727.45 151.93 L726.9 153.25 L726.35 150.85 L725.8 150.85 L725.25 150.85 L724.7 150.85 L724.15 150.85 L723.6 150.85 L723.05 151.29 L722.5 151.29 L721.95 152.83 L721.4 155.25 L720.85 150.85 L720.3 150.85 L719.75 150.85 L719.2 150.85 L718.65 150.85 L718.1 150.85 L717.55 151.09 L717 151.09 L716.45 151.93 L715.9 153.25 L715.35 150.85 L714.8 150.85 L714.25 150.85 L713.7 150.85 L713.15 150.85 L712.6 151.09 L712.05 151.09 L711.5 151.93 L710.95 153.25 L710.4 150.85 L709.85 150.85 L709.3 150.85 L708.75 150.85 L708.2 150.85 L707.65 150.85 L707.1 151.27 L706.55 151.27 L706 152.74 L705.45 155.05 L704.9 150.85 L704.35 150.85 L703.8 150.85 L703.25 150.85 L702.7 150.85 L702.15 150.85 L701.6 151.29 L701.05 151.29 L700.5 152.83 L699.95 155.25 L699.4 150.85 L698.85 150.85 L698.3 150.85 L697.75 150.85 L697.2 150.85 L696.65 151.29 L696.1 151.29 L695.55 152.83 L695 155.25 L694.45 150.85 L693.9 150.85 L693.35 150.85 L692.8 150.85 L692.25 150.85 L691.7 150.85 L691.15 151.31 L690.6 151.31 L690.05 152.92 L689.5 155.45 L688.95 150.85 L688.4 150.85 L687.85 150.85 L687.3 150.85 L686.75 150.85 L686.2 151.27 L685.65 151.27 L685.1 152.74 L684.55 155.05 L684 150.85 L683.45 150.85 L682.9 150.85 L682.35 150.85 L681.8 150.85 L681.25 150.85 L680.7 151.05 L680.15 151.05 L679.6 151.75 L679.05 152.85 L678.5 150.85 L677.95 150.85 L677.4 150.85 L676.85 150.85 L676.3 150.85 L675.75 150.85 L675.2 151.29 L674.65 151.29 L674.1 152.83 L673.55 155.25 L673 150.85 L672.45 150.85 L671.9 150.85 L671.35 150.85 L670.8 150.85 L670.25 151.05 L669.7 151.05 L669.15 151.75 L668.6 152.85 L668.05 150.85 L667.5 150.85 L666.95 150.85 L666.4 150.85 L665.85 150.85 L665.3 150.85 L664.75 151.27 L664.2 151.27 L663.65 152.74 L663.1 155.05 L662.55 150.85 L662 150.85 L661.45 150.85 L660.9 150.85 L660.35 150.85 L659.8 150.85 L659.25 151.23 L658.7 151.23 L658.15 152.56 L657.6 154.65 L657.05 150.85 L656.5 150.85 L655.95 150.85 L655.4 150.85 L654.85 150.85 L654.3 151.27 L653.75 151.27 L653.2 152.74Z" fill="#f6eaa6"/>
<rect x="821.4" y="131.1" width="167.8" height="26.9" fill="#141414" rx="1.8"/>
<rect x="821.8" y="132" width="167" height="25" fill="#a18e35" rx="1.6"/>
<text x="824.4" y="139.6" font-size="6.5" fill="#f3e8b4" stroke="#f3e8b4" stroke-width=".22">Verse 2</text>
<path d="M822.8 147.89 L823.35 148.81 L823.9 148.81 L824.45 149.15 L825 149.15 L825.55 149.15 L826.1 149.15 L826.65 149.15 L827.2 146.79 L827.75 148.01 L828.3 148.85 L828.85 148.85 L829.4 149.15 L829.95 149.15 L830.5 149.15 L831.05 149.15 L831.6 149.15 L832.15 149.15 L832.7 147.66 L833.25 148.43 L833.8 148.96 L834.35 148.96 L834.9 149.15 L835.45 149.15 L836 149.15 L836.55 149.15 L837.1 149.15 L837.65 149.15 L838.2 146.55 L838.75 147.89 L839.3 148.81 L839.85 148.81 L840.4 149.15 L840.95 149.15 L841.5 149.15 L842.05 149.15 L842.6 149.15 L843.15 147.66 L843.7 148.43 L844.25 148.96 L844.8 148.96 L845.35 149.15 L845.9 149.15 L846.45 149.15 L847 149.15 L847.55 149.15 L848.1 149.15 L848.65 147.91 L849.2 148.55 L849.75 148.99 L850.3 148.99 L850.85 149.15 L851.4 149.15 L851.95 149.15 L852.5 149.15 L853.05 149.15 L853.6 149.15 L854.15 146.79 L854.7 148.01 L855.25 148.85 L855.8 148.85 L856.35 149.15 L856.9 149.15 L857.45 149.15 L858 149.15 L858.55 149.15 L859.1 146.55 L859.65 147.89 L860.2 148.81 L860.75 148.81 L861.3 149.15 L861.85 149.15 L862.4 149.15 L862.95 149.15 L863.5 149.15 L864.05 149.15 L864.6 148.16 L865.15 148.67 L865.7 149.02 L866.25 149.02 L866.8 149.15 L867.35 149.15 L867.9 149.15 L868.45 149.15 L869 149.15 L869.55 147.91 L870.1 148.55 L870.65 148.99 L871.2 148.99 L871.75 149.15 L872.3 149.15 L872.85 149.15 L873.4 149.15 L873.95 149.15 L874.5 149.15 L875.05 146.42 L875.6 147.83 L876.15 148.8 L876.7 148.8 L877.25 149.15 L877.8 149.15 L878.35 149.15 L878.9 149.15 L879.45 149.15 L880 149.15 L880.55 147.66 L881.1 148.43 L881.65 148.96 L882.2 148.96 L882.75 149.15 L883.3 149.15 L883.85 149.15 L884.4 149.15 L884.95 149.15 L885.5 148.16 L886.05 148.67 L886.6 149.02 L887.15 149.02 L887.7 149.15 L888.25 149.15 L888.8 149.15 L889.35 149.15 L889.9 149.15 L890.45 149.15 L891 146.79 L891.55 148.01 L892.1 148.85 L892.65 148.85 L893.2 149.15 L893.75 149.15 L894.3 149.15 L894.85 149.15 L895.4 149.15 L895.95 149.15 L896.5 146.55 L897.05 147.89 L897.6 148.81 L898.15 148.81 L898.7 149.15 L899.25 149.15 L899.8 149.15 L900.35 149.15 L900.9 149.15 L901.45 147.91 L902 148.55 L902.55 148.99 L903.1 148.99 L903.65 149.15 L904.2 149.15 L904.75 149.15 L905.3 149.15 L905.85 149.15 L906.4 149.15 L906.95 148.16 L907.5 148.67 L908.05 149.02 L908.6 149.02 L909.15 149.15 L909.7 149.15 L910.25 149.15 L910.8 149.15 L911.35 149.15 L911.9 149.15 L912.45 148.16 L913 148.67 L913.55 149.02 L914.1 149.02 L914.65 149.15 L915.2 149.15 L915.75 149.15 L916.3 149.15 L916.85 149.15 L917.4 147.91 L917.95 148.55 L918.5 148.99 L919.05 148.99 L919.6 149.15 L920.15 149.15 L920.7 149.15 L921.25 149.15 L921.8 149.15 L922.35 149.15 L922.9 146.42 L923.45 147.83 L924 148.8 L924.55 148.8 L925.1 149.15 L925.65 149.15 L926.2 149.15 L926.75 149.15 L927.3 149.15 L927.85 146.3 L928.4 147.77 L928.95 148.78 L929.5 148.78 L930.05 149.15 L930.6 149.15 L931.15 149.15 L931.7 149.15 L932.25 149.15 L932.8 149.15 L933.35 146.79 L933.9 148.01 L934.45 148.85 L935 148.85 L935.55 149.15 L936.1 149.15 L936.65 149.15 L937.2 149.15 L937.75 149.15 L938.3 149.15 L938.85 147.91 L939.4 148.55 L939.95 148.99 L940.5 148.99 L941.05 149.15 L941.6 149.15 L942.15 149.15 L942.7 149.15 L943.25 149.15 L943.8 146.42 L944.35 147.83 L944.9 148.8 L945.45 148.8 L946 149.15 L946.55 149.15 L947.1 149.15 L947.65 149.15 L948.2 149.15 L948.75 149.15 L949.3 146.42 L949.85 147.83 L950.4 148.8 L950.95 148.8 L951.5 149.15 L952.05 149.15 L952.6 149.15 L953.15 149.15 L953.7 149.15 L954.25 149.15 L954.8 146.79 L955.35 148.01 L955.9 148.85 L956.45 148.85 L957 149.15 L957.55 149.15 L958.1 149.15 L958.65 149.15 L959.2 149.15 L959.75 147.66 L960.3 148.43 L960.85 148.96 L961.4 148.96 L961.95 149.15 L962.5 149.15 L963.05 149.15 L963.6 149.15 L964.15 149.15 L964.7 149.15 L965.25 147.66 L965.8 148.43 L966.35 148.96 L966.9 148.96 L967.45 149.15 L968 149.15 L968.55 149.15 L969.1 149.15 L969.65 149.15 L970.2 149.15 L970.75 146.55 L971.3 147.89 L971.85 148.81 L972.4 148.81 L972.95 149.15 L973.5 149.15 L974.05 149.15 L974.6 149.15 L975.15 149.15 L975.7 148.16 L976.25 148.67 L976.8 149.02 L977.35 149.02 L977.9 149.15 L978.45 149.15 L979 149.15 L979.55 149.15 L980.1 149.15 L980.65 149.15 L981.2 146.79 L981.75 148.01 L982.3 148.85 L982.85 148.85 L983.4 149.15 L983.95 149.15 L984.5 149.15 L985.05 149.15 L985.6 149.15 L986.15 146.42 L986.7 147.83 L987.25 148.8 L987.8 148.8 L987.8 151.29 L987.25 151.29 L986.7 152.83 L986.15 155.25 L985.6 150.85 L985.05 150.85 L984.5 150.85 L983.95 150.85 L983.4 150.85 L982.85 151.23 L982.3 151.23 L981.75 152.56 L981.2 154.65 L980.65 150.85 L980.1 150.85 L979.55 150.85 L979 150.85 L978.45 150.85 L977.9 150.85 L977.35 151.01 L976.8 151.01 L976.25 151.57 L975.7 152.45 L975.15 150.85 L974.6 150.85 L974.05 150.85 L973.5 150.85 L972.95 150.85 L972.4 151.27 L971.85 151.27 L971.3 152.74 L970.75 155.05 L970.2 150.85 L969.65 150.85 L969.1 150.85 L968.55 150.85 L968 150.85 L967.45 150.85 L966.9 151.09 L966.35 151.09 L965.8 151.93 L965.25 153.25 L964.7 150.85 L964.15 150.85 L963.6 150.85 L963.05 150.85 L962.5 150.85 L961.95 150.85 L961.4 151.09 L960.85 151.09 L960.3 151.93 L959.75 153.25 L959.2 150.85 L958.65 150.85 L958.1 150.85 L957.55 150.85 L957 150.85 L956.45 151.23 L955.9 151.23 L955.35 152.56 L954.8 154.65 L954.25 150.85 L953.7 150.85 L953.15 150.85 L952.6 150.85 L952.05 150.85 L951.5 150.85 L950.95 151.29 L950.4 151.29 L949.85 152.83 L949.3 155.25 L948.75 150.85 L948.2 150.85 L947.65 150.85 L947.1 150.85 L946.55 150.85 L946 150.85 L945.45 151.29 L944.9 151.29 L944.35 152.83 L943.8 155.25 L943.25 150.85 L942.7 150.85 L942.15 150.85 L941.6 150.85 L941.05 150.85 L940.5 151.05 L939.95 151.05 L939.4 151.75 L938.85 152.85 L938.3 150.85 L937.75 150.85 L937.2 150.85 L936.65 150.85 L936.1 150.85 L935.55 150.85 L935 151.23 L934.45 151.23 L933.9 152.56 L933.35 154.65 L932.8 150.85 L932.25 150.85 L931.7 150.85 L931.15 150.85 L930.6 150.85 L930.05 150.85 L929.5 151.31 L928.95 151.31 L928.4 152.92 L927.85 155.45 L927.3 150.85 L926.75 150.85 L926.2 150.85 L925.65 150.85 L925.1 150.85 L924.55 151.29 L924 151.29 L923.45 152.83 L922.9 155.25 L922.35 150.85 L921.8 150.85 L921.25 150.85 L920.7 150.85 L920.15 150.85 L919.6 150.85 L919.05 151.05 L918.5 151.05 L917.95 151.75 L917.4 152.85 L916.85 150.85 L916.3 150.85 L915.75 150.85 L915.2 150.85 L914.65 150.85 L914.1 151.01 L913.55 151.01 L913 151.57 L912.45 152.45 L911.9 150.85 L911.35 150.85 L910.8 150.85 L910.25 150.85 L909.7 150.85 L909.15 150.85 L908.6 151.01 L908.05 151.01 L907.5 151.57 L906.95 152.45 L906.4 150.85 L905.85 150.85 L905.3 150.85 L904.75 150.85 L904.2 150.85 L903.65 150.85 L903.1 151.05 L902.55 151.05 L902 151.75 L901.45 152.85 L900.9 150.85 L900.35 150.85 L899.8 150.85 L899.25 150.85 L898.7 150.85 L898.15 151.27 L897.6 151.27 L897.05 152.74 L896.5 155.05 L895.95 150.85 L895.4 150.85 L894.85 150.85 L894.3 150.85 L893.75 150.85 L893.2 150.85 L892.65 151.23 L892.1 151.23 L891.55 152.56 L891 154.65 L890.45 150.85 L889.9 150.85 L889.35 150.85 L888.8 150.85 L888.25 150.85 L887.7 150.85 L887.15 151.01 L886.6 151.01 L886.05 151.57 L885.5 152.45 L884.95 150.85 L884.4 150.85 L883.85 150.85 L883.3 150.85 L882.75 150.85 L882.2 151.09 L881.65 151.09 L881.1 151.93 L880.55 153.25 L880 150.85 L879.45 150.85 L878.9 150.85 L878.35 150.85 L877.8 150.85 L877.25 150.85 L876.7 151.29 L876.15 151.29 L875.6 152.83 L875.05 155.25 L874.5 150.85 L873.95 150.85 L873.4 150.85 L872.85 150.85 L872.3 150.85 L871.75 150.85 L871.2 151.05 L870.65 151.05 L870.1 151.75 L869.55 152.85 L869 150.85 L868.45 150.85 L867.9 150.85 L867.35 150.85 L866.8 150.85 L866.25 151.01 L865.7 151.01 L865.15 151.57 L864.6 152.45 L864.05 150.85 L863.5 150.85 L862.95 150.85 L862.4 150.85 L861.85 150.85 L861.3 150.85 L860.75 151.27 L860.2 151.27 L859.65 152.74 L859.1 155.05 L858.55 150.85 L858 150.85 L857.45 150.85 L856.9 150.85 L856.35 150.85 L855.8 151.23 L855.25 151.23 L854.7 152.56 L854.15 154.65 L853.6 150.85 L853.05 150.85 L852.5 150.85 L851.95 150.85 L851.4 150.85 L850.85 150.85 L850.3 151.05 L849.75 151.05 L849.2 151.75 L848.65 152.85 L848.1 150.85 L847.55 150.85 L847 150.85 L846.45 150.85 L845.9 150.85 L845.35 150.85 L844.8 151.09 L844.25 151.09 L843.7 151.93 L843.15 153.25 L842.6 150.85 L842.05 150.85 L841.5 150.85 L840.95 150.85 L840.4 150.85 L839.85 151.27 L839.3 151.27 L838.75 152.74 L838.2 155.05 L837.65 150.85 L837.1 150.85 L836.55 150.85 L836 150.85 L835.45 150.85 L834.9 150.85 L834.35 151.09 L833.8 151.09 L833.25 151.93 L832.7 153.25 L832.15 150.85 L831.6 150.85 L831.05 150.85 L830.5 150.85 L829.95 150.85 L829.4 150.85 L828.85 151.23 L828.3 151.23 L827.75 152.56 L827.2 154.65 L826.65 150.85 L826.1 150.85 L825.55 150.85 L825 150.85 L824.45 150.85 L823.9 151.27 L823.35 151.27 L822.8 152.74Z" fill="#f6eaa6"/>
<rect x="397.4" y="158.1" width="591.8" height="26.9" fill="#141414" rx="1.8"/>
<rect x="397.8" y="159" width="591" height="25" fill="#3c3c83" rx="1.6"/>
<text x="400.4" y="166.6" font-size="6.5" fill="#dcd9f8" stroke="#dcd9f8" stroke-width=".22">Bass</text>
<path d="M398.8 176.35 L399.4 176.35 L400 176.35 L400.6 176.35 L401.2 173.21 L401.8 173.65 L402.4 173.86 L403 173.77 L403.6 174.39 L404.2 174.35 L404.8 174.56 L405.4 174.28 L406 174.16 L406.6 173.95 L407.2 173.9 L407.8 173.38 L408.4 173.31 L409 176.3 L409.6 173.82 L410.2 173.07 L410.8 173.22 L411.4 173.78 L412 173.84 L412.6 173.67 L413.2 174.04 L413.8 174.06 L414.4 174.02 L415 174.59 L415.6 174.46 L416.2 174.85 L416.8 176.3 L417.4 175.28 L418 172.42 L418.6 172.64 L419.2 172.89 L419.8 173.18 L420.4 173.29 L421 173.71 L421.6 173.64 L422.2 173.61 L422.8 174.1 L423.4 174.34 L424 174.25 L424.6 174.58 L425.2 176.3 L425.8 176.35 L426.4 176.35 L427 176.35 L427.6 176.35 L428.2 173.6 L428.8 176.35 L429.4 176.35 L430 176.35 L430.6 176.35 L431.2 176.35 L431.8 176.35 L432.4 174.96 L433 172.78 L433.6 173.19 L434.2 173.62 L434.8 173.59 L435.4 173.52 L436 174.1 L436.6 173.79 L437.2 174.18 L437.8 174.41 L438.4 174.25 L439 174.74 L439.6 174.82 L440.2 176.3 L440.8 172.89 L441.4 173.52 L442 173.67 L442.6 174.01 L443.2 173.95 L443.8 173.98 L444.4 174.41 L445 174.15 L445.6 173.94 L446.2 173.48 L446.8 173.78 L447.4 173.54 L448 176.3 L448.6 175.87 L449.2 173.45 L449.8 173.28 L450.4 172.9 L451 173.41 L451.6 173.17 L452.2 173.56 L452.8 173.73 L453.4 173.87 L454 174.21 L454.6 174.09 L455.2 174.27 L455.8 174.64 L456.4 176.3 L457 176.35 L457.6 176.35 L458.2 176.35 L458.8 176.35 L459.4 173.6 L460 176.35 L460.6 176.35 L461.2 176.35 L461.8 176.35 L462.4 176.35 L463 176.35 L463.6 172.33 L464.2 173.14 L464.8 172.81 L465.4 173.34 L466 173.27 L466.6 174.04 L467.2 174.08 L467.8 173.87 L468.4 173.65 L469 173.84 L469.6 173.42 L470.2 172.68 L470.8 172.76 L471.4 176.3 L472 174.38 L472.6 173.03 L473.2 172.81 L473.8 173.17 L474.4 173.57 L475 173.47 L475.6 173.54 L476.2 173.86 L476.8 173.88 L477.4 174.1 L478 174.17 L478.6 174.37 L479.2 174.68 L479.8 172.63 L480.4 172.81 L481 173.49 L481.6 173.68 L482.2 173.57 L482.8 174.02 L483.4 174.16 L484 174.21 L484.6 174.18 L485.2 174.14 L485.8 173.49 L486.4 173.78 L487 173.38 L487.6 176.3 L488.2 176.35 L488.8 176.35 L489.4 176.35 L490 176.35 L490.6 173.6 L491.2 176.35 L491.8 176.35 L492.4 176.35 L493 176.35 L493.6 176.35 L494.2 176.35 L494.8 175.96 L495.4 173.83 L496 173.52 L496.6 173.53 L497.2 173.61 L497.8 173.69 L498.4 174.21 L499 174.18 L499.6 174.19 L500.2 174.42 L500.8 174.79 L501.4 174.86 L502 174.76 L502.6 176.3 L503.2 172.79 L503.8 172.58 L504.4 173.25 L505 173.16 L505.6 173.59 L506.2 173.67 L506.8 174.13 L507.4 173.85 L508 173.96 L508.6 173.59 L509.2 173.41 L509.8 172.72 L510.4 172.73 L511 176.3 L511.6 174.48 L512.2 173.59 L512.8 173.44 L513.4 173.96 L514 173.88 L514.6 174.18 L515.2 173.99 L515.8 174.21 L516.4 174.4 L517 174.56 L517.6 174.82 L518.2 174.98 L518.8 176.3 L519.4 176.35 L520 176.35 L520.6 176.35 L521.2 176.35 L521.8 173.6 L522.4 173.6 L523 176.35 L523.6 176.35 L524.2 176.35 L524.8 176.35 L525.4 176.35 L526 173.11 L526.6 173.44 L527.2 173.71 L527.8 174 L528.4 173.81 L529 174.19 L529.6 174.56 L530.2 174.56 L530.8 174.56 L531.4 174.06 L532 173.95 L532.6 173.87 L533.2 173.76 L533.8 176.3 L534.4 172.93 L535 172.76 L535.6 172.87 L536.2 173.71 L536.8 173.5 L537.4 173.93 L538 173.94 L538.6 174.21 L539.2 173.9 L539.8 173.57 L540.4 173.68 L541 173.06 L541.6 172.6 L542.2 176.3 L542.8 174.28 L543.4 173.04 L544 173.21 L544.6 172.77 L545.2 173.19 L545.8 173.25 L546.4 173.72 L547 174 L547.6 174.14 L548.2 174.08 L548.8 174.23 L549.4 174.35 L550 174.7 L550.6 176.35 L551.2 176.35 L551.8 176.35 L552.4 176.35 L553 173.6 L553.6 173.6 L554.2 176.35 L554.8 176.35 L555.4 176.35 L556 176.35 L556.6 176.35 L557.2 176.35 L557.8 174.49 L558.4 172.81 L559 172.99 L559.6 173.52 L560.2 173.9 L560.8 173.6 L561.4 174.12 L562 173.85 L562.6 174.24 L563.2 174.47 L563.8 174.41 L564.4 174.57 L565 176.3 L565.6 172.31 L566.2 172.64 L566.8 173.21 L567.4 173.3 L568 173.86 L568.6 173.86 L569.2 174 L569.8 174.16 L570.4 173.76 L571 173.43 L571.6 173.59 L572.2 173.25 L572.8 173.32 L573.4 176.3 L574 173.65 L574.6 173.72 L575.2 173.72 L575.8 173.77 L576.4 174.29 L577 174.24 L577.6 174.39 L578.2 174.46 L578.8 174.23 L579.4 173.96 L580 174.04 L580.6 173.95 L581.2 173.42 L581.8 176.3 L582.4 176.35 L583 176.35 L583.6 176.35 L584.2 176.35 L584.8 173.6 L585.4 176.35 L586 176.35 L586.6 176.35 L587.2 176.35 L587.8 176.35 L588.4 176.35 L589 174.8 L589.6 173.46 L590.2 173.4 L590.8 173.37 L591.4 173.43 L592 173.93 L592.6 173.7 L593.2 173.99 L593.8 174.4 L594.4 174.38 L595 174.29 L595.6 174.69 L596.2 174.67 L596.8 176.3 L597.4 173.67 L598 172.74 L598.6 172.69 L599.2 173.15 L599.8 173.5 L600.4 173.45 L601 173.72 L601.6 173.74 L602.2 173.75 L602.8 173.95 L603.4 174.49 L604 174.33 L604.6 176.3 L605.2 172.68 L605.8 172.96 L606.4 173.55 L607 173.8 L607.6 173.87 L608.2 173.94 L608.8 174.3 L609.4 174.1 L610 174.12 L610.6 173.72 L611.2 173.55 L611.8 173.65 L612.4 173.11 L613 176.3 L613.6 176.35 L614.2 176.35 L614.8 176.35 L615.4 176.35 L616 173.6 L616.6 176.35 L617.2 176.35 L617.8 176.35 L618.4 176.35 L619 176.35 L619.6 176.35 L620.2 172.69 L620.8 173.1 L621.4 173.54 L622 173.58 L622.6 173.9 L623.2 174.3 L623.8 174.38 L624.4 174.12 L625 174.08 L625.6 173.97 L626.2 173.34 L626.8 173.29 L627.4 173.35 L628 176.3 L628.6 174.23 L629.2 173.2 L629.8 173.14 L630.4 173.35 L631 173.46 L631.6 174.01 L632.2 173.96 L632.8 174.14 L633.4 174.32 L634 174.45 L634.6 174.63 L635.2 174.68 L635.8 176.3 L636.4 175.89 L637 173.49 L637.6 172.86 L638.2 172.99 L638.8 173.08 L639.4 173.72 L640 173.78 L640.6 173.66 L641.2 173.82 L641.8 173.86 L642.4 174.08 L643 174.49 L643.6 174.6 L644.2 176.3 L644.8 176.35 L645.4 176.35 L646 176.35 L646.6 176.35 L647.2 173.6 L647.8 176.35 L648.4 176.35 L649 176.35 L649.6 176.35 L650.2 176.35 L650.8 176.35 L651.4 175.64 L652 173.58 L652.6 173.83 L653.2 173.62 L653.8 173.91 L654.4 174.09 L655 174.02 L655.6 174.22 L656.2 174.32 L656.8 174.66 L657.4 174.46 L658 174.65 L658.6 174.82 L659.2 176.3 L659.8 174.88 L660.4 173.5 L661 173.42 L661.6 173.75 L662.2 173.68 L662.8 173.97 L663.4 174.12 L664 174.49 L664.6 174.6 L665.2 174.71 L665.8 174.72 L666.4 174.87 L667 174.98 L667.6 176.3 L668.2 173.7 L668.8 172.87 L669.4 173.55 L670 173.39 L670.6 173.83 L671.2 173.86 L671.8 173.97 L672.4 173.9 L673 174.13 L673.6 174.18 L674.2 174.41 L674.8 174.66 L675.4 176.3 L676 176.35 L676.6 176.35 L677.2 176.35 L677.8 176.35 L678.4 173.6 L679 176.35 L679.6 176.35 L680.2 176.35 L680.8 176.35 L681.4 176.35 L682 176.35 L682.6 175.96 L683.2 173.61 L683.8 173.4 L684.4 173.8 L685 173.72 L685.6 174.06 L686.2 174.05 L686.8 174.02 L687.4 174.38 L688 174.41 L688.6 174.48 L689.2 174.64 L689.8 174.97 L690.4 176.3 L691 174.89 L691.6 172.77 L692.2 172.55 L692.8 172.95 L693.4 173.41 L694 173.47 L694.6 173.65 L695.2 173.73 L695.8 173.67 L696.4 173.98 L697 174.26 L697.6 174.3 L698.2 174.46 L698.8 176.3 L699.4 172.94 L700 173.03 L700.6 173.25 L701.2 173.43 L701.8 173.76 L702.4 173.73 L703 174.29 L703.6 173.69 L704.2 173.55 L704.8 173.4 L705.4 173.27 L706 172.58 L706.6 176.3 L707.2 176.35 L707.8 176.35 L708.4 176.35 L709 176.35 L709.6 173.6 L710.2 173.6 L710.8 176.35 L711.4 176.35 L712 176.35 L712.6 176.35 L713.2 176.35 L713.8 176.3 L714.4 173.95 L715 172.81 L715.6 173.44 L716.2 173.15 L716.8 173.38 L717.4 173.45 L718 173.72 L718.6 174.12 L719.2 174.23 L719.8 174.27 L720.4 174.39 L721 174.53 L721.6 176.3 L722.2 172.58 L722.8 172.71 L723.4 173.25 L724 173.05 L724.6 173.58 L725.2 173.53 L725.8 173.8 L726.4 173.86 L727 173.59 L727.6 173.61 L728.2 173.01 L728.8 172.99 L729.4 172.62 L730 176.3 L730.6 174.63 L731.2 173.08 L731.8 172.72 L732.4 172.76 L733 173.33 L733.6 173.43 L734.2 173.48 L734.8 173.5 L735.4 173.84 L736 174.18 L736.6 174.27 L737.2 174.38 L737.8 174.41 L738.4 176.35 L739 176.35 L739.6 176.35 L740.2 176.35 L740.8 173.6 L741.4 173.6 L742 176.35 L742.6 176.35 L743.2 176.35 L743.8 176.35 L744.4 176.35 L745 176.35 L745.6 174.49 L746.2 173.37 L746.8 173.17 L747.4 173.38 L748 173.49 L748.6 173.56 L749.2 174.03 L749.8 173.98 L750.4 174.3 L751 174.48 L751.6 174.38 L752.2 174.5 L752.8 176.3 L753.4 175.85 L754 173.23 L754.6 172.84 L755.2 173 L755.8 173.27 L756.4 173.14 L757 173.52 L757.6 173.71 L758.2 174.19 L758.8 174.13 L759.4 174.28 L760 174.61 L760.6 174.54 L761.2 176.3 L761.8 174.85 L762.4 173.03 L763 173.25 L763.6 173.37 L764.2 173.17 L764.8 173.52 L765.4 173.64 L766 174.06 L766.6 174.19 L767.2 174.32 L767.8 174.36 L768.4 174.4 L769 174.73 L769.6 176.3 L770.2 176.35 L770.8 176.35 L771.4 176.35 L772 176.35 L772.6 173.6 L773.2 176.35 L773.8 176.35 L774.4 176.35 L775 176.35 L775.6 176.35 L776.2 176.35 L776.8 174.62 L777.4 173.17 L778 173.14 L778.6 173.1 L779.2 173.41 L779.8 173.35 L780.4 173.77 L781 174.09 L781.6 174.11 L782.2 174.14 L782.8 174.38 L783.4 174.41 L784 174.51 L784.6 176.3 L785.2 173.34 L785.8 173.12 L786.4 172.85 L787 173.42 L787.6 173.42 L788.2 173.33 L788.8 173.6 L789.4 173.85 L790 174.1 L790.6 173.93 L791.2 174.32 L791.8 174.3 L792.4 176.3 L793 173.09 L793.6 173.43 L794.2 173.71 L794.8 173.73 L795.4 174.22 L796 174.51 L796.6 174.38 L797.2 174.53 L797.8 174.36 L798.4 174.32 L799 173.68 L799.6 173.88 L800.2 173.48 L800.8 176.3 L801.4 176.35 L802 176.35 L802.6 176.35 L803.2 176.35 L803.8 173.6 L804.4 176.35 L805 176.35 L805.6 176.35 L806.2 176.35 L806.8 176.35 L807.4 176.35 L808 173.28 L808.6 172.99 L809.2 173.56 L809.8 173.84 L810.4 174.03 L811 173.97 L811.6 174.49 L812.2 174.49 L812.8 174 L813.4 173.68 L814 173.59 L814.6 173.5 L815.2 172.96 L815.8 176.3 L816.4 174.57 L817 173.5 L817.6 173.89 L818.2 173.54 L818.8 174.07 L819.4 174.22 L820 174.37 L820.6 174.16 L821.2 174.37 L821.8 174.63 L822.4 174.73 L823 174.81 L823.6 176.3 L824.2 173.03 L824.8 173.34 L825.4 173.65 L826 173.85 L826.6 174.3 L827.2 174.19 L827.8 174.39 L828.4 174.37 L829 174.14 L829.6 174.14 L830.2 173.93 L830.8 173.51 L831.4 173.81 L832 176.3 L832.6 176.35 L833.2 176.35 L833.8 176.35 L834.4 176.35 L835 173.6 L835.6 176.35 L836.2 176.35 L836.8 176.35 L837.4 176.35 L838 176.35 L838.6 176.35 L839.2 175.27 L839.8 173.12 L840.4 172.47 L841 172.71 L841.6 173.36 L842.2 173.29 L842.8 173.8 L843.4 173.52 L844 173.59 L844.6 173.9 L845.2 174.1 L845.8 174.54 L846.4 174.59 L847 176.3 L847.6 172.72 L848.2 173.05 L848.8 173.3 L849.4 173.32 L850 173.6 L850.6 173.72 L851.2 173.97 L851.8 174.02 L852.4 173.63 L853 173.48 L853.6 173.41 L854.2 172.93 L854.8 172.34 L855.4 176.3 L856 173.96 L856.6 173.45 L857.2 173.81 L857.8 173.58 L858.4 174.06 L859 173.9 L859.6 174.09 L860.2 174.27 L860.8 174.45 L861.4 174.61 L862 174.71 L862.6 174.85 L863.2 176.3 L863.8 176.35 L864.4 176.35 L865 176.35 L865.6 176.35 L866.2 173.6 L866.8 176.35 L867.4 176.35 L868 176.35 L868.6 176.35 L869.2 176.35 L869.8 176.35 L870.4 173.02 L871 172.81 L871.6 172.85 L872.2 173.59 L872.8 173.76 L873.4 173.76 L874 174.06 L874.6 174.25 L875.2 173.94 L875.8 173.42 L876.4 173.64 L877 173.4 L877.6 173.29 L878.2 176.3 L878.8 172.23 L879.4 172.48 L880 172.77 L880.6 173.13 L881.2 173.53 L881.8 174.08 L882.4 173.9 L883 173.99 L883.6 173.94 L884.2 173.23 L884.8 172.97 L885.4 173.22 L886 173.11 L886.6 176.3 L887.2 174.07 L887.8 172.96 L888.4 172.85 L889 173.03 L889.6 173.19 L890.2 173.39 L890.8 173.52 L891.4 173.8 L892 174.03 L892.6 174.3 L893.2 174.52 L893.8 174.55 L894.4 176.3 L895 176.35 L895.6 176.35 L896.2 176.35 L896.8 176.35 L897.4 173.6 L898 173.6 L898.6 176.35 L899.2 176.35 L899.8 176.35 L900.4 176.35 L901 176.35 L901.6 176.3 L902.2 173.93 L902.8 173.01 L903.4 173.35 L904 173.34 L904.6 173.39 L905.2 173.87 L905.8 173.71 L906.4 173.93 L907 174.12 L907.6 174.11 L908.2 174.39 L908.8 174.51 L909.4 176.3 L910 172.9 L910.6 172.69 L911.2 173.28 L911.8 173.29 L912.4 173.8 L913 173.64 L913.6 173.97 L914.2 174.16 L914.8 173.57 L915.4 173.72 L916 173.21 L916.6 173.03 L917.2 172.55 L917.8 176.3 L918.4 173.13 L919 173.8 L919.6 173.64 L920.2 174.14 L920.8 174.01 L921.4 174.39 L922 174.57 L922.6 174.36 L923.2 174.11 L923.8 173.85 L924.4 173.83 L925 173.42 L925.6 173.73 L926.2 176.35 L926.8 176.35 L927.4 176.35 L928 176.35 L928.6 173.6 L929.2 173.6 L929.8 176.35 L930.4 176.35 L931 176.35 L931.6 176.35 L932.2 176.35 L932.8 176.35 L933.4 174.37 L934 173.07 L934.6 173.29 L935.2 173.21 L935.8 173.46 L936.4 173.59 L937 173.69 L937.6 174.13 L938.2 174.1 L938.8 174.32 L939.4 174.42 L940 174.77 L940.6 176.3 L941.2 175.88 L941.8 173.52 L942.4 173.1 L943 173.04 L943.6 173.55 L944.2 173.31 L944.8 173.83 L945.4 174 L946 173.71 L946.6 174.32 L947.2 174.27 L947.8 174.22 L948.4 174.45 L949 176.3 L949.6 173.34 L950.2 173.54 L950.8 173.28 L951.4 173.85 L952 174.07 L952.6 174.11 L953.2 174.37 L953.8 174.41 L954.4 174.26 L955 173.93 L955.6 173.71 L956.2 173.27 L956.8 173.2 L957.4 176.3 L958 176.35 L958.6 176.35 L959.2 176.35 L959.8 176.35 L960.4 173.6 L961 176.35 L961.6 176.35 L962.2 176.35 L962.8 176.35 L963.4 176.35 L964 176.35 L964.6 172.69 L965.2 172.93 L965.8 173.32 L966.4 173.85 L967 174.02 L967.6 174.32 L968.2 174.53 L968.8 174.19 L969.4 174.09 L970 173.6 L970.6 173.59 L971.2 173.29 L971.8 173.35 L972.4 176.3 L973 173.29 L973.6 172.65 L974.2 173.08 L974.8 173.12 L975.4 172.98 L976 173.71 L976.6 173.36 L977.2 173.78 L977.8 174.05 L978.4 173.94 L979 174.24 L979.6 174.51 L980.2 176.3 L980.8 172.36 L981.4 173.06 L982 173.21 L982.6 173.05 L983.2 173.66 L983.8 173.94 L984.4 173.91 L985 173.86 L985.6 173.75 L986.2 173.29 L986.8 173.01 L987.4 172.89 L987.4 180.44 L986.8 180.33 L986.2 180.07 L985.6 179.64 L985 179.54 L984.4 179.49 L983.8 179.46 L983.2 179.73 L982.6 180.29 L982 180.14 L981.4 180.28 L980.8 180.93 L980.2 177.21 L979.6 178.7 L979 178.93 L978.4 179.18 L977.8 179.08 L977.2 179.31 L976.6 179.66 L976 179.37 L975.4 179.97 L974.8 179.85 L974.2 179.89 L973.6 180.25 L973 179.71 L972.4 177.21 L971.8 179.94 L971.2 180 L970.6 179.73 L970 179.72 L969.4 179.27 L968.8 179.18 L968.2 178.86 L967.6 179.06 L967 179.33 L966.4 179.49 L965.8 179.97 L965.2 180.32 L964.6 180.54 L964 177.25 L963.4 177.16 L962.8 177.2 L962.2 177.16 L961.6 177.17 L961 177.24 L960.4 179.76 L959.8 177.19 L959.2 177.16 L958.6 177.21 L958 177.22 L957.4 177.25 L956.8 180.04 L956.2 179.98 L955.6 179.58 L955 179.38 L954.4 179.08 L953.8 178.95 L953.2 178.99 L952.6 179.22 L952 179.25 L951.4 179.45 L950.8 179.97 L950.2 179.74 L949.6 179.91 L949 177.29 L948.4 179.09 L947.8 179.32 L947.2 179.27 L946.6 179.22 L946 179.82 L945.4 179.53 L944.8 179.7 L944.2 180.2 L943.6 179.97 L943 180.47 L942.4 180.42 L941.8 180 L941.2 177.7 L940.6 177.26 L940 178.64 L939.4 178.96 L938.8 179.06 L938.2 179.26 L937.6 179.23 L937 179.64 L936.4 179.72 L935.8 179.84 L935.2 180.07 L934.6 179.99 L934 180.2 L933.4 179.01 L932.8 177.2 L932.2 177.18 L931.6 177.2 L931 177.24 L930.4 177.21 L929.8 177.18 L929.2 179.77 L928.6 179.62 L928 177.25 L927.4 177.22 L926.8 177.23 L926.2 177.17 L925.6 179.48 L925 179.75 L924.4 179.39 L923.8 179.38 L923.2 179.15 L922.6 178.93 L922 178.75 L921.4 178.9 L920.8 179.23 L920.2 179.12 L919.6 179.56 L919 179.42 L918.4 180 L917.8 177.24 L917.2 180.55 L916.6 180.13 L916 179.97 L915.4 179.52 L914.8 179.65 L914.2 179.13 L913.6 179.3 L913 179.59 L912.4 179.45 L911.8 179.9 L911.2 179.91 L910.6 180.42 L910 180.24 L909.4 177.26 L908.8 178.88 L908.2 179 L907.6 179.25 L907 179.24 L906.4 179.41 L905.8 179.62 L905.2 179.47 L904.6 179.9 L904 179.95 L903.4 179.94 L902.8 180.25 L902.2 179.41 L901.6 177.26 L901 177.18 L900.4 177.2 L899.8 177.22 L899.2 177.22 L898.6 177.21 L898 179.86 L897.4 179.63 L896.8 177.25 L896.2 177.22 L895.6 177.21 L895 177.2 L894.4 177.24 L893.8 178.79 L893.2 178.82 L892.6 179.01 L892 179.26 L891.4 179.46 L890.8 179.71 L890.2 179.82 L889.6 180 L889 180.14 L888.4 180.3 L887.8 180.2 L887.2 179.22 L886.6 177.2 L886 179.78 L885.4 179.7 L884.8 179.89 L884.2 179.69 L883.6 179.11 L883 179.07 L882.4 179.14 L881.8 179 L881.2 179.44 L880.6 179.76 L880 180.06 L879.4 180.29 L878.8 180.5 L878.2 177.25 L877.6 179.95 L877 179.86 L876.4 179.63 L875.8 179.84 L875.2 179.37 L874.6 179.09 L874 179.26 L873.4 179.53 L872.8 179.53 L872.2 179.68 L871.6 180.34 L871 180.38 L870.4 180.19 L869.8 177.24 L869.2 177.24 L868.6 177.24 L868 177.22 L867.4 177.2 L866.8 177.24 L866.2 179.63 L865.6 177.24 L865 177.18 L864.4 177.17 L863.8 177.24 L863.2 177.25 L862.6 178.57 L862 178.7 L861.4 178.79 L860.8 178.93 L860.2 179.1 L859.6 179.26 L859 179.43 L858.4 179.29 L857.8 179.72 L857.2 179.52 L856.6 179.85 L856 179.38 L855.4 177.25 L854.8 180.99 L854.2 180.43 L853.6 179.99 L853 179.92 L852.4 179.77 L851.8 179.41 L851.2 179.46 L850.6 179.7 L850 179.81 L849.4 180.06 L848.8 180.08 L848.2 180.33 L847.6 180.63 L847 177.27 L846.4 178.89 L845.8 178.94 L845.2 179.36 L844.6 179.55 L844 179.85 L843.4 179.91 L842.8 179.64 L842.2 180.13 L841.6 180.07 L841 180.68 L840.4 180.91 L839.8 180.29 L839.2 178.25 L838.6 177.18 L838 177.21 L837.4 177.23 L836.8 177.24 L836.2 177.25 L835.6 177.19 L835 179.49 L834.4 177.19 L833.8 177.2 L833.2 177.17 L832.6 177.19 L832 177.22 L831.4 179.33 L830.8 179.58 L830.2 179.23 L829.6 179.05 L829 179.05 L828.4 178.86 L827.8 178.84 L827.2 179.01 L826.6 178.91 L826 179.29 L825.4 179.47 L824.8 179.73 L824.2 179.99 L823.6 177.29 L823 178.74 L822.4 178.82 L821.8 178.92 L821.2 179.17 L820.6 179.38 L820 179.17 L819.4 179.31 L818.8 179.46 L818.2 179.98 L817.6 179.64 L817 180.02 L816.4 178.97 L815.8 177.24 L815.2 180.17 L814.6 179.7 L814 179.61 L813.4 179.53 L812.8 179.26 L812.2 178.82 L811.6 178.83 L811 179.28 L810.4 179.23 L809.8 179.4 L809.2 179.64 L808.6 180.14 L808 179.89 L807.4 177.23 L806.8 177.24 L806.2 177.17 L805.6 177.18 L805 177.17 L804.4 177.22 L803.8 179.36 L803.2 177.21 L802.6 177.18 L802 177.18 L801.4 177.2 L800.8 177.28 L800.2 179.96 L799.6 179.58 L799 179.77 L798.4 179.16 L797.8 179.12 L797.2 178.96 L796.6 179.1 L796 178.98 L795.4 179.26 L794.8 179.72 L794.2 179.74 L793.6 180.01 L793 180.33 L792.4 177.27 L791.8 179.13 L791.2 179.12 L790.6 179.48 L790 179.32 L789.4 179.55 L788.8 179.79 L788.2 180.04 L787.6 179.95 L787 179.96 L786.4 180.48 L785.8 180.24 L785.2 180.03 L784.6 177.27 L784 179.09 L783.4 179.19 L782.8 179.21 L782.2 179.45 L781.6 179.48 L781 179.5 L780.4 179.82 L779.8 180.24 L779.2 180.18 L778.6 180.49 L778 180.45 L777.4 180.42 L776.8 178.97 L776.2 177.18 L775.6 177.17 L775 177.2 L774.4 177.16 L773.8 177.22 L773.2 177.25 L772.6 179.61 L772 177.18 L771.4 177.22 L770.8 177.19 L770.2 177.17 L769.6 177.27 L769 178.76 L768.4 179.07 L767.8 179.12 L767.2 179.15 L766.6 179.27 L766 179.4 L765.4 179.8 L764.8 179.92 L764.2 180.25 L763.6 180.05 L763 180.17 L762.4 180.38 L761.8 178.65 L761.2 177.2 L760.6 178.62 L760 178.56 L759.4 178.83 L758.8 178.95 L758.2 178.9 L757.6 179.29 L757 179.44 L756.4 179.75 L755.8 179.64 L755.2 179.86 L754.6 179.99 L754 179.68 L753.4 177.56 L752.8 177.22 L752.2 178.75 L751.6 178.85 L751 178.76 L750.4 178.92 L749.8 179.18 L749.2 179.14 L748.6 179.54 L748 179.6 L747.4 179.7 L746.8 179.87 L746.2 179.7 L745.6 178.76 L745 177.17 L744.4 177.25 L743.8 177.23 L743.2 177.23 L742.6 177.17 L742 177.2 L741.4 179.86 L740.8 179.49 L740.2 177.17 L739.6 177.24 L739 177.19 L738.4 177.21 L737.8 178.78 L737.2 178.81 L736.6 178.9 L736 178.97 L735.4 179.25 L734.8 179.54 L734.2 179.55 L733.6 179.59 L733 179.68 L732.4 180.15 L731.8 180.18 L731.2 179.88 L730.6 178.6 L730 177.21 L729.4 180.24 L728.8 179.93 L728.2 179.92 L727.6 179.43 L727 179.44 L726.4 179.21 L725.8 179.27 L725.2 179.49 L724.6 179.45 L724 179.89 L723.4 179.72 L722.8 180.16 L722.2 180.27 L721.6 177.2 L721 178.63 L720.4 178.74 L719.8 178.84 L719.2 178.87 L718.6 178.96 L718 179.29 L717.4 179.5 L716.8 179.55 L716.2 179.74 L715.6 179.5 L715 180.02 L714.4 179.1 L713.8 177.2 L713.2 177.21 L712.6 177.23 L712 177.18 L711.4 177.18 L710.8 177.2 L710.2 179.89 L709.6 179.85 L709 177.24 L708.4 177.23 L707.8 177.21 L707.2 177.21 L706.6 177.26 L706 180.68 L705.4 180.05 L704.8 179.92 L704.2 179.79 L703.6 179.66 L703 179.1 L702.4 179.62 L701.8 179.6 L701.2 179.9 L700.6 180.06 L700 180.27 L699.4 180.35 L698.8 177.21 L698.2 178.73 L697.6 178.87 L697 178.9 L696.4 179.13 L695.8 179.39 L695.2 179.34 L694.6 179.4 L694 179.55 L693.4 179.6 L692.8 179.98 L692.2 180.31 L691.6 180.13 L691 178.38 L690.4 177.23 L689.8 178.36 L689.2 178.65 L688.6 178.78 L688 178.84 L687.4 178.87 L686.8 179.18 L686.2 179.15 L685.6 179.14 L685 179.44 L684.4 179.36 L683.8 179.71 L683.2 179.53 L682.6 177.52 L682 177.2 L681.4 177.18 L680.8 177.18 L680.2 177.23 L679.6 177.25 L679 177.25 L678.4 179.71 L677.8 177.19 L677.2 177.16 L676.6 177.22 L676 177.22 L675.4 177.22 L674.8 178.6 L674.2 178.81 L673.6 179 L673 179.05 L672.4 179.24 L671.8 179.18 L671.2 179.28 L670.6 179.3 L670 179.67 L669.4 179.53 L668.8 180.11 L668.2 179.41 L667.6 177.22 L667 178.33 L666.4 178.42 L665.8 178.55 L665.2 178.56 L664.6 178.65 L664 178.75 L663.4 179.06 L662.8 179.19 L662.2 179.43 L661.6 179.37 L661 179.65 L660.4 179.58 L659.8 178.42 L659.2 177.22 L658.6 178.46 L658 178.6 L657.4 178.76 L656.8 178.59 L656.2 178.87 L655.6 178.96 L655 179.13 L654.4 179.07 L653.8 179.22 L653.2 179.46 L652.6 179.29 L652 179.5 L651.4 177.77 L650.8 177.2 L650.2 177.2 L649.6 177.2 L649 177.22 L648.4 177.22 L647.8 177.2 L647.2 179.67 L646.6 177.17 L646 177.2 L645.4 177.16 L644.8 177.19 L644.2 177.2 L643.6 178.56 L643 178.66 L642.4 178.99 L641.8 179.16 L641.2 179.19 L640.6 179.32 L640 179.22 L639.4 179.27 L638.8 179.79 L638.2 179.86 L637.6 179.96 L637 179.46 L636.4 177.53 L635.8 177.2 L635.2 178.51 L634.6 178.55 L634 178.69 L633.4 178.8 L632.8 178.94 L632.2 179.09 L631.6 179.04 L631 179.49 L630.4 179.58 L629.8 179.74 L629.2 179.7 L628.6 178.86 L628 177.27 L627.4 180.03 L626.8 180.09 L626.2 180.05 L625.6 179.45 L625 179.35 L624.4 179.31 L623.8 179.07 L623.2 179.14 L622.6 179.52 L622 179.82 L621.4 179.86 L620.8 180.27 L620.2 180.65 L619.6 177.22 L619 177.17 L618.4 177.24 L617.8 177.22 L617.2 177.16 L616.6 177.2 L616 179.89 L615.4 177.23 L614.8 177.25 L614.2 177.19 L613.6 177.19 L613 177.27 L612.4 180.25 L611.8 179.74 L611.2 179.84 L610.6 179.68 L610 179.31 L609.4 179.32 L608.8 179.14 L608.2 179.47 L607.6 179.53 L607 179.6 L606.4 179.83 L605.8 180.39 L605.2 180.65 L604.6 177.21 L604 178.84 L603.4 178.71 L602.8 179.15 L602.2 179.31 L601.6 179.32 L601 179.34 L600.4 179.56 L599.8 179.52 L599.2 179.81 L598.6 180.19 L598 180.14 L597.4 179.38 L596.8 177.21 L596.2 178.78 L595.6 178.76 L595 179.14 L594.4 179.05 L593.8 179.04 L593.2 179.42 L592.6 179.69 L592 179.48 L591.4 179.94 L590.8 180 L590.2 179.97 L589.6 179.91 L589 178.67 L588.4 177.17 L587.8 177.24 L587.2 177.24 L586.6 177.22 L586 177.18 L585.4 177.23 L584.8 179.63 L584.2 177.24 L583.6 177.23 L583 177.2 L582.4 177.25 L581.8 177.3 L581.2 180.15 L580.6 179.62 L580 179.54 L579.4 179.61 L578.8 179.35 L578.2 179.13 L577.6 179.19 L577 179.34 L576.4 179.29 L575.8 179.8 L575.2 179.86 L574.6 179.86 L574 179.93 L573.4 177.25 L572.8 179.92 L572.2 179.98 L571.6 179.68 L571 179.82 L570.4 179.53 L569.8 179.17 L569.2 179.31 L568.6 179.43 L568 179.44 L567.4 179.93 L566.8 180.02 L566.2 180.52 L565.6 180.82 L565 177.25 L564.4 178.81 L563.8 178.96 L563.2 178.9 L562.6 179.12 L562 179.47 L561.4 179.23 L560.8 179.69 L560.2 179.43 L559.6 179.77 L559 180.24 L558.4 180.41 L557.8 178.89 L557.2 177.19 L556.6 177.16 L556 177.18 L555.4 177.23 L554.8 177.17 L554.2 177.24 L553.6 179.97 L553 179.88 L552.4 177.2 L551.8 177.21 L551.2 177.22 L550.6 177.24 L550 178.78 L549.4 179.11 L548.8 179.22 L548.2 179.36 L547.6 179.3 L547 179.43 L546.4 179.7 L545.8 180.13 L545.2 180.19 L544.6 180.59 L544 180.18 L543.4 180.33 L542.8 179.17 L542.2 177.27 L541.6 180.74 L541 180.3 L540.4 179.72 L539.8 179.82 L539.2 179.52 L538.6 179.23 L538 179.48 L537.4 179.49 L536.8 179.89 L536.2 179.7 L535.6 180.48 L535 180.58 L534.4 180.43 L533.8 177.27 L533.2 179.63 L532.6 179.53 L532 179.46 L531.4 179.35 L530.8 178.89 L530.2 178.88 L529.6 178.89 L529 179.23 L528.4 179.59 L527.8 179.41 L527.2 179.68 L526.6 179.93 L526 180.23 L525.4 177.24 L524.8 177.2 L524.2 177.23 L523.6 177.25 L523 177.17 L522.4 179.56 L521.8 179.75 L521.2 177.25 L520.6 177.2 L520 177.22 L519.4 177.19 L518.8 177.29 L518.2 178.57 L517.6 178.72 L517 178.98 L516.4 179.14 L515.8 179.32 L515.2 179.53 L514.6 179.34 L514 179.64 L513.4 179.56 L512.8 180.06 L512.2 179.92 L511.6 179.06 L511 177.25 L510.4 180.45 L509.8 180.46 L509.2 179.83 L508.6 179.68 L508 179.35 L507.4 179.44 L506.8 179.2 L506.2 179.61 L505.6 179.68 L505 180.06 L504.4 179.98 L503.8 180.58 L503.2 180.39 L502.6 177.24 L502 178.58 L501.4 178.5 L500.8 178.56 L500.2 178.89 L499.6 179.08 L499 179.09 L498.4 179.06 L497.8 179.52 L497.2 179.59 L496.6 179.66 L496 179.67 L495.4 179.4 L494.8 177.53 L494.2 177.19 L493.6 177.21 L493 177.25 L492.4 177.24 L491.8 177.25 L491.2 177.18 L490.6 179.53 L490 177.18 L489.4 177.24 L488.8 177.17 L488.2 177.18 L487.6 177.3 L487 180.19 L486.4 179.8 L485.8 180.08 L485.2 179.44 L484.6 179.4 L484 179.37 L483.4 179.42 L482.8 179.55 L482.2 180 L481.6 179.9 L481 180.08 L480.4 180.76 L479.8 180.94 L479.2 178.66 L478.6 178.94 L478 179.11 L477.4 179.18 L476.8 179.37 L476.2 179.38 L475.6 179.67 L475 179.73 L474.4 179.64 L473.8 179.99 L473.2 180.31 L472.6 180.11 L472 178.93 L471.4 177.28 L470.8 180.64 L470.2 180.73 L469.6 180.02 L469 179.62 L468.4 179.8 L467.8 179.6 L467.2 179.39 L466.6 179.43 L466 180.16 L465.4 180.1 L464.8 180.6 L464.2 180.29 L463.6 181.06 L463 177.18 L462.4 177.16 L461.8 177.17 L461.2 177.18 L460.6 177.16 L460 177.23 L459.4 180 L458.8 177.23 L458.2 177.22 L457.6 177.2 L457 177.23 L456.4 177.24 L455.8 178.68 L455.2 179.01 L454.6 179.16 L454 179.06 L453.4 179.36 L452.8 179.47 L452.2 179.63 L451.6 179.97 L451 179.76 L450.4 180.2 L449.8 179.87 L449.2 179.72 L448.6 177.61 L448 177.21 L447.4 179.47 L446.8 179.28 L446.2 179.53 L445.6 179.15 L445 178.98 L444.4 178.76 L443.8 179.11 L443.2 179.14 L442.6 179.09 L442 179.37 L441.4 179.49 L440.8 180.01 L440.2 177.25 L439.6 178.6 L439 178.67 L438.4 179.11 L437.8 178.97 L437.2 179.19 L436.6 179.53 L436 179.26 L435.4 179.78 L434.8 179.72 L434.2 179.69 L433.6 180.08 L433 180.46 L432.4 178.47 L431.8 177.25 L431.2 177.24 L430.6 177.22 L430 177.16 L429.4 177.22 L428.8 177.21 L428.2 179.39 L427.6 177.19 L427 177.22 L426.4 177.21 L425.8 177.19 L425.2 177.21 L424.6 178.61 L424 178.88 L423.4 178.81 L422.8 179 L422.2 179.4 L421.6 179.38 L421 179.33 L420.4 179.67 L419.8 179.76 L419.2 180 L418.6 180.2 L418 180.38 L417.4 178.04 L416.8 177.28 L416.2 178.7 L415.6 179.06 L415 178.95 L414.4 179.5 L413.8 179.45 L413.2 179.48 L412.6 179.83 L412 179.67 L411.4 179.73 L410.8 180.27 L410.2 180.42 L409.6 179.69 L409 177.28 L408.4 179.62 L407.8 179.56 L407.2 179.15 L406.6 179.1 L406 178.93 L405.4 178.84 L404.8 178.61 L404.2 178.78 L403.6 178.75 L403 179.25 L402.4 179.17 L401.8 179.35 L401.2 179.7 L400.6 177.23 L400 177.2 L399.4 177.17 L398.8 177.25Z" fill="#cdcaf2"/>
<line x1="398.8" y1="176.8" x2="987.8" y2="176.8" stroke="#cdcaf2" stroke-width="0.7"/>
<rect x="397.4" y="185.1" width="591.8" height="26.9" fill="#141414" rx="1.8"/>
<rect x="397.8" y="186" width="591" height="25" fill="#3c3c83" rx="1.6"/>
<text x="400.4" y="193.6" font-size="6.5" fill="#dcd9f8" stroke="#dcd9f8" stroke-width=".22">My Guitar</text>
<path d="M398.8 203.4 L399.4 203.4 L400 203.4 L400.6 203.4 L401.2 203.4 L401.8 203.4 L402.4 203.4 L403 203.4 L403.6 203.4 L404.2 203.4 L404.8 203.4 L405.4 203.4 L406 203.4 L406.6 203.4 L407.2 203.4 L407.8 202.1 L408.4 199.97 L409 198.92 L409.6 199.13 L410.2 199.5 L410.8 199.84 L411.4 200.69 L412 200.89 L412.6 200.84 L413.2 201.38 L413.8 201.56 L414.4 201.67 L415 202.33 L415.6 202.37 L416.2 202.79 L416.8 202.99 L417.4 203.07 L418 203.28 L418.6 202.41 L419.2 200.71 L419.8 200.59 L420.4 200.81 L421 201.33 L421.6 201.38 L422.2 201.47 L422.8 202 L423.4 202.29 L424 202.34 L424.6 202.68 L425.2 202.77 L425.8 203.05 L426.4 203.2 L427 203.39 L427.6 203.4 L428.2 203.4 L428.8 203.4 L429.4 203.04 L430 201.57 L430.6 200.37 L431.2 199.39 L431.8 200.04 L432.4 199.77 L433 199.96 L433.6 200.46 L434.2 200.96 L434.8 200.96 L435.4 200.94 L436 201.57 L436.6 201.31 L437.2 201.72 L437.8 201.99 L438.4 201.88 L439 202.36 L439.6 202.47 L440.2 202.67 L440.8 202.68 L441.4 202.96 L442 203.07 L442.6 203.23 L443.2 203.28 L443.8 203.35 L444.4 203.4 L445 203.4 L445.6 203.4 L446.2 203.4 L446.8 203.12 L447.4 201.27 L448 201.37 L448.6 201.72 L449.2 202.06 L449.8 202.42 L450.4 202.49 L451 202.88 L451.6 203.03 L452.2 203.3 L452.8 202.67 L453.4 201.23 L454 200.29 L454.6 199.89 L455.2 200.14 L455.8 200.74 L456.4 200.7 L457 201.14 L457.6 201.04 L458.2 201.34 L458.8 201.66 L459.4 202.04 L460 201.97 L460.6 202.23 L461.2 202.48 L461.8 202.47 L462.4 202.72 L463 203.01 L463.6 203.04 L464.2 203.27 L464.8 203.3 L465.4 203.44 L466 203.4 L466.6 203.4 L467.2 203.4 L467.8 203.4 L468.4 203.4 L469 203.48 L469.6 201.7 L470.2 201.71 L470.8 202.2 L471.4 202.42 L472 202.65 L472.6 203.04 L473.2 203.18 L473.8 201.47 L474.4 199.91 L475 199.9 L475.6 200.12 L476.2 200.68 L476.8 200.84 L477.4 201.24 L478 201.47 L478.6 201.82 L479.2 202.27 L479.8 202.44 L480.4 202.7 L481 203.08 L481.6 203.28 L482.2 203.39 L482.8 202.58 L483.4 200.94 L484 200.21 L484.6 200.8 L485.2 201.26 L485.8 201.05 L486.4 201.74 L487 201.82 L487.6 201.97 L488.2 202.22 L488.8 202.46 L489.4 202.68 L490 202.74 L490.6 203.05 L491.2 203.22 L491.8 203.28 L492.4 203.41 L493 203.4 L493.6 202.68 L494.2 200.99 L494.8 200.27 L495.4 199.78 L496 199.98 L496.6 200.05 L497.2 200.2 L497.8 200.34 L498.4 201.08 L499 201.07 L499.6 201.13 L500.2 201.44 L500.8 201.94 L501.4 202.06 L502 201.97 L502.6 202.21 L503.2 202.55 L503.8 202.57 L504.4 202.63 L505 201.42 L505.6 201.74 L506.2 201.81 L506.8 202.16 L507.4 202.22 L508 202.6 L508.6 202.71 L509.2 202.89 L509.8 202.93 L510.4 203.14 L511 203.3 L511.6 203.38 L512.2 203.4 L512.8 203.4 L513.4 203.19 L514 201.38 L514.6 200.12 L515.2 198.33 L515.8 198.79 L516.4 199.19 L517 199.52 L517.6 200.11 L518.2 200.42 L518.8 200.48 L519.4 200.26 L520 200.51 L520.6 201.32 L521.2 201.23 L521.8 201.56 L522.4 201.73 L523 201.8 L523.6 202.1 L524.2 202.4 L524.8 202.6 L525.4 202.74 L526 202.87 L526.6 203.07 L527.2 202.93 L527.8 202.54 L528.4 201.9 L529 201.73 L529.6 201.68 L530.2 201.36 L530.8 201.53 L531.4 201.14 L532 201.31 L532.6 201.57 L533.2 201.84 L533.8 202.05 L534.4 202.42 L535 202.69 L535.6 203.24 L536.2 203.4 L536.8 203.2 L537.4 202.5 L538 201.73 L538.6 201.53 L539.2 201.1 L539.8 200.77 L540.4 201.03 L541 200.64 L541.6 200.58 L542.2 201.05 L542.8 201.22 L543.4 202.09 L544 202.61 L544.6 203.19 L545.2 203.4 L545.8 203.42 L546.4 202.63 L547 202.16 L547.6 201.77 L548.2 201.28 L548.8 201.18 L549.4 201.19 L550 201.69 L550.6 202.15 L551.2 202.57 L551.8 203.24 L552.4 202.49 L553 202.01 L553.6 201.23 L554.2 201.42 L554.8 201.22 L555.4 201.12 L556 201.4 L556.6 201.99 L557.2 202.67 L557.8 201.27 L558.4 199.4 L559 199.43 L559.6 199.92 L560.2 200.27 L560.8 199.6 L561.4 200.19 L562 203.4 L562.6 203.4 L563.2 203.4 L563.8 203.4 L564.4 203.4 L565 203.4 L565.6 203.4 L566.2 203.4 L566.8 203.4 L567.4 203.4 L568 203.4 L568.6 203.4 L569.2 203.4 L569.8 203.4 L570.4 203.4 L571 203.4 L571.6 203.4 L572.2 203.4 L572.8 203.4 L573.4 203.4 L574 203.4 L574.6 203.4 L575.2 203.4 L575.8 203.4 L576.4 203.4 L577 203.4 L577.6 203.06 L578.2 201.43 L578.8 201.29 L579.4 201.51 L580 202.02 L580.6 202.32 L581.2 202.36 L581.8 202.68 L582.4 202.83 L583 203.02 L583.6 203.22 L584.2 203.36 L584.8 203.4 L585.4 203.4 L586 203.4 L586.6 203.4 L587.2 202.88 L587.8 202.51 L588.4 202.3 L589 202.09 L589.6 201.98 L590.2 201.75 L590.8 201.6 L591.4 201.58 L592 201.98 L592.6 201.9 L593.2 202.29 L593.8 202.78 L594.4 203.13 L595 203.4 L595.6 203.4 L596.2 203.4 L596.8 203.4 L597.4 203.4 L598 203.44 L598.6 202.63 L599.2 202.22 L599.8 201.93 L600.4 201.46 L601 201.34 L601.6 201.07 L602.2 200.87 L602.8 200.98 L603.4 201.61 L604 201.5 L604.6 202.03 L605.2 202.42 L605.8 203.09 L606.4 202.96 L607 202.46 L607.6 201.94 L608.2 201.42 L608.8 201.26 L609.4 200.79 L610 200.99 L610.6 200.76 L611.2 200.89 L611.8 201.36 L612.4 201.3 L613 201.72 L613.6 201.88 L614.2 202.42 L614.8 203.1 L615.4 203.4 L616 203.46 L616.6 202.7 L617.2 202.2 L617.8 201.85 L618.4 201.63 L619 201.48 L619.6 201.21 L620.2 200.96 L620.8 201.1 L621.4 201.37 L622 201.36 L622.6 201.67 L623.2 202.13 L623.8 202.37 L624.4 202.73 L625 203.4 L625.6 203.4 L626.2 203.02 L626.8 202.35 L627.4 201.96 L628 201.52 L628.6 200.99 L629.2 200.89 L629.8 200.58 L630.4 200.65 L631 200.74 L631.6 201.43 L632.2 201.58 L632.8 202.07 L633.4 202.66 L634 203.46 L634.6 202.01 L635.2 201.13 L635.8 200.81 L636.4 201.32 L637 201.26 L637.6 201.02 L638.2 200.99 L638.8 200.92 L639.4 201.36 L640 201.27 L640.6 200.98 L641.2 200.98 L641.8 200.81 L642.4 201.71 L643 203.4 L643.6 203.4 L644.2 203.4 L644.8 203.4 L645.4 203.4 L646 203.4 L646.6 203.4 L647.2 203.4 L647.8 203.4 L648.4 203.4 L649 203.4 L649.6 203.4 L650.2 203.4 L650.8 203.4 L651.4 203.4 L652 203.4 L652.6 203.4 L653.2 203.4 L653.8 203.4 L654.4 203.4 L655 203.4 L655.6 203.4 L656.2 203.4 L656.8 203.4 L657.4 203.4 L658 203.4 L658.6 203.4 L659.2 203.4 L659.8 203.4 L660.4 203.4 L661 203.4 L661.6 203.4 L662.2 202.44 L662.8 201.49 L663.4 200.57 L664 200.18 L664.6 200 L665.2 200.1 L665.8 200 L666.4 200.2 L667 200.29 L667.6 200.17 L668.2 200.2 L668.8 200.33 L669.4 201.02 L670 200.85 L670.6 201.29 L671.2 201.31 L671.8 201.42 L672.4 201.33 L673 201.55 L673.6 201.59 L674.2 201.8 L674.8 202.03 L675.4 202.13 L676 202.42 L676.6 202.34 L677.2 202.62 L677.8 202.68 L678.4 202.76 L679 202.99 L679.6 203.07 L680.2 203.17 L680.8 203.24 L681.4 203.27 L682 203.37 L682.6 203.46 L683.2 203.4 L683.8 203.4 L684.4 203.4 L685 203.43 L685.6 201.96 L686.2 200.43 L686.8 199.12 L687.4 199.83 L688 199.86 L688.6 199.95 L689.2 200.22 L689.8 200.89 L690.4 201.15 L691 201.06 L691.6 201.39 L692.2 201.34 L692.8 201.7 L693.4 202.08 L694 202.21 L694.6 202.4 L695.2 202.53 L695.8 202.61 L696.4 202.84 L697 203.05 L697.6 203.15 L698.2 203.28 L698.8 203.44 L699.4 202.91 L700 202.25 L700.6 201.74 L701.2 201.29 L701.8 201.08 L702.4 200.57 L703 200.92 L703.6 200.52 L704.2 200.86 L704.8 201.27 L705.4 201.75 L706 202.04 L706.6 202.87 L707.2 203 L707.8 202.47 L708.4 201.74 L709 201.06 L709.6 201.01 L710.2 200.87 L710.8 200.42 L711.4 200.78 L712 200.49 L712.6 201.15 L713.2 201.27 L713.8 201.7 L714.4 202.65 L715 203.43 L715.6 202.73 L716.2 201.94 L716.8 201.5 L717.4 201.03 L718 200.87 L718.6 201.04 L719.2 200.96 L719.8 200.91 L720.4 201.06 L721 201.35 L721.6 201.64 L722.2 202.41 L722.8 203.08 L723.4 201.84 L724 200.12 L724.6 200.43 L725.2 200.02 L725.8 200.01 L726.4 200.11 L727 200.11 L727.6 200.47 L728.2 200.08 L728.8 200.35 L729.4 200.69 L730 203.4 L730.6 203.4 L731.2 203.4 L731.8 203.4 L732.4 203.4 L733 203.4 L733.6 203.4 L734.2 203.4 L734.8 203.4 L735.4 203.4 L736 203.4 L736.6 203.4 L737.2 202.61 L737.8 201.54 L738.4 200.68 L739 200.73 L739.6 200.73 L740.2 200.77 L740.8 201.48 L741.4 201.21 L742 201.48 L742.6 201.74 L743.2 201.91 L743.8 201.96 L744.4 201.87 L745 202.09 L745.6 202.42 L746.2 202.49 L746.8 202.45 L747.4 202.59 L748 202.69 L748.6 202.78 L749.2 203 L749.8 203.03 L750.4 203.18 L751 203.28 L751.6 203.29 L752.2 203.15 L752.8 202.66 L753.4 202.35 L754 201.98 L754.6 201.69 L755.2 201.46 L755.8 201.39 L756.4 201.04 L757 201.2 L757.6 201.25 L758.2 201.66 L758.8 201.59 L759.4 201.78 L760 202.21 L760.6 202.32 L761.2 202.7 L761.8 203.15 L762.4 202.82 L763 202.01 L763.6 201.66 L764.2 201.54 L764.8 201.83 L765.4 201.95 L766 202.27 L766.6 202.39 L767.2 202.5 L767.8 202.55 L768.4 202.61 L769 202.84 L769.6 202.93 L770.2 203.05 L770.8 203.15 L771.4 203.21 L772 203.34 L772.6 203.43 L773.2 203.4 L773.8 203.4 L774.4 203.4 L775 203.4 L775.6 203.4 L776.2 203.4 L776.8 203.4 L777.4 203.4 L778 203.4 L778.6 203.4 L779.2 203.4 L779.8 203.4 L780.4 202.89 L781 202.26 L781.6 201.73 L782.2 201.73 L782.8 201.93 L783.4 201.92 L784 201.98 L784.6 202.28 L785.2 202.24 L785.8 202.62 L786.4 202.58 L787 202.82 L787.6 202.87 L788.2 202.89 L788.8 203.02 L789.4 203.14 L790 203.25 L790.6 203.25 L791.2 203.37 L791.8 203.39 L792.4 203.05 L793 202.69 L793.6 202.44 L794.2 202.22 L794.8 201.87 L795.4 201.92 L796 201.89 L796.6 201.4 L797.2 201.52 L797.8 201.52 L798.4 201.69 L799 201.29 L799.6 201.74 L800.2 201.7 L800.8 201.68 L801.4 202.09 L802 202.16 L802.6 202.61 L803.2 202.95 L803.8 203.31 L804.4 203.03 L805 202.72 L805.6 202.25 L806.2 201.82 L806.8 201.86 L807.4 201.76 L808 201.83 L808.6 201.52 L809.2 201.88 L809.8 202.11 L810.4 202.35 L811 202.52 L811.6 199.72 L812.2 199.88 L812.8 203.4 L813.4 203.4 L814 203.4 L814.6 203.4 L815.2 203.4 L815.8 203.4 L816.4 203.4 L817 203.4 L817.6 203.4 L818.2 203.4 L818.8 203.4 L819.4 203.4 L820 203.4 L820.6 203.4 L821.2 203.4 L821.8 203.4 L822.4 203.4 L823 203.44 L823.6 202.59 L824.2 201.75 L824.8 201.07 L825.4 200.48 L826 199.85 L826.6 199.75 L827.2 199.21 L827.8 199.31 L828.4 199.22 L829 199.32 L829.6 199.87 L830.2 199.97 L830.8 199.77 L831.4 200.56 L832 200.38 L832.6 200.08 L833.2 200.66 L833.8 200.43 L834.4 200.57 L835 200.84 L835.6 201.13 L836.2 200.83 L836.8 200.91 L837.4 201.46 L838 201.56 L838.6 201.63 L839.2 201.37 L839.8 201.92 L840.4 201.59 L841 201.73 L841.6 202.1 L842.2 202.06 L842.8 202.35 L843.4 202.18 L844 202.21 L844.6 202.38 L845.2 202.49 L845.8 202.74 L846.4 202.75 L847 202.89 L847.6 202.9 L848.2 203 L848.8 203.07 L849.4 203.09 L850 203.16 L850.6 203.2 L851.2 203.26 L851.8 203.37 L852.4 203.39 L853 203.44 L853.6 202.15 L854.2 200.81 L854.8 200.19 L855.4 200.99 L856 200.66 L856.6 201.07 L857.2 201.49 L857.8 201.36 L858.4 201.86 L859 201.81 L859.6 202.04 L860.2 202.26 L860.8 202.47 L861.4 202.66 L862 202.8 L862.6 202.96 L863.2 203.09 L863.8 203.21 L864.4 203.37 L865 203.44 L865.6 202.67 L866.2 201.83 L866.8 201.52 L867.4 201.33 L868 200.86 L868.6 200.31 L869.2 200.48 L869.8 200.29 L870.4 200.58 L871 200.25 L871.6 200.23 L872.2 201.03 L872.8 201.31 L873.4 201.54 L874 202.14 L874.6 202.85 L875.2 202.84 L875.8 200.74 L876.4 200.09 L877 200.07 L877.6 200.21 L878.2 200.16 L878.8 199.49 L879.4 199.46 L880 199.47 L880.6 199.59 L881.2 199.77 L881.8 200.24 L882.4 199.51 L883 199.81 L883.6 200.14 L884.2 199.47 L884.8 199.5 L885.4 200.12 L886 200.8 L886.6 202.4 L887.2 203.4 L887.8 203.4 L888.4 203.4 L889 203.4 L889.6 203.4 L890.2 203.4 L890.8 203.4 L891.4 203.4 L892 203.4 L892.6 203.4 L893.2 203.4 L893.8 203.4 L894.4 203.4 L895 203.4 L895.6 203.4 L896.2 203.4 L896.8 203.4 L897.4 203.4 L898 203.4 L898.6 203.4 L899.2 203.4 L899.8 203.4 L900.4 203.4 L901 203.4 L901.6 203.4 L902.2 203.4 L902.8 203.4 L903.4 203.4 L904 203.4 L904.6 203.4 L905.2 203.25 L905.8 202.66 L906.4 202.28 L907 201.95 L907.6 201.5 L908.2 201.39 L908.8 201.17 L909.4 201.07 L910 201.38 L910.6 201.08 L911.2 201.43 L911.8 201.4 L912.4 201.83 L913 201.8 L913.6 202.21 L914.2 202.73 L914.8 203.13 L915.4 202.99 L916 202.35 L916.6 201.94 L917.2 201.42 L917.8 201.49 L918.4 200.78 L919 201.09 L919.6 200.59 L920.2 200.95 L920.8 200.57 L921.4 200.96 L922 201.14 L922.6 201.33 L923.2 201.67 L923.8 202.09 L924.4 202.73 L925 203.41 L925.6 202.83 L926.2 202.16 L926.8 201.77 L927.4 201.36 L928 201 L928.6 200.8 L929.2 200.73 L929.8 200.64 L930.4 201.11 L931 200.92 L931.6 201.51 L932.2 201.99 L932.8 202.12 L933.4 202.77 L934 203.43 L934.6 201.51 L935.2 200.27 L935.8 200.39 L936.4 200.35 L937 200.26 L937.6 200.67 L938.2 200.39 L938.8 200.5 L939.4 200.41 L940 200.79 L940.6 200.35 L941.2 200.75 L941.8 200.78 L942.4 201.61 L943 203.4 L943.6 203.4 L944.2 203.4 L944.8 203.4 L945.4 203.4 L946 203.4 L946.6 203.4 L947.2 203.4 L947.8 203.4 L948.4 203.4 L949 203.4 L949.6 203.4 L950.2 203.19 L950.8 202.16 L951.4 201.65 L952 201.74 L952.6 201.71 L953.2 201.88 L953.8 202.11 L954.4 202.28 L955 202.32 L955.6 202.43 L956.2 202.45 L956.8 202.64 L957.4 202.78 L958 202.82 L958.6 202.91 L959.2 203.11 L959.8 203.2 L960.4 203.27 L961 203.31 L961.6 203.41 L962.2 203.25 L962.8 202.88 L963.4 202.35 L964 202.22 L964.6 201.76 L965.2 201.52 L965.8 201.44 L966.4 201.56 L967 201.44 L967.6 201.48 L968.2 201.48 L968.8 201.27 L969.4 201.48 L970 201.35 L970.6 201.7 L971.2 201.85 L971.8 202.24 L972.4 202.43 L973 202.59 L973.6 203.06 L974.2 203.26 L974.8 202.82 L975.4 202.34 L976 202.32 L976.6 201.73 L977.2 201.67 L977.8 201.58 L978.4 201.12 L979 201.14 L979.6 201.2 L980.2 201.36 L980.8 201 L981.4 201.36 L982 201.37 L982.6 201.15 L983.2 201.59 L983.8 201.81 L984.4 201.8 L985 202.04 L985.6 202.45 L986.2 202.73 L986.8 203.18 L987.4 203.4 L987.4 204.17 L986.8 204.4 L986.2 204.73 L985.6 204.94 L985 205.35 L984.4 205.46 L983.8 205.46 L983.2 205.72 L982.6 206.06 L982 205.86 L981.4 205.99 L980.8 206.49 L980.2 205.76 L979.6 206.08 L979 206.07 L978.4 205.96 L977.8 205.83 L977.2 205.79 L976.6 205.79 L976 205.13 L975.4 205.24 L974.8 204.76 L974.2 204.29 L973.6 204.47 L973 204.96 L972.4 205.02 L971.8 205.24 L971.2 205.48 L970.6 205.7 L970 205.81 L969.4 205.84 L968.8 205.98 L968.2 206.11 L967.6 206.04 L967 206.15 L966.4 205.84 L965.8 205.76 L965.2 205.78 L964.6 205.55 L964 205.36 L963.4 204.97 L962.8 204.63 L962.2 204.24 L961.6 204.13 L961 204.28 L960.4 204.29 L959.8 204.32 L959.2 204.36 L958.6 204.61 L958 204.71 L957.4 204.73 L956.8 204.76 L956.2 204.96 L955.6 204.97 L955 205.12 L954.4 205.03 L953.8 205.45 L953.2 205.64 L952.6 205.88 L952 205.66 L951.4 205.94 L950.8 205.33 L950.2 204.39 L949.6 204.12 L949 204.16 L948.4 204.19 L947.8 204.2 L947.2 204.16 L946.6 204.12 L946 204.19 L945.4 204.13 L944.8 204.13 L944.2 204.18 L943.6 204.13 L943 204.17 L942.4 205.69 L941.8 206.67 L941.2 206.49 L940.6 207.16 L940 206.56 L939.4 206.85 L938.8 207.04 L938.2 207.1 L937.6 206.6 L937 206.97 L936.4 206.84 L935.8 206.91 L935.2 207.15 L934.6 205.68 L934 204.14 L933.4 204.75 L932.8 205.3 L932.2 205.31 L931.6 205.86 L931 206.61 L930.4 206.23 L929.8 206.5 L929.2 206.65 L928.6 206.44 L928 206.57 L927.4 206.1 L926.8 205.74 L926.2 205.15 L925.6 204.69 L925 204.15 L924.4 204.85 L923.8 205.35 L923.2 205.72 L922.6 205.99 L922 205.98 L921.4 206.34 L920.8 206.64 L920.2 206.62 L919.6 206.52 L919 206.12 L918.4 206.57 L917.8 205.84 L917.2 206.08 L916.6 205.66 L916 205.05 L915.4 204.46 L914.8 204.35 L914.2 204.76 L913.6 205.17 L913 205.6 L912.4 205.69 L911.8 205.75 L911.2 205.8 L910.6 206.09 L910 205.86 L909.4 206.29 L908.8 206.39 L908.2 205.77 L907.6 206.01 L907 205.51 L906.4 205.07 L905.8 204.89 L905.2 204.24 L904.6 204.16 L904 204.15 L903.4 204.13 L902.8 204.15 L902.2 204.13 L901.6 204.15 L901 204.13 L900.4 204.2 L899.8 204.2 L899.2 204.19 L898.6 204.2 L898 204.13 L897.4 204.19 L896.8 204.19 L896.2 204.13 L895.6 204.13 L895 204.12 L894.4 204.19 L893.8 204.16 L893.2 204.13 L892.6 204.14 L892 204.16 L891.4 204.17 L890.8 204.19 L890.2 204.18 L889.6 204.18 L889 204.18 L888.4 204.18 L887.8 204.15 L887.2 204.17 L886.6 205 L886 206.23 L885.4 207.04 L884.8 207.29 L884.2 207.39 L883.6 206.91 L883 207.63 L882.4 207.72 L881.8 207.04 L881.2 207.6 L880.6 207.58 L880 208.06 L879.4 207.72 L878.8 207.42 L878.2 207.2 L877.6 206.94 L877 207.1 L876.4 207.32 L875.8 206.7 L875.2 204.7 L874.6 204.65 L874 205.2 L873.4 205.75 L872.8 206.16 L872.2 206.17 L871.6 207.26 L871 207.24 L870.4 206.55 L869.8 207.22 L869.2 207.07 L868.6 207.24 L868 206.57 L867.4 206 L866.8 206.01 L866.2 205.54 L865.6 204.89 L865 204.11 L864.4 204.15 L863.8 204.38 L863.2 204.46 L862.6 204.52 L862 204.63 L861.4 204.71 L860.8 205.12 L860.2 205.27 L859.6 205.26 L859 205.69 L858.4 205.7 L857.8 206.16 L857.2 205.84 L856.6 206.46 L856 206.38 L855.4 206.1 L854.8 206.84 L854.2 206.31 L853.6 205.36 L853 204.13 L852.4 204.2 L851.8 204.23 L851.2 204.31 L850.6 204.32 L850 204.32 L849.4 204.44 L848.8 204.5 L848.2 204.57 L847.6 204.6 L847 204.68 L846.4 204.73 L845.8 204.7 L845.2 205.06 L844.6 204.95 L844 205.22 L843.4 205.27 L842.8 205.18 L842.2 205.25 L841.6 205.22 L841 205.67 L840.4 205.99 L839.8 205.4 L839.2 205.85 L838.6 205.62 L838 205.85 L837.4 206.04 L836.8 206.63 L836.2 206.76 L835.6 206.12 L835 206.29 L834.4 206.58 L833.8 206.76 L833.2 206.37 L832.6 207.05 L832 206.76 L831.4 206.72 L830.8 207.25 L830.2 207.24 L829.6 207.67 L829 208.18 L828.4 207.73 L827.8 207.86 L827.2 207.83 L826.6 207.37 L826 207.75 L825.4 206.87 L824.8 206.22 L824.2 205.5 L823.6 204.79 L823 204.11 L822.4 204.15 L821.8 204.15 L821.2 204.17 L820.6 204.18 L820 204.12 L819.4 204.13 L818.8 204.13 L818.2 204.19 L817.6 204.12 L817 204.16 L816.4 204.15 L815.8 204.19 L815.2 204.18 L814.6 204.14 L814 204.16 L813.4 204.18 L812.8 204.17 L812.2 207.56 L811.6 207.77 L811 205.05 L810.4 205.13 L809.8 205.45 L809.2 205.47 L808.6 205.97 L808 205.6 L807.4 205.73 L806.8 205.69 L806.2 205.43 L805.6 205.1 L805 204.69 L804.4 204.52 L803.8 204.19 L803.2 204.57 L802.6 204.81 L802 205.2 L801.4 205.34 L800.8 205.72 L800.2 205.65 L799.6 205.69 L799 206.04 L798.4 205.7 L797.8 205.72 L797.2 205.76 L796.6 205.94 L796 205.43 L795.4 205.6 L794.8 205.68 L794.2 205.15 L793.6 205.04 L793 204.76 L792.4 204.43 L791.8 204.14 L791.2 204.16 L790.6 204.35 L790 204.35 L789.4 204.44 L788.8 204.48 L788.2 204.7 L787.6 204.56 L787 204.74 L786.4 204.92 L785.8 204.85 L785.2 205.34 L784.6 205.23 L784 205.58 L783.4 205.59 L782.8 205.38 L782.2 205.78 L781.6 205.49 L781 205.14 L780.4 204.6 L779.8 204.18 L779.2 204.15 L778.6 204.17 L778 204.15 L777.4 204.13 L776.8 204.15 L776.2 204.17 L775.6 204.13 L775 204.15 L774.4 204.18 L773.8 204.17 L773.2 204.16 L772.6 204.12 L772 204.19 L771.4 204.36 L770.8 204.35 L770.2 204.41 L769.6 204.52 L769 204.6 L768.4 204.94 L767.8 204.96 L767.2 204.89 L766.6 204.96 L766 205.06 L765.4 205.29 L764.8 205.72 L764.2 205.77 L763.6 205.83 L763 205.39 L762.4 204.7 L761.8 204.41 L761.2 204.74 L760.6 204.99 L760 205.26 L759.4 205.47 L758.8 205.91 L758.2 205.92 L757.6 205.91 L757 206.21 L756.4 206.45 L755.8 206.08 L755.2 205.69 L754.6 205.55 L754 205.37 L753.4 205.15 L752.8 204.77 L752.2 204.33 L751.6 204.29 L751 204.32 L750.4 204.34 L749.8 204.44 L749.2 204.57 L748.6 204.72 L748 204.83 L747.4 204.88 L746.8 205.02 L746.2 204.91 L745.6 204.91 L745 205.22 L744.4 205.72 L743.8 205.54 L743.2 205.6 L742.6 205.49 L742 205.89 L741.4 206.28 L740.8 205.75 L740.2 206.3 L739.6 206.81 L739 206.46 L738.4 206.65 L737.8 206 L737.2 204.78 L736.6 204.15 L736 204.14 L735.4 204.17 L734.8 204.19 L734.2 204.17 L733.6 204.15 L733 204.15 L732.4 204.19 L731.8 204.18 L731.2 204.12 L730.6 204.13 L730 204.17 L729.4 206.45 L728.8 207.09 L728.2 207.13 L727.6 206.99 L727 207.04 L726.4 207.03 L725.8 207.56 L725.2 207.03 L724.6 206.66 L724 207.33 L723.4 205.5 L722.8 204.42 L722.2 205.04 L721.6 205.65 L721 205.93 L720.4 206.27 L719.8 206.29 L719.2 206.11 L718.6 206.42 L718 206.51 L717.4 206.3 L716.8 205.8 L716.2 205.4 L715.6 204.72 L715 204.15 L714.4 204.76 L713.8 205.51 L713.2 206.13 L712.6 206.33 L712 206.59 L711.4 206.32 L710.8 206.77 L710.2 206.63 L709.6 206.46 L709 206.5 L708.4 205.75 L707.8 205.02 L707.2 204.53 L706.6 204.65 L706 205.21 L705.4 205.67 L704.8 206.02 L704.2 206.18 L703.6 206.7 L703 206.13 L702.4 206.63 L701.8 206.32 L701.2 206.3 L700.6 205.46 L700 205.14 L699.4 204.53 L698.8 204.11 L698.2 204.24 L697.6 204.37 L697 204.48 L696.4 204.63 L695.8 204.81 L695.2 205.02 L694.6 204.95 L694 205.32 L693.4 205.44 L692.8 205.88 L692.2 206.19 L691.6 205.95 L691 206.3 L690.4 206.24 L689.8 206.15 L689.2 207.26 L688.6 207.36 L688 207.73 L687.4 207.12 L686.8 208.29 L686.2 206.65 L685.6 205.5 L685 204.16 L684.4 204.14 L683.8 204.18 L683.2 204.19 L682.6 204.14 L682 204.19 L681.4 204.25 L680.8 204.26 L680.2 204.41 L679.6 204.53 L679 204.6 L678.4 204.74 L677.8 204.76 L677.2 204.75 L676.6 205.17 L676 205.07 L675.4 205.22 L674.8 205.42 L674.2 205.42 L673.6 205.6 L673 205.78 L672.4 206.06 L671.8 205.73 L671.2 205.79 L670.6 206.11 L670 206.73 L669.4 206.12 L668.8 207.07 L668.2 206.74 L667.6 207.2 L667 207.3 L666.4 207.27 L665.8 207.21 L665.2 206.89 L664.6 206.93 L664 206.7 L663.4 206.55 L662.8 205.83 L662.2 205.11 L661.6 204.16 L661 204.18 L660.4 204.16 L659.8 204.15 L659.2 204.16 L658.6 204.18 L658 204.19 L657.4 204.2 L656.8 204.13 L656.2 204.17 L655.6 204.16 L655 204.17 L654.4 204.14 L653.8 204.15 L653.2 204.17 L652.6 204.12 L652 204.15 L651.4 204.12 L650.8 204.13 L650.2 204.13 L649.6 204.17 L649 204.16 L648.4 204.17 L647.8 204.19 L647.2 204.15 L646.6 204.17 L646 204.13 L645.4 204.18 L644.8 204.15 L644.2 204.18 L643.6 204.16 L643 204.15 L642.4 205.82 L641.8 206.34 L641.2 206.42 L640.6 206.07 L640 206.31 L639.4 206.1 L638.8 206.38 L638.2 206.58 L637.6 206.21 L637 206.1 L636.4 206.17 L635.8 206.39 L635.2 206.02 L634.6 205.3 L634 204.09 L633.4 204.77 L632.8 205.28 L632.2 205.94 L631.6 205.97 L631 206.43 L630.4 206.49 L629.8 206.42 L629.2 206.54 L628.6 206.19 L628 205.78 L627.4 205.44 L626.8 205.22 L626.2 204.45 L625.6 204.14 L625 204.15 L624.4 204.74 L623.8 205.06 L623.2 205.27 L622.6 205.58 L622 206.11 L621.4 205.86 L620.8 205.99 L620.2 206.17 L619.6 206.21 L619 205.72 L618.4 205.94 L617.8 205.62 L617.2 205.09 L616.6 204.78 L616 204.12 L615.4 204.16 L614.8 204.49 L614.2 205 L613.6 205.48 L613 205.73 L612.4 206.12 L611.8 205.96 L611.2 206.46 L610.6 206.37 L610 206.5 L609.4 206.29 L608.8 206.16 L608.2 206.12 L607.6 205.5 L607 205.11 L606.4 204.61 L605.8 204.47 L605.2 205.05 L604.6 205.5 L604 205.75 L603.4 205.84 L602.8 206.16 L602.2 206.39 L601.6 206.37 L601 205.87 L600.4 205.79 L599.8 205.32 L599.2 205.12 L598.6 204.86 L598 204.11 L597.4 204.15 L596.8 204.14 L596.2 204.19 L595.6 204.15 L595 204.2 L594.4 204.46 L593.8 204.71 L593.2 205.03 L592.6 205.46 L592 205.39 L591.4 205.67 L590.8 205.71 L590.2 205.48 L589.6 205.47 L589 205.34 L588.4 205.03 L587.8 205.06 L587.2 204.7 L586.6 204.19 L586 204.19 L585.4 204.14 L584.8 204.19 L584.2 204.24 L583.6 204.36 L583 204.5 L582.4 204.77 L581.8 204.88 L581.2 204.96 L580.6 205.16 L580 205.31 L579.4 206.09 L578.8 206.23 L578.2 206.06 L577.6 204.47 L577 204.18 L576.4 204.14 L575.8 204.19 L575.2 204.16 L574.6 204.14 L574 204.12 L573.4 204.19 L572.8 204.12 L572.2 204.16 L571.6 204.14 L571 204.2 L570.4 204.19 L569.8 204.17 L569.2 204.18 L568.6 204.16 L568 204.13 L567.4 204.17 L566.8 204.15 L566.2 204.19 L565.6 204.19 L565 204.13 L564.4 204.18 L563.8 204.18 L563.2 204.14 L562.6 204.16 L562 204.19 L561.4 207.03 L560.8 207.58 L560.2 207.24 L559.6 207.23 L559 207.77 L558.4 207.62 L557.8 206.16 L557.2 204.77 L556.6 205.25 L556 205.82 L555.4 206.33 L554.8 205.91 L554.2 206.12 L553.6 206.35 L553 205.52 L552.4 204.97 L551.8 204.31 L551.2 204.96 L550.6 205.41 L550 205.74 L549.4 206.03 L548.8 205.97 L548.2 206.05 L547.6 205.43 L547 205.43 L546.4 204.82 L545.8 204.16 L545.2 204.16 L544.6 204.31 L544 204.91 L543.4 205.19 L542.8 206.19 L542.2 206.1 L541.6 206.68 L541 206.41 L540.4 206.49 L539.8 206.35 L539.2 206.09 L538.6 206.05 L538 205.83 L537.4 204.84 L536.8 204.37 L536.2 204.12 L535.6 204.26 L535 204.76 L534.4 205.04 L533.8 205.26 L533.2 205.54 L532.6 205.79 L532 205.84 L531.4 206.41 L530.8 205.82 L530.2 205.97 L529.6 205.56 L529 205.73 L528.4 205.4 L527.8 204.81 L527.2 204.65 L526.6 204.39 L526 204.57 L525.4 204.84 L524.8 204.87 L524.2 205.14 L523.6 205.49 L523 205.46 L522.4 205.59 L521.8 205.87 L521.2 206.37 L520.6 206.01 L520 206.85 L519.4 206.84 L518.8 206.52 L518.2 206.7 L517.6 206.94 L517 207.83 L516.4 208.35 L515.8 208.3 L515.2 208.19 L514.6 206.83 L514 206.21 L513.4 204.32 L512.8 204.18 L512.2 204.15 L511.6 204.18 L511 204.23 L510.4 204.34 L509.8 204.52 L509.2 204.64 L508.6 204.89 L508 204.95 L507.4 205.21 L506.8 205.23 L506.2 205.71 L505.6 205.48 L505 205.76 L504.4 204.93 L503.8 204.96 L503.2 204.9 L502.6 205.13 L502 205.48 L501.4 205.33 L500.8 205.35 L500.2 205.81 L499.6 206.22 L499 206.37 L498.4 206.24 L497.8 206.97 L497.2 207 L496.6 206.82 L496 206.96 L495.4 207.27 L494.8 207.08 L494.2 206.22 L493.6 204.83 L493 204.17 L492.4 204.19 L491.8 204.31 L491.2 204.28 L490.6 204.44 L490 204.7 L489.4 204.9 L488.8 204.89 L488.2 205.13 L487.6 205.47 L487 205.47 L486.4 205.78 L485.8 206.18 L485.2 206.01 L484.6 206.74 L484 206.94 L483.4 206.3 L482.8 204.86 L482.2 204.16 L481.6 204.27 L481 204.51 L480.4 204.77 L479.8 204.97 L479.2 205.05 L478.6 205.7 L478 206.03 L477.4 205.87 L476.8 206.36 L476.2 206.5 L475.6 207.08 L475 207.67 L474.4 207.65 L473.8 205.93 L473.2 204.35 L472.6 204.53 L472 204.74 L471.4 205.02 L470.8 205.2 L470.2 205.51 L469.6 205.8 L469 204.09 L468.4 204.18 L467.8 204.19 L467.2 204.15 L466.6 204.12 L466 204.19 L465.4 204.11 L464.8 204.3 L464.2 204.28 L463.6 204.52 L463 204.46 L462.4 204.67 L461.8 204.89 L461.2 204.91 L460.6 205.06 L460 205.57 L459.4 205.56 L458.8 205.82 L458.2 206.1 L457.6 206.24 L457 206.36 L456.4 206.62 L455.8 206.85 L455.2 206.8 L454.6 207.15 L454 206.8 L453.4 206.28 L452.8 204.77 L452.2 204.24 L451.6 204.54 L451 204.57 L450.4 205.05 L449.8 205.08 L449.2 205.53 L448.6 205.66 L448 206.16 L447.4 206.15 L446.8 204.41 L446.2 204.2 L445.6 204.16 L445 204.17 L444.4 204.16 L443.8 204.25 L443.2 204.27 L442.6 204.31 L442 204.43 L441.4 204.63 L440.8 204.71 L440.2 204.85 L439.6 204.95 L439 205.18 L438.4 205.38 L437.8 205.49 L437.2 205.49 L436.6 205.95 L436 205.63 L435.4 206.11 L434.8 206.53 L434.2 206.41 L433.6 206.64 L433 207.24 L432.4 207.2 L431.8 207.55 L431.2 208.11 L430.6 206.99 L430 205.61 L429.4 204.51 L428.8 204.13 L428.2 204.2 L427.6 204.18 L427 204.18 L426.4 204.35 L425.8 204.45 L425.2 204.78 L424.6 204.73 L424 205.15 L423.4 205.19 L422.8 205.52 L422.2 206.13 L421.6 206.2 L421 205.93 L420.4 206.45 L419.8 206.98 L419.2 206.78 L418.6 205.04 L418 204.3 L417.4 204.47 L416.8 204.6 L416.2 204.78 L415.6 205.2 L415 205.24 L414.4 205.73 L413.8 205.64 L413.2 205.83 L412.6 206.38 L412 206.46 L411.4 206.73 L410.8 207.67 L410.2 207.68 L409.6 208.29 L409 207.76 L408.4 207.05 L407.8 205.35 L407.2 204.15 L406.6 204.18 L406 204.17 L405.4 204.19 L404.8 204.17 L404.2 204.17 L403.6 204.12 L403 204.19 L402.4 204.15 L401.8 204.15 L401.2 204.18 L400.6 204.16 L400 204.15 L399.4 204.14 L398.8 204.15Z" fill="#cdcaf2"/>
<line x1="398.8" y1="203.8" x2="987.8" y2="203.8" stroke="#cdcaf2" stroke-width="0.7"/>
<rect x="397.4" y="212.1" width="591.8" height="26.9" fill="#141414" rx="1.8"/>
<rect x="397.8" y="213" width="591" height="25" fill="#3e608c" rx="1.6"/>
<text x="400.4" y="220.6" font-size="6.5" fill="#dce6f6" stroke="#dce6f6" stroke-width=".22">My Vocal</text>
<path d="M398.8 230.17 L399.4 230.14 L400 230.07 L400.6 230.01 L401.2 229.91 L401.8 229.94 L402.4 229.91 L403 229.76 L403.6 229.91 L404.2 229.77 L404.8 229.74 L405.4 229.63 L406 229.67 L406.6 229.64 L407.2 229.7 L407.8 229.55 L408.4 229.6 L409 229.63 L409.6 229.59 L410.2 229.59 L410.8 229.59 L411.4 229.76 L412 229.73 L412.6 229.6 L413.2 229.71 L413.8 229.66 L414.4 229.57 L415 229.83 L415.6 229.69 L416.2 229.86 L416.8 229.87 L417.4 229.72 L418 229.76 L418.6 229.83 L419.2 229.89 L419.8 229.97 L420.4 229.99 L421 230.11 L421.6 230.09 L422.2 230.09 L422.8 230.23 L423.4 230.3 L424 230.3 L424.6 230.41 L425.2 229.01 L425.8 228.05 L426.4 227.15 L427 226.98 L427.6 226.81 L428.2 226.98 L428.8 228.28 L429.4 229.34 L430 230.53 L430.6 229.13 L431.2 228.02 L431.8 227.74 L432.4 227.07 L433 227.17 L433.6 227.91 L434.2 228.93 L434.8 229.94 L435.4 230.5 L436 230.5 L436.6 230.5 L437.2 230.5 L437.8 230.5 L438.4 229.41 L439 228.44 L439.6 227.66 L440.2 227.98 L440.8 227.82 L441.4 228.38 L442 228.53 L442.6 228.83 L443.2 228.78 L443.8 228.82 L444.4 229.18 L445 229.35 L445.6 229.54 L446.2 229.62 L446.8 229.98 L447.4 230.12 L448 230.22 L448.6 230.36 L449.2 230.48 L449.8 230.5 L450.4 230.5 L451 230.5 L451.6 230.5 L452.2 230.5 L452.8 230.5 L453.4 230.5 L454 230.5 L454.6 230.5 L455.2 230.5 L455.8 230.5 L456.4 230.5 L457 230.5 L457.6 230.5 L458.2 230.5 L458.8 230.5 L459.4 230.5 L460 230.5 L460.6 230.5 L461.2 230.5 L461.8 230.5 L462.4 230.5 L463 230.5 L463.6 230.5 L464.2 230.5 L464.8 230.5 L465.4 230.5 L466 230.5 L466.6 230.06 L467.2 228.9 L467.8 227.79 L468.4 227.15 L469 227.29 L469.6 226.76 L470.2 226.02 L470.8 226.59 L471.4 226.71 L472 227.1 L472.6 228.25 L473.2 228.9 L473.8 230.2 L474.4 230.5 L475 230.5 L475.6 230.5 L476.2 230.5 L476.8 229.38 L477.4 228.27 L478 227.24 L478.6 226.63 L479.2 226.62 L479.8 226.17 L480.4 226.28 L481 227.3 L481.6 227.91 L482.2 228.52 L482.8 229.92 L483.4 230.5 L484 230.2 L484.6 229.96 L485.2 229.8 L485.8 229.41 L486.4 229.53 L487 229.36 L487.6 229.28 L488.2 229.33 L488.8 229.44 L489.4 229.6 L490 229.64 L490.6 230.01 L491.2 230.3 L491.8 230.5 L492.4 230.5 L493 230.5 L493.6 230.5 L494.2 230.5 L494.8 230.34 L495.4 229.46 L496 228.79 L496.6 228.15 L497.2 227.65 L497.8 227.24 L498.4 227.64 L499 227.35 L499.6 227.24 L500.2 227.61 L500.8 228.35 L501.4 228.7 L502 228.98 L502.6 229.79 L503.2 230.5 L503.8 230.15 L504.4 229.6 L505 228.98 L505.6 228.81 L506.2 228.59 L506.8 228.9 L507.4 229.1 L508 229.81 L508.6 230.54 L509.2 229.4 L509.8 228.36 L510.4 228.04 L511 228 L511.6 227.9 L512.2 228.43 L512.8 228.91 L513.4 230.08 L514 230.5 L514.6 230.5 L515.2 230.5 L515.8 230.5 L516.4 230.5 L517 230.5 L517.6 230.5 L518.2 230.5 L518.8 230.5 L519.4 230.5 L520 230.5 L520.6 230.5 L521.2 230.5 L521.8 230.5 L522.4 230.5 L523 230.51 L523.6 229.17 L524.2 228.39 L524.8 227.71 L525.4 227.03 L526 226.47 L526.6 226.49 L527.2 226.64 L527.8 227.04 L528.4 226.86 L529 227.81 L529.6 228.83 L530.2 229.75 L530.8 230.3 L531.4 230.12 L532 230.06 L532.6 230.02 L533.2 229.97 L533.8 229.87 L534.4 229.82 L535 229.62 L535.6 229.49 L536.2 229.66 L536.8 229.47 L537.4 229.58 L538 229.46 L538.6 229.62 L539.2 229.6 L539.8 229.58 L540.4 229.74 L541 229.6 L541.6 229.55 L542.2 229.65 L542.8 229.57 L543.4 229.8 L544 229.82 L544.6 229.63 L545.2 229.73 L545.8 229.7 L546.4 229.83 L547 229.89 L547.6 229.89 L548.2 229.81 L548.8 229.82 L549.4 229.8 L550 229.91 L550.6 229.95 L551.2 229.88 L551.8 229.9 L552.4 229.92 L553 229.97 L553.6 229.83 L554.2 229.99 L554.8 229.96 L555.4 229.9 L556 229.9 L556.6 229.96 L557.2 230 L557.8 230.09 L558.4 229.94 L559 229.96 L559.6 230.07 L560.2 230.14 L560.8 230.03 L561.4 230.15 L562 230.04 L562.6 230.12 L563.2 230.16 L563.8 230.1 L564.4 230.11 L565 230.22 L565.6 230.11 L566.2 230.14 L566.8 230.21 L567.4 230.19 L568 230.27 L568.6 230.23 L569.2 230.21 L569.8 230.24 L570.4 230.22 L571 230.21 L571.6 230.3 L572.2 230.3 L572.8 230.35 L573.4 230.27 L574 230.37 L574.6 230.36 L575.2 230.34 L575.8 230.32 L576.4 230.39 L577 230.35 L577.6 230.34 L578.2 230.39 L578.8 230.39 L579.4 230.39 L580 230.45 L580.6 230.47 L581.2 230.43 L581.8 230.46 L582.4 230.45 L583 230.45 L583.6 230.46 L584.2 230.46 L584.8 230.46 L585.4 230.51 L586 230.48 L586.6 230.48 L587.2 230.49 L587.8 230.51 L588.4 230.54 L589 230.5 L589.6 230.5 L590.2 230.5 L590.8 230.5 L591.4 230.5 L592 230.5 L592.6 230.5 L593.2 230.5 L593.8 230.5 L594.4 230.5 L595 230.5 L595.6 230.5 L596.2 230.5 L596.8 230.5 L597.4 230.5 L598 230.5 L598.6 230.5 L599.2 230.5 L599.8 230.5 L600.4 230.5 L601 230.5 L601.6 230.5 L602.2 230.5 L602.8 230.5 L603.4 229.4 L604 227.73 L604.6 226.95 L605.2 225.97 L605.8 225.71 L606.4 226.35 L607 226.8 L607.6 227.29 L608.2 228.18 L608.8 229.79 L609.4 230.5 L610 229.15 L610.6 227.82 L611.2 227.04 L611.8 226.97 L612.4 226.29 L613 226.61 L613.6 226.53 L614.2 227.38 L614.8 228.59 L615.4 230.13 L616 230.55 L616.6 228.23 L617.2 227.69 L617.8 228.13 L618.4 228.58 L619 228.96 L619.6 229.17 L620.2 229.38 L620.8 229.73 L621.4 230.04 L622 230.23 L622.6 230.44 L623.2 230.5 L623.8 230.5 L624.4 230.5 L625 230.5 L625.6 230.5 L626.2 230.5 L626.8 230.5 L627.4 230.5 L628 230.5 L628.6 230.5 L629.2 230.5 L629.8 230.5 L630.4 230.5 L631 230.5 L631.6 230.5 L632.2 230.5 L632.8 230.5 L633.4 230.5 L634 230.5 L634.6 230.5 L635.2 230.5 L635.8 230.5 L636.4 230.5 L637 230.5 L637.6 230.5 L638.2 230.5 L638.8 230.5 L639.4 230.5 L640 230.5 L640.6 230.5 L641.2 230.5 L641.8 230.5 L642.4 230.5 L643 230.5 L643.6 230.5 L644.2 230.5 L644.8 230.5 L645.4 230.5 L646 230.5 L646.6 230.5 L647.2 230.5 L647.8 230.5 L648.4 230.5 L649 230.5 L649.6 230.5 L650.2 230 L650.8 228.9 L651.4 228.14 L652 227.25 L652.6 227.07 L653.2 226.31 L653.8 226.57 L654.4 226.89 L655 227.01 L655.6 227.81 L656.2 228.7 L656.8 230.01 L657.4 229.26 L658 228.04 L658.6 227.11 L659.2 226.61 L659.8 226.29 L660.4 226.09 L661 225.81 L661.6 226.49 L662.2 226.78 L662.8 227.85 L663.4 228.95 L664 230.56 L664.6 228.73 L665.2 227.9 L665.8 228 L666.4 228.34 L667 228.59 L667.6 228.73 L668.2 228.96 L668.8 229.24 L669.4 229.73 L670 229.87 L670.6 230.17 L671.2 230.34 L671.8 230.5 L672.4 230.5 L673 230.5 L673.6 230.5 L674.2 230.5 L674.8 230.5 L675.4 230.5 L676 230.5 L676.6 230.5 L677.2 230.5 L677.8 230.5 L678.4 230.5 L679 230.5 L679.6 230.5 L680.2 230.5 L680.8 230.5 L681.4 230.5 L682 230.5 L682.6 230.5 L683.2 230.5 L683.8 230.5 L684.4 230.5 L685 230.5 L685.6 230.5 L686.2 230.5 L686.8 230.5 L687.4 230.5 L688 230.5 L688.6 230.5 L689.2 230.5 L689.8 230.5 L690.4 230.5 L691 230.5 L691.6 230.5 L692.2 230.5 L692.8 230.5 L693.4 230.5 L694 230.5 L694.6 230.5 L695.2 230.5 L695.8 230.5 L696.4 230.5 L697 230.5 L697.6 230.5 L698.2 230.5 L698.8 230.5 L699.4 230.5 L700 230.54 L700.6 229.34 L701.2 228.44 L701.8 227.84 L702.4 226.91 L703 227.04 L703.6 226.21 L704.2 226.4 L704.8 226.72 L705.4 227.18 L706 227.23 L706.6 228.3 L707.2 228.83 L707.8 230.09 L708.4 230.5 L709 229.3 L709.6 228.55 L710.2 227.91 L710.8 226.95 L711.4 226.94 L712 226.11 L712.6 226.61 L713.2 226.27 L713.8 226.38 L714.4 227.61 L715 227.84 L715.6 228.98 L716.2 229.75 L716.8 230.5 L717.4 229.44 L718 228.13 L718.6 228.19 L719.2 228.34 L719.8 228.43 L720.4 228.6 L721 228.79 L721.6 228.85 L722.2 229.26 L722.8 229.41 L723.4 229.71 L724 229.73 L724.6 230 L725.2 230.08 L725.8 230.25 L726.4 230.4 L727 230.5 L727.6 230.5 L728.2 230.5 L728.8 230.5 L729.4 230.5 L730 230.5 L730.6 230.5 L731.2 230.5 L731.8 230.5 L732.4 230.5 L733 230.5 L733.6 230.5 L734.2 230.5 L734.8 230.5 L735.4 230.5 L736 230.5 L736.6 230.5 L737.2 230.5 L737.8 230.5 L738.4 230.5 L739 230.5 L739.6 230.5 L740.2 230.5 L740.8 230.5 L741.4 230.5 L742 230.5 L742.6 230.5 L743.2 230.5 L743.8 230.5 L744.4 230.5 L745 230.5 L745.6 230.5 L746.2 230.5 L746.8 230.5 L747.4 230.5 L748 230.5 L748.6 230.5 L749.2 230.5 L749.8 230.5 L750.4 230.5 L751 230.5 L751.6 230.5 L752.2 230.5 L752.8 230.5 L753.4 230.5 L754 230.5 L754.6 230.5 L755.2 229.95 L755.8 228.89 L756.4 227.76 L757 227.32 L757.6 226.9 L758.2 227.21 L758.8 226.84 L759.4 227.03 L760 227.77 L760.6 228 L761.2 228.84 L761.8 229.9 L762.4 230.5 L763 230.5 L763.6 230.5 L764.2 230.5 L764.8 230.5 L765.4 230.5 L766 230.5 L766.6 230.5 L767.2 230.5 L767.8 230.5 L768.4 230.5 L769 230.5 L769.6 230.5 L770.2 230.5 L770.8 230.5 L771.4 230.5 L772 230.5 L772.6 230.5 L773.2 230.5 L773.8 230.5 L774.4 230.5 L775 230.54 L775.6 226.4 L776.2 230.5 L776.8 230.5 L777.4 230.5 L778 230.5 L778.6 230.5 L779.2 230.5 L779.8 230.5 L780.4 230.5 L781 230.5 L781.6 230.5 L782.2 230.5 L782.8 230.5 L783.4 230.29 L784 230.01 L784.6 229.89 L785.2 229.59 L785.8 229.65 L786.4 229.34 L787 229.39 L787.6 229.19 L788.2 228.92 L788.8 228.88 L789.4 228.85 L790 228.85 L790.6 228.46 L791.2 228.63 L791.8 228.37 L792.4 228.36 L793 228.39 L793.6 228.49 L794.2 228.58 L794.8 228.45 L795.4 228.76 L796 228.93 L796.6 228.65 L797.2 228.91 L797.8 229.03 L798.4 229.27 L799 229.08 L799.6 229.47 L800.2 229.52 L800.8 229.37 L801.4 228.97 L802 228.28 L802.6 228.23 L803.2 228.1 L803.8 228.06 L804.4 227.66 L805 227.97 L805.6 227.78 L806.2 227.78 L806.8 228.45 L807.4 228.88 L808 229.44 L808.6 229.87 L809.2 230.16 L809.8 229.15 L810.4 228.39 L811 228.27 L811.6 228.77 L812.2 229 L812.8 228.9 L813.4 229.01 L814 229.27 L814.6 229.48 L815.2 229.5 L815.8 229.63 L816.4 229.9 L817 230 L817.6 230.2 L818.2 230.2 L818.8 230.39 L819.4 230.49 L820 230.5 L820.6 230.5 L821.2 230.5 L821.8 230.5 L822.4 230.5 L823 230.5 L823.6 230.5 L824.2 230.5 L824.8 230.5 L825.4 230.5 L826 230.5 L826.6 230.5 L827.2 230.42 L827.8 230.22 L828.4 230.01 L829 229.85 L829.6 229.81 L830.2 229.68 L830.8 229.46 L831.4 229.6 L832 229.4 L832.6 229.13 L833.2 229.26 L833.8 229.02 L834.4 228.97 L835 229 L835.6 229.08 L836.2 228.78 L836.8 228.73 L837.4 229.04 L838 229.03 L838.6 229.02 L839.2 228.74 L839.8 229.15 L840.4 228.8 L841 228.87 L841.6 229.18 L842.2 229.11 L842.8 229.38 L843.4 229.2 L844 229.22 L844.6 229.4 L845.2 229.53 L845.8 229.8 L846.4 229.85 L847 230.02 L847.6 229.56 L848.2 228.92 L848.8 228.39 L849.4 227.75 L850 227.46 L850.6 227.1 L851.2 227.04 L851.8 227.51 L852.4 227.59 L853 228.1 L853.6 228.75 L854.2 229.26 L854.8 230.04 L855.4 229.81 L856 228.68 L856.6 228.12 L857.2 227.83 L857.8 226.97 L858.4 227.25 L859 226.68 L859.6 226.85 L860.2 227.17 L860.8 227.64 L861.4 228.22 L862 228.85 L862.6 229.71 L863.2 230.13 L863.8 229.06 L864.4 228.66 L865 228.77 L865.6 229.04 L866.2 228.94 L866.8 229.27 L867.4 229.54 L868 229.61 L868.6 229.65 L869.2 229.89 L869.8 229.99 L870.4 230.17 L871 230.2 L871.6 230.29 L872.2 230.46 L872.8 230.53 L873.4 230.5 L874 230.5 L874.6 230.5 L875.2 230.5 L875.8 230.5 L876.4 230.5 L877 230.5 L877.6 230.5 L878.2 230.5 L878.8 230.5 L879.4 230.5 L880 230.5 L880.6 230.5 L881.2 230.5 L881.8 230.5 L882.4 230.5 L883 230.5 L883.6 230.5 L884.2 230.5 L884.8 230.5 L885.4 230.5 L886 230.5 L886.6 230.5 L887.2 230.5 L887.8 230.5 L888.4 230.5 L889 230.5 L889.6 230.5 L890.2 230.5 L890.8 230.5 L891.4 230.5 L892 230.53 L892.6 229.35 L893.2 228.61 L893.8 227.79 L894.4 226.97 L895 227.42 L895.6 227.29 L896.2 227.39 L896.8 227.13 L897.4 227.7 L898 228.85 L898.6 229.5 L899.2 229.98 L899.8 228.86 L900.4 228.01 L901 227.93 L901.6 227.25 L902.2 227.22 L902.8 226.86 L903.4 227.11 L904 227.09 L904.6 227.31 L905.2 228.17 L905.8 228.49 L906.4 229.37 L907 230.54 L907.6 229.19 L908.2 228.23 L908.8 228.37 L909.4 228.56 L910 229.01 L910.6 228.95 L911.2 229.29 L911.8 229.34 L912.4 229.63 L913 229.6 L913.6 229.8 L914.2 230.02 L914.8 230.06 L915.4 230.29 L916 230.37 L916.6 230.48 L917.2 230.5 L917.8 230.5 L918.4 230.5 L919 230.5 L919.6 230.5 L920.2 230.38 L920.8 229.93 L921.4 229.72 L922 229.46 L922.6 229.2 L923.2 229 L923.8 228.84 L924.4 228.92 L925 228.75 L925.6 229.12 L926.2 228.94 L926.8 229.09 L927.4 229.21 L928 229.37 L928.6 229.63 L929.2 229.94 L929.8 230.31 L930.4 230.25 L931 229.83 L931.6 229.68 L932.2 229.56 L932.8 229.13 L933.4 229.13 L934 228.87 L934.6 228.82 L935.2 228.58 L935.8 228.62 L936.4 228.61 L937 228.59 L937.6 228.92 L938.2 228.87 L938.8 229.08 L939.4 229.22 L940 229.59 L940.6 229.67 L941.2 230.06 L941.8 230.39 L942.4 230.5 L943 230.5 L943.6 230.5 L944.2 230.5 L944.8 230.5 L945.4 230.5 L946 230.5 L946.6 230.5 L947.2 230.5 L947.8 230.5 L948.4 230.5 L949 230.5 L949.6 230.5 L950.2 230.26 L950.8 229.45 L951.4 229.11 L952 228.7 L952.6 228.15 L953.2 227.9 L953.8 227.87 L954.4 227.83 L955 227.63 L955.6 227.65 L956.2 227.53 L956.8 227.91 L957.4 228.26 L958 228.46 L958.6 228.89 L959.2 229.6 L959.8 229.59 L960.4 229.24 L961 228.79 L961.6 228.71 L962.2 228.81 L962.8 228.91 L963.4 228.65 L964 228.94 L964.6 228.78 L965.2 228.83 L965.8 228.97 L966.4 229.21 L967 229.24 L967.6 229.35 L968.2 229.4 L968.8 229.3 L969.4 229.42 L970 229.32 L970.6 229.49 L971.2 229.5 L971.8 229.66 L972.4 229.65 L973 229.53 L973.6 229.67 L974.2 229.8 L974.8 229.8 L975.4 229.75 L976 229.97 L976.6 229.85 L977.2 229.97 L977.8 230.05 L978.4 229.99 L979 230.08 L979.6 230.15 L980.2 230.24 L980.8 230.19 L981.4 230.3 L982 230.32 L982.6 230.29 L983.2 230.38 L983.8 230.42 L984.4 230.4 L985 230.43 L985.6 230.48 L986.2 230.48 L986.8 230.5 L987.4 230.5 L987.4 231.08 L986.8 231.09 L986.2 231.08 L985.6 231.07 L985 231.13 L984.4 231.13 L983.8 231.12 L983.2 231.17 L982.6 231.24 L982 231.21 L981.4 231.25 L980.8 231.38 L980.2 231.25 L979.6 231.37 L979 231.42 L978.4 231.45 L977.8 231.49 L977.2 231.58 L976.6 231.72 L976 231.54 L975.4 231.83 L974.8 231.78 L974.2 231.71 L973.6 231.82 L973 232.01 L972.4 231.82 L971.8 231.85 L971.2 231.91 L970.6 231.99 L970 232.01 L969.4 232.01 L968.8 232.1 L968.2 232.2 L967.6 232.21 L967 232.36 L966.4 232.24 L965.8 232.32 L965.2 232.51 L964.6 232.53 L964 232.64 L963.4 232.54 L962.8 232.49 L962.2 232.4 L961.6 232.54 L961 232.75 L960.4 232.25 L959.8 231.86 L959.2 231.77 L958.6 232.54 L958 232.96 L957.4 233.12 L956.8 233.19 L956.2 233.61 L955.6 233.5 L955 233.63 L954.4 233.21 L953.8 233.67 L953.2 233.59 L952.6 233.44 L952 232.7 L951.4 232.48 L950.8 232.06 L950.2 231.32 L949.6 231.04 L949 231.07 L948.4 231.09 L947.8 231.1 L947.2 231.07 L946.6 231.04 L946 231.1 L945.4 231.05 L944.8 231.05 L944.2 231.08 L943.6 231.05 L943 231.08 L942.4 231.06 L941.8 231.19 L941.2 231.45 L940.6 231.9 L940 231.91 L939.4 232.22 L938.8 232.49 L938.2 232.67 L937.6 232.48 L937 232.78 L936.4 232.74 L935.8 232.78 L935.2 232.91 L934.6 232.43 L934 232.55 L933.4 232.34 L932.8 232.29 L932.2 231.84 L931.6 231.81 L931 231.75 L930.4 231.29 L929.8 231.22 L929.2 231.6 L928.6 231.83 L928 232.21 L927.4 232.3 L926.8 232.43 L926.2 232.33 L925.6 232.34 L925 232.63 L924.4 232.63 L923.8 232.57 L923.2 232.42 L922.6 232.22 L922 231.9 L921.4 231.77 L920.8 231.56 L920.2 231.21 L919.6 231.08 L919 231.05 L918.4 231.09 L917.8 231.04 L917.2 231.09 L916.6 231.12 L916 231.17 L915.4 231.21 L914.8 231.4 L914.2 231.49 L913.6 231.66 L913 231.88 L912.4 231.92 L911.8 231.99 L911.2 232.08 L910.6 232.36 L910 232.32 L909.4 232.84 L908.8 233.2 L908.2 232.91 L907.6 232.34 L907 231.04 L906.4 231.99 L905.8 233.01 L905.2 232.91 L904.6 233.7 L904 234.27 L903.4 234.18 L902.8 234.25 L902.2 233.89 L901.6 234.31 L901 233.23 L900.4 233.3 L899.8 232.61 L899.2 231.56 L898.6 231.99 L898 232.67 L897.4 233.54 L896.8 234.43 L896.2 234 L895.6 233.96 L895 233.8 L894.4 234.23 L893.8 233.3 L893.2 232.56 L892.6 232 L892 231.02 L891.4 231.08 L890.8 231.09 L890.2 231.09 L889.6 231.09 L889 231.09 L888.4 231.09 L887.8 231.07 L887.2 231.08 L886.6 231.04 L886 231.04 L885.4 231.05 L884.8 231.09 L884.2 231.1 L883.6 231.05 L883 231.07 L882.4 231.09 L881.8 231.04 L881.2 231.07 L880.6 231.09 L880 231.1 L879.4 231.1 L878.8 231.09 L878.2 231.05 L877.6 231.04 L877 231.05 L876.4 231.05 L875.8 231.1 L875.2 231.07 L874.6 231.06 L874 231.08 L873.4 231.08 L872.8 231.06 L872.2 231.09 L871.6 231.3 L871 231.38 L870.4 231.34 L869.8 231.59 L869.2 231.7 L868.6 231.94 L868 231.92 L867.4 231.92 L866.8 232.28 L866.2 232.44 L865.6 232.5 L865 232.53 L864.4 232.54 L863.8 232.52 L863.2 231.42 L862.6 231.72 L862 232.42 L861.4 232.86 L860.8 233.95 L860.2 234.28 L859.6 234.08 L859 234.7 L858.4 234.29 L857.8 234.51 L857.2 233.42 L856.6 233.41 L856 232.54 L855.4 231.61 L854.8 231.44 L854.2 232.09 L853.6 232.74 L853 233.3 L852.4 233.93 L851.8 234.05 L851.2 234.33 L850.6 234 L850 233.51 L849.4 233.53 L848.8 233.13 L848.2 232.6 L847.6 231.9 L847 231.55 L846.4 231.64 L845.8 231.65 L845.2 232.02 L844.6 231.93 L844 232.2 L843.4 232.26 L842.8 232.16 L842.2 232.2 L841.6 232.15 L841 232.53 L840.4 232.79 L839.8 232.2 L839.2 232.54 L838.6 232.29 L838 232.41 L837.4 232.48 L836.8 232.83 L836.2 232.81 L835.6 232.29 L835 232.31 L834.4 232.38 L833.8 232.36 L833.2 232.06 L832.6 232.26 L832 232.01 L831.4 231.88 L830.8 231.94 L830.2 231.8 L829.6 231.78 L829 231.73 L828.4 231.48 L827.8 231.33 L827.2 231.13 L826.6 231.04 L826 231.07 L825.4 231.07 L824.8 231.08 L824.2 231.09 L823.6 231.09 L823 231.07 L822.4 231.06 L821.8 231.06 L821.2 231.08 L820.6 231.09 L820 231.04 L819.4 231.05 L818.8 231.18 L818.2 231.32 L817.6 231.33 L817 231.58 L816.4 231.62 L815.8 231.81 L815.2 232.03 L814.6 232.1 L814 232.06 L813.4 232.24 L812.8 232.64 L812.2 232.53 L811.6 232.78 L811 233.27 L810.4 233.01 L809.8 232.41 L809.2 231.36 L808.6 231.69 L808 232.04 L807.4 232.62 L806.8 233.09 L806.2 233.29 L805.6 233.32 L805 233.13 L804.4 233.77 L803.8 232.99 L803.2 233.24 L802.6 232.98 L802 232.94 L801.4 232.44 L800.8 232.09 L800.2 231.93 L799.6 232.02 L799 232.34 L798.4 232.18 L797.8 232.28 L797.2 232.43 L796.6 232.72 L796 232.39 L795.4 232.75 L794.8 233.09 L794.2 232.69 L793.6 232.91 L793 232.89 L792.4 232.85 L791.8 232.82 L791.2 232.62 L790.6 233.13 L790 232.74 L789.4 232.68 L788.8 232.49 L788.2 232.66 L787.6 232.12 L787 232.16 L786.4 232.13 L785.8 231.82 L785.2 232 L784.6 231.66 L784 231.57 L783.4 231.29 L782.8 231.06 L782.2 231.07 L781.6 231.06 L781 231.04 L780.4 231.06 L779.8 231.09 L779.2 231.07 L778.6 231.08 L778 231.06 L777.4 231.05 L776.8 231.06 L776.2 231.08 L775.6 234.46 L775 231.03 L774.4 231.08 L773.8 231.08 L773.2 231.07 L772.6 231.05 L772 231.06 L771.4 231.08 L770.8 231.06 L770.2 231.06 L769.6 231.06 L769 231.05 L768.4 231.08 L767.8 231.06 L767.2 231.05 L766.6 231.05 L766 231.04 L765.4 231.07 L764.8 231.07 L764.2 231.09 L763.6 231.05 L763 231.05 L762.4 231.06 L761.8 231.64 L761.2 232.48 L760.6 233.05 L760 233.58 L759.4 233.91 L758.8 234.58 L758.2 234.35 L757.6 234.03 L757 234.02 L756.4 233.71 L755.8 232.61 L755.2 231.49 L754.6 231.08 L754 231.08 L753.4 231.07 L752.8 231.09 L752.2 231.1 L751.6 231.09 L751 231.05 L750.4 231.06 L749.8 231.08 L749.2 231.06 L748.6 231.09 L748 231.08 L747.4 231.08 L746.8 231.08 L746.2 231.05 L745.6 231.04 L745 231.08 L744.4 231.09 L743.8 231.06 L743.2 231.05 L742.6 231.06 L742 231.07 L741.4 231.09 L740.8 231.04 L740.2 231.1 L739.6 231.09 L739 231.07 L738.4 231.09 L737.8 231.1 L737.2 231.07 L736.6 231.07 L736 231.06 L735.4 231.08 L734.8 231.09 L734.2 231.08 L733.6 231.07 L733 231.06 L732.4 231.09 L731.8 231.08 L731.2 231.04 L730.6 231.05 L730 231.08 L729.4 231.08 L728.8 231.07 L728.2 231.09 L727.6 231.06 L727 231.09 L726.4 231.15 L725.8 231.35 L725.2 231.41 L724.6 231.48 L724 231.82 L723.4 231.75 L722.8 231.98 L722.2 232.17 L721.6 232.47 L721 232.56 L720.4 232.78 L719.8 232.84 L719.2 232.8 L718.6 233.29 L718 233.27 L717.4 232.03 L716.8 231.07 L716.2 231.71 L715.6 232.37 L715 233.61 L714.4 233.47 L713.8 234.4 L713.2 234.97 L712.6 234.8 L712 234.76 L711.4 234.02 L710.8 234.18 L710.2 233.6 L709.6 232.95 L709 232.28 L708.4 231.07 L707.8 231.45 L707.2 232.61 L706.6 233.09 L706 233.67 L705.4 234.1 L704.8 234.38 L704.2 234.35 L703.6 234.86 L703 233.83 L702.4 234.21 L701.8 233.55 L701.2 233.15 L700.6 231.97 L700 231.03 L699.4 231.05 L698.8 231.05 L698.2 231.08 L697.6 231.08 L697 231.06 L696.4 231.08 L695.8 231.09 L695.2 231.07 L694.6 231.06 L694 231.06 L693.4 231.05 L692.8 231.08 L692.2 231.09 L691.6 231.06 L691 231.08 L690.4 231.05 L689.8 231.05 L689.2 231.09 L688.6 231.09 L688 231.08 L687.4 231.06 L686.8 231.09 L686.2 231.07 L685.6 231.06 L685 231.08 L684.4 231.06 L683.8 231.08 L683.2 231.09 L682.6 231.05 L682 231.07 L681.4 231.08 L680.8 231.05 L680.2 231.05 L679.6 231.05 L679 231.04 L678.4 231.08 L677.8 231.07 L677.2 231.06 L676.6 231.09 L676 231.05 L675.4 231.08 L674.8 231.07 L674.2 231.09 L673.6 231.1 L673 231.08 L672.4 231.09 L671.8 231.04 L671.2 231.17 L670.6 231.38 L670 231.73 L669.4 231.69 L668.8 232.27 L668.2 232.3 L667.6 232.74 L667 233 L666.4 233.17 L665.8 233.31 L665.2 233.23 L664.6 232.5 L664 230.99 L663.4 232.37 L662.8 233.39 L662.2 234.7 L661.6 234.76 L661 235.13 L660.4 234.59 L659.8 234.69 L659.2 234.19 L658.6 233.79 L658 233.45 L657.4 232.16 L656.8 231.46 L656.2 232.66 L655.6 233.42 L655 234.09 L654.4 234.64 L653.8 234.58 L653.2 235.03 L652.6 233.84 L652 233.94 L651.4 232.94 L650.8 232.48 L650.2 231.52 L649.6 231.08 L649 231.07 L648.4 231.07 L647.8 231.09 L647.2 231.06 L646.6 231.08 L646 231.05 L645.4 231.08 L644.8 231.06 L644.2 231.09 L643.6 231.07 L643 231.06 L642.4 231.09 L641.8 231.1 L641.2 231.08 L640.6 231.08 L640 231.05 L639.4 231.04 L638.8 231.09 L638.2 231.08 L637.6 231.08 L637 231.05 L636.4 231.05 L635.8 231.1 L635.2 231.07 L634.6 231.05 L634 231.06 L633.4 231.06 L632.8 231.06 L632.2 231.06 L631.6 231.04 L631 231.09 L630.4 231.08 L629.8 231.08 L629.2 231.07 L628.6 231.08 L628 231.06 L627.4 231.05 L626.8 231.08 L626.2 231.1 L625.6 231.05 L625 231.07 L624.4 231.09 L623.8 231.07 L623.2 231.05 L622.6 231.1 L622 231.34 L621.4 231.44 L620.8 231.67 L620.2 231.99 L619.6 232.31 L619 232.33 L618.4 233 L617.8 233.29 L617.2 233.32 L616.6 233.09 L616 231.04 L615.4 231.44 L614.8 233 L614.2 233.78 L613.6 234.53 L613 234.69 L612.4 234.98 L611.8 234.18 L611.2 234.24 L610.6 233.31 L610 232.39 L609.4 231.1 L608.8 231.74 L608.2 233.35 L607.6 234 L607 234.74 L606.4 235.11 L605.8 235.55 L605.2 235.16 L604.6 234.5 L604 233.41 L603.4 232.11 L602.8 231.09 L602.2 231.09 L601.6 231.08 L601 231.06 L600.4 231.07 L599.8 231.05 L599.2 231.07 L598.6 231.09 L598 231.07 L597.4 231.06 L596.8 231.05 L596.2 231.09 L595.6 231.06 L595 231.1 L594.4 231.06 L593.8 231.04 L593.2 231.08 L592.6 231.09 L592 231.05 L591.4 231.08 L590.8 231.08 L590.2 231.06 L589.6 231.04 L589 231.05 L588.4 231.01 L587.8 231.08 L587.2 231.1 L586.6 231.09 L586 231.07 L585.4 231.08 L584.8 231.1 L584.2 231.14 L583.6 231.12 L583 231.11 L582.4 231.15 L581.8 231.12 L581.2 231.1 L580.6 231.1 L580 231.1 L579.4 231.21 L578.8 231.19 L578.2 231.19 L577.6 231.21 L577 231.2 L576.4 231.14 L575.8 231.19 L575.2 231.21 L574.6 231.23 L574 231.18 L573.4 231.28 L572.8 231.16 L572.2 231.27 L571.6 231.2 L571 231.33 L570.4 231.34 L569.8 231.28 L569.2 231.32 L568.6 231.31 L568 231.24 L567.4 231.32 L566.8 231.28 L566.2 231.45 L565.6 231.4 L565 231.38 L564.4 231.39 L563.8 231.42 L563.2 231.32 L562.6 231.47 L562 231.45 L561.4 231.38 L560.8 231.49 L560.2 231.44 L559.6 231.45 L559 231.56 L558.4 231.55 L557.8 231.46 L557.2 231.49 L556.6 231.48 L556 231.56 L555.4 231.65 L554.8 231.49 L554.2 231.59 L553.6 231.76 L553 231.6 L552.4 231.58 L551.8 231.62 L551.2 231.67 L550.6 231.63 L550 231.62 L549.4 231.65 L548.8 231.61 L548.2 231.69 L547.6 231.53 L547 231.71 L546.4 231.65 L545.8 231.85 L545.2 231.83 L544.6 231.78 L544 231.72 L543.4 231.61 L542.8 231.94 L542.2 231.76 L541.6 231.92 L541 231.79 L540.4 231.83 L539.8 231.83 L539.2 231.82 L538.6 231.97 L538 232.12 L537.4 231.78 L536.8 232.08 L536.2 231.86 L535.6 231.89 L535 231.83 L534.4 231.68 L533.8 231.58 L533.2 231.54 L532.6 231.5 L532 231.41 L531.4 231.47 L530.8 231.24 L530.2 231.74 L529.6 232.43 L529 233.58 L528.4 234.12 L527.8 233.81 L527.2 234.85 L526.6 234.28 L526 234.38 L525.4 234.48 L524.8 233.55 L524.2 233.11 L523.6 232.42 L523 231.04 L522.4 231.07 L521.8 231.06 L521.2 231.07 L520.6 231.04 L520 231.09 L519.4 231.09 L518.8 231.06 L518.2 231.04 L517.6 231.05 L517 231.07 L516.4 231.07 L515.8 231.08 L515.2 231.09 L514.6 231.05 L514 231.07 L513.4 231.41 L512.8 232.39 L512.2 233.09 L511.6 233.41 L511 233.21 L510.4 233.08 L509.8 232.81 L509.2 232.09 L508.6 231.06 L508 231.75 L507.4 232.32 L506.8 232.45 L506.2 232.92 L505.6 232.43 L505 232.3 L504.4 231.96 L503.8 231.42 L503.2 231.05 L502.6 231.65 L502 232.47 L501.4 232.64 L500.8 232.83 L500.2 233.51 L499.6 234.02 L499 234.05 L498.4 233.63 L497.8 234.06 L497.2 233.6 L496.6 232.93 L496 232.46 L495.4 231.96 L494.8 231.23 L494.2 231.09 L493.6 231.07 L493 231.08 L492.4 231.08 L491.8 231.08 L491.2 231.22 L490.6 231.47 L490 231.79 L489.4 231.98 L488.8 231.91 L488.2 232.04 L487.6 232.19 L487 232.02 L486.4 232.02 L485.8 232 L485.2 231.67 L484.6 231.63 L484 231.33 L483.4 231.08 L482.8 231.56 L482.2 232.83 L481.6 233.4 L481 234.24 L480.4 234.78 L479.8 234.77 L479.2 234.22 L478.6 234.81 L478 234.21 L477.4 232.85 L476.8 232.03 L476.2 231.07 L475.6 231.09 L475 231.08 L474.4 231.05 L473.8 231.35 L473.2 232.5 L472.6 233.23 L472 233.8 L471.4 234.39 L470.8 234.49 L470.2 234.71 L469.6 234.65 L469 233.93 L468.4 233.79 L467.8 233.71 L467.2 232.44 L466.6 231.4 L466 231.1 L465.4 231.06 L464.8 231.09 L464.2 231.04 L463.6 231.08 L463 231.04 L462.4 231.08 L461.8 231.1 L461.2 231.06 L460.6 231.07 L460 231.08 L459.4 231.05 L458.8 231.07 L458.2 231.08 L457.6 231.09 L457 231.06 L456.4 231.08 L455.8 231.06 L455.2 231.09 L454.6 231.09 L454 231.06 L453.4 231.08 L452.8 231.07 L452.2 231.08 L451.6 231.1 L451 231.06 L450.4 231.09 L449.8 231.04 L449.2 231.12 L448.6 231.2 L448 231.36 L447.4 231.43 L446.8 231.53 L446.2 231.91 L445.6 231.97 L445 232.24 L444.4 232.37 L443.8 232.78 L443.2 232.65 L442.6 232.57 L442 232.77 L441.4 233.18 L440.8 233.22 L440.2 233.41 L439.6 233.51 L439 233.08 L438.4 231.94 L437.8 231.06 L437.2 231.07 L436.6 231.09 L436 231.04 L435.4 231.09 L434.8 231.62 L434.2 232.52 L433.6 233.25 L433 234.06 L432.4 233.94 L431.8 233.85 L431.2 233.51 L430.6 232.36 L430 231.02 L429.4 232.17 L428.8 233.11 L428.2 233.9 L427.6 234.24 L427 234.36 L426.4 234.16 L425.8 233.19 L425.2 232.5 L424.6 231.13 L424 231.26 L423.4 231.26 L422.8 231.35 L422.2 231.51 L421.6 231.5 L421 231.4 L420.4 231.51 L419.8 231.63 L419.2 231.68 L418.6 231.66 L418 231.8 L417.4 231.79 L416.8 231.72 L416.2 231.71 L415.6 231.88 L415 231.75 L414.4 231.91 L413.8 231.73 L413.2 231.72 L412.6 231.85 L412 231.78 L411.4 231.78 L410.8 231.99 L410.2 231.89 L409.6 231.96 L409 231.75 L408.4 231.82 L407.8 231.94 L407.2 231.86 L406.6 231.9 L406 231.75 L405.4 231.77 L404.8 231.78 L404.2 231.73 L403.6 231.68 L403 231.73 L402.4 231.51 L401.8 231.58 L401.2 231.61 L400.6 231.56 L400 231.45 L399.4 231.35 L398.8 231.43Z" fill="#c9d7ee"/>
<line x1="398.8" y1="230.8" x2="987.8" y2="230.8" stroke="#c9d7ee" stroke-width="0.7"/>
<rect x="567" y="239.1" width="170.4" height="26.9" fill="#141414" rx="1.8"/>
<rect x="567.4" y="240" width="169.6" height="25" fill="#3e7c39" rx="1.6"/>
<line x1="652.2" y1="240" x2="652.2" y2="265" stroke="#1d1d1d" stroke-width="0.7" stroke-opacity=".28"/>
<path d="M652.2 265.2 l1.6 -1.8 h-3.2z M652.2 239.8 l1.6 1.8 h-3.2z" fill="#222"/>
<text x="570" y="247.6" font-size="6.5" fill="#d9f2d4" stroke="#d9f2d4" stroke-width=".22">Piano</text>
<rect x="568.1" y="253.5" width="11.9" height="1.1" fill="#b5e6ad" fill-opacity="1"/>
<rect x="568.1" y="255.2" width="11.9" height="1.1" fill="#b5e6ad" fill-opacity="1"/>
<rect x="580.8" y="254.3" width="18.4" height="0.8" fill="#b5e6ad" fill-opacity="1"/>
<rect x="580.8" y="256.1" width="32" height="0.8" fill="#b5e6ad" fill-opacity="1"/>
<rect x="581.7" y="257.9" width="11.9" height="0.8" fill="#b5e6ad" fill-opacity="1"/>
<rect x="581.7" y="259.5" width="32.2" height="0.8" fill="#b5e6ad" fill-opacity="1"/>
<rect x="637" y="253" width="2.6" height="0.8" fill="#b5e6ad" fill-opacity="0.9"/>
<rect x="637" y="255.6" width="2.6" height="0.8" fill="#b5e6ad" fill-opacity="0.9"/>
<rect x="637" y="258.4" width="2.6" height="0.8" fill="#b5e6ad" fill-opacity="0.9"/>
<rect x="637" y="261.7" width="2.6" height="0.8" fill="#b5e6ad" fill-opacity="0.9"/>
<line x1="622.2" y1="248" x2="622.2" y2="265" stroke="#2f6630" stroke-width="0.7"/>
<rect x="652.9" y="253.5" width="11.9" height="1.1" fill="#b5e6ad" fill-opacity="0.42"/>
<rect x="652.9" y="255.2" width="11.9" height="1.1" fill="#b5e6ad" fill-opacity="0.42"/>
<rect x="665.6" y="254.3" width="18.4" height="0.8" fill="#b5e6ad" fill-opacity="0.42"/>
<rect x="665.6" y="256.1" width="32" height="0.8" fill="#b5e6ad" fill-opacity="0.42"/>
<rect x="666.5" y="257.9" width="11.9" height="0.8" fill="#b5e6ad" fill-opacity="0.42"/>
<rect x="666.5" y="259.5" width="32.2" height="0.8" fill="#b5e6ad" fill-opacity="0.42"/>
<rect x="721.8" y="253" width="2.6" height="0.8" fill="#b5e6ad" fill-opacity="0.378"/>
<rect x="721.8" y="255.6" width="2.6" height="0.8" fill="#b5e6ad" fill-opacity="0.378"/>
<rect x="721.8" y="258.4" width="2.6" height="0.8" fill="#b5e6ad" fill-opacity="0.378"/>
<rect x="721.8" y="261.7" width="2.6" height="0.8" fill="#b5e6ad" fill-opacity="0.378"/>
<line x1="707" y1="248" x2="707" y2="265" stroke="#2f6630" stroke-width="0.7"/>
<rect x="906.2" y="239.1" width="83" height="26.9" fill="#141414" rx="1.8"/>
<rect x="906.6" y="240" width="82.2" height="25" fill="#3e7c39" rx="1.6"/>
<text x="909.2" y="247.6" font-size="6.5" fill="#d9f2d4" stroke="#d9f2d4" stroke-width=".22">Piano</text>
<rect x="907.3" y="253.5" width="11.9" height="1.1" fill="#b5e6ad" fill-opacity="1"/>
<rect x="907.3" y="255.2" width="11.9" height="1.1" fill="#b5e6ad" fill-opacity="1"/>
<rect x="920" y="254.3" width="18.4" height="0.8" fill="#b5e6ad" fill-opacity="1"/>
<rect x="920" y="256.1" width="32" height="0.8" fill="#b5e6ad" fill-opacity="1"/>
<rect x="920.9" y="257.9" width="11.9" height="0.8" fill="#b5e6ad" fill-opacity="1"/>
<rect x="920.9" y="259.5" width="32.2" height="0.8" fill="#b5e6ad" fill-opacity="1"/>
<rect x="976.2" y="253" width="2.6" height="0.8" fill="#b5e6ad" fill-opacity="0.9"/>
<rect x="976.2" y="255.6" width="2.6" height="0.8" fill="#b5e6ad" fill-opacity="0.9"/>
<rect x="976.2" y="258.4" width="2.6" height="0.8" fill="#b5e6ad" fill-opacity="0.9"/>
<rect x="976.2" y="261.7" width="2.6" height="0.8" fill="#b5e6ad" fill-opacity="0.9"/>
<line x1="961.4" y1="248" x2="961.4" y2="265" stroke="#2f6630" stroke-width="0.7"/>
<rect x="482.2" y="266.1" width="340" height="26.9" fill="#141414" rx="1.8"/>
<rect x="482.6" y="267" width="339.2" height="25" fill="#3e7c39" rx="1.6"/>
<line x1="567.4" y1="267" x2="567.4" y2="292" stroke="#1d1d1d" stroke-width="0.7" stroke-opacity=".28"/>
<path d="M567.4 292.2 l1.6 -1.8 h-3.2z M567.4 266.8 l1.6 1.8 h-3.2z" fill="#222"/>
<line x1="652.2" y1="267" x2="652.2" y2="292" stroke="#1d1d1d" stroke-width="0.7" stroke-opacity=".28"/>
<path d="M652.2 292.2 l1.6 -1.8 h-3.2z M652.2 266.8 l1.6 1.8 h-3.2z" fill="#222"/>
<line x1="737" y1="267" x2="737" y2="292" stroke="#1d1d1d" stroke-width="0.7" stroke-opacity=".28"/>
<path d="M737 292.2 l1.6 -1.8 h-3.2z M737 266.8 l1.6 1.8 h-3.2z" fill="#222"/>
<text x="485.2" y="274.6" font-size="6.5" fill="#d9f2d4" stroke="#d9f2d4" stroke-width=".22">Organ</text>
<rect x="483.5" y="279.6" width="3.7" height="0.9" fill="#b5e6ad" fill-opacity="0.55"/>
<rect x="494.6" y="279.6" width="1.5" height="0.9" fill="#b5e6ad" fill-opacity="0.55"/>
<rect x="496.8" y="279.6" width="1.5" height="0.9" fill="#b5e6ad" fill-opacity="0.55"/>
<rect x="483.5" y="284.6" width="3.7" height="0.9" fill="#b5e6ad" fill-opacity="1"/>
<rect x="494.6" y="284.6" width="1.5" height="0.9" fill="#b5e6ad" fill-opacity="1"/>
<rect x="496.8" y="284.6" width="1.5" height="0.9" fill="#b5e6ad" fill-opacity="1"/>
<rect x="483.5" y="287.4" width="3.7" height="0.9" fill="#b5e6ad" fill-opacity="1"/>
<rect x="494.6" y="287.4" width="1.5" height="0.9" fill="#b5e6ad" fill-opacity="1"/>
<rect x="496.8" y="287.4" width="1.5" height="0.9" fill="#b5e6ad" fill-opacity="1"/>
<rect x="526.6" y="280.2" width="2" height="0.8" fill="#b5e6ad" fill-opacity="0.8"/>
<rect x="528.4" y="279.6" width="2" height="0.8" fill="#b5e6ad" fill-opacity="0.8"/>
<rect x="530.2" y="279" width="1.6" height="0.8" fill="#b5e6ad" fill-opacity="0.8"/>
<rect x="538.2" y="279" width="2" height="0.8" fill="#b5e6ad" fill-opacity="0.8"/>
<rect x="533.1" y="284.6" width="2" height="0.8" fill="#b5e6ad" fill-opacity="0.8"/>
<rect x="553" y="280.6" width="2" height="0.8" fill="#b5e6ad" fill-opacity="0.8"/>
<rect x="551.4" y="285.7" width="2.4" height="0.8" fill="#b5e6ad" fill-opacity="0.8"/>
<rect x="554.6" y="285.7" width="2" height="0.8" fill="#b5e6ad" fill-opacity="0.8"/>
<rect x="558" y="285.7" width="2.4" height="0.8" fill="#b5e6ad" fill-opacity="0.8"/>
<rect x="549.6" y="289.6" width="3" height="0.8" fill="#b5e6ad" fill-opacity="0.8"/>
<rect x="553.6" y="289.6" width="3" height="0.8" fill="#b5e6ad" fill-opacity="0.8"/>
<rect x="557.6" y="289.6" width="3" height="0.8" fill="#b5e6ad" fill-opacity="0.8"/>
<rect x="568.3" y="279.6" width="3.7" height="0.9" fill="#b5e6ad" fill-opacity="0.28600000000000003"/>
<rect x="579.4" y="279.6" width="1.5" height="0.9" fill="#b5e6ad" fill-opacity="0.28600000000000003"/>
<rect x="581.6" y="279.6" width="1.5" height="0.9" fill="#b5e6ad" fill-opacity="0.28600000000000003"/>
<rect x="568.3" y="284.6" width="3.7" height="0.9" fill="#b5e6ad" fill-opacity="0.52"/>
<rect x="579.4" y="284.6" width="1.5" height="0.9" fill="#b5e6ad" fill-opacity="0.52"/>
<rect x="581.6" y="284.6" width="1.5" height="0.9" fill="#b5e6ad" fill-opacity="0.52"/>
<rect x="568.3" y="287.4" width="3.7" height="0.9" fill="#b5e6ad" fill-opacity="0.52"/>
<rect x="579.4" y="287.4" width="1.5" height="0.9" fill="#b5e6ad" fill-opacity="0.52"/>
<rect x="581.6" y="287.4" width="1.5" height="0.9" fill="#b5e6ad" fill-opacity="0.52"/>
<rect x="611.4" y="280.2" width="2" height="0.8" fill="#b5e6ad" fill-opacity="0.41600000000000004"/>
<rect x="613.2" y="279.6" width="2" height="0.8" fill="#b5e6ad" fill-opacity="0.41600000000000004"/>
<rect x="615" y="279" width="1.6" height="0.8" fill="#b5e6ad" fill-opacity="0.41600000000000004"/>
<rect x="623" y="279" width="2" height="0.8" fill="#b5e6ad" fill-opacity="0.41600000000000004"/>
<rect x="617.9" y="284.6" width="2" height="0.8" fill="#b5e6ad" fill-opacity="0.41600000000000004"/>
<rect x="637.8" y="280.6" width="2" height="0.8" fill="#b5e6ad" fill-opacity="0.41600000000000004"/>
<rect x="636.2" y="285.7" width="2.4" height="0.8" fill="#b5e6ad" fill-opacity="0.41600000000000004"/>
<rect x="639.4" y="285.7" width="2" height="0.8" fill="#b5e6ad" fill-opacity="0.41600000000000004"/>
<rect x="642.8" y="285.7" width="2.4" height="0.8" fill="#b5e6ad" fill-opacity="0.41600000000000004"/>
<rect x="634.4" y="289.6" width="3" height="0.8" fill="#b5e6ad" fill-opacity="0.41600000000000004"/>
<rect x="638.4" y="289.6" width="3" height="0.8" fill="#b5e6ad" fill-opacity="0.41600000000000004"/>
<rect x="642.4" y="289.6" width="3" height="0.8" fill="#b5e6ad" fill-opacity="0.41600000000000004"/>
<rect x="653.1" y="279.6" width="3.7" height="0.9" fill="#b5e6ad" fill-opacity="0.28600000000000003"/>
<rect x="664.2" y="279.6" width="1.5" height="0.9" fill="#b5e6ad" fill-opacity="0.28600000000000003"/>
<rect x="666.4" y="279.6" width="1.5" height="0.9" fill="#b5e6ad" fill-opacity="0.28600000000000003"/>
<rect x="653.1" y="284.6" width="3.7" height="0.9" fill="#b5e6ad" fill-opacity="0.52"/>
<rect x="664.2" y="284.6" width="1.5" height="0.9" fill="#b5e6ad" fill-opacity="0.52"/>
<rect x="666.4" y="284.6" width="1.5" height="0.9" fill="#b5e6ad" fill-opacity="0.52"/>
<rect x="653.1" y="287.4" width="3.7" height="0.9" fill="#b5e6ad" fill-opacity="0.52"/>
<rect x="664.2" y="287.4" width="1.5" height="0.9" fill="#b5e6ad" fill-opacity="0.52"/>
<rect x="666.4" y="287.4" width="1.5" height="0.9" fill="#b5e6ad" fill-opacity="0.52"/>
<rect x="696.2" y="280.2" width="2" height="0.8" fill="#b5e6ad" fill-opacity="0.41600000000000004"/>
<rect x="698" y="279.6" width="2" height="0.8" fill="#b5e6ad" fill-opacity="0.41600000000000004"/>
<rect x="699.8" y="279" width="1.6" height="0.8" fill="#b5e6ad" fill-opacity="0.41600000000000004"/>
<rect x="707.8" y="279" width="2" height="0.8" fill="#b5e6ad" fill-opacity="0.41600000000000004"/>
<rect x="702.7" y="284.6" width="2" height="0.8" fill="#b5e6ad" fill-opacity="0.41600000000000004"/>
<rect x="722.6" y="280.6" width="2" height="0.8" fill="#b5e6ad" fill-opacity="0.41600000000000004"/>
<rect x="721" y="285.7" width="2.4" height="0.8" fill="#b5e6ad" fill-opacity="0.41600000000000004"/>
<rect x="724.2" y="285.7" width="2" height="0.8" fill="#b5e6ad" fill-opacity="0.41600000000000004"/>
<rect x="727.6" y="285.7" width="2.4" height="0.8" fill="#b5e6ad" fill-opacity="0.41600000000000004"/>
<rect x="719.2" y="289.6" width="3" height="0.8" fill="#b5e6ad" fill-opacity="0.41600000000000004"/>
<rect x="723.2" y="289.6" width="3" height="0.8" fill="#b5e6ad" fill-opacity="0.41600000000000004"/>
<rect x="727.2" y="289.6" width="3" height="0.8" fill="#b5e6ad" fill-opacity="0.41600000000000004"/>
<rect x="737.9" y="279.6" width="3.7" height="0.9" fill="#b5e6ad" fill-opacity="0.28600000000000003"/>
<rect x="749" y="279.6" width="1.5" height="0.9" fill="#b5e6ad" fill-opacity="0.28600000000000003"/>
<rect x="751.2" y="279.6" width="1.5" height="0.9" fill="#b5e6ad" fill-opacity="0.28600000000000003"/>
<rect x="737.9" y="284.6" width="3.7" height="0.9" fill="#b5e6ad" fill-opacity="0.52"/>
<rect x="749" y="284.6" width="1.5" height="0.9" fill="#b5e6ad" fill-opacity="0.52"/>
<rect x="751.2" y="284.6" width="1.5" height="0.9" fill="#b5e6ad" fill-opacity="0.52"/>
<rect x="737.9" y="287.4" width="3.7" height="0.9" fill="#b5e6ad" fill-opacity="0.52"/>
<rect x="749" y="287.4" width="1.5" height="0.9" fill="#b5e6ad" fill-opacity="0.52"/>
<rect x="751.2" y="287.4" width="1.5" height="0.9" fill="#b5e6ad" fill-opacity="0.52"/>
<rect x="781" y="280.2" width="2" height="0.8" fill="#b5e6ad" fill-opacity="0.41600000000000004"/>
<rect x="782.8" y="279.6" width="2" height="0.8" fill="#b5e6ad" fill-opacity="0.41600000000000004"/>
<rect x="784.6" y="279" width="1.6" height="0.8" fill="#b5e6ad" fill-opacity="0.41600000000000004"/>
<rect x="792.6" y="279" width="2" height="0.8" fill="#b5e6ad" fill-opacity="0.41600000000000004"/>
<rect x="787.5" y="284.6" width="2" height="0.8" fill="#b5e6ad" fill-opacity="0.41600000000000004"/>
<rect x="807.4" y="280.6" width="2" height="0.8" fill="#b5e6ad" fill-opacity="0.41600000000000004"/>
<rect x="805.8" y="285.7" width="2.4" height="0.8" fill="#b5e6ad" fill-opacity="0.41600000000000004"/>
<rect x="809" y="285.7" width="2" height="0.8" fill="#b5e6ad" fill-opacity="0.41600000000000004"/>
<rect x="812.4" y="285.7" width="2.4" height="0.8" fill="#b5e6ad" fill-opacity="0.41600000000000004"/>
<rect x="804" y="289.6" width="3" height="0.8" fill="#b5e6ad" fill-opacity="0.41600000000000004"/>
<rect x="808" y="289.6" width="3" height="0.8" fill="#b5e6ad" fill-opacity="0.41600000000000004"/>
<rect x="812" y="289.6" width="3" height="0.8" fill="#b5e6ad" fill-opacity="0.41600000000000004"/>
<rect x="948.6" y="266.1" width="40.6" height="26.9" fill="#141414" rx="1.8"/>
<rect x="949" y="267" width="39.8" height="25" fill="#3e7c39" rx="1.6"/>
<text x="951.6" y="274.6" font-size="6.5" fill="#d9f2d4" stroke="#d9f2d4" stroke-width=".22">Synths</text>
<rect x="949.9" y="279.6" width="3.7" height="0.9" fill="#b5e6ad" fill-opacity="0.55"/>
<rect x="961" y="279.6" width="1.5" height="0.9" fill="#b5e6ad" fill-opacity="0.55"/>
<rect x="963.2" y="279.6" width="1.5" height="0.9" fill="#b5e6ad" fill-opacity="0.55"/>
<rect x="949.9" y="284.6" width="3.7" height="0.9" fill="#b5e6ad" fill-opacity="1"/>
<rect x="961" y="284.6" width="1.5" height="0.9" fill="#b5e6ad" fill-opacity="1"/>
<rect x="963.2" y="284.6" width="1.5" height="0.9" fill="#b5e6ad" fill-opacity="1"/>
<rect x="949.9" y="287.4" width="3.7" height="0.9" fill="#b5e6ad" fill-opacity="1"/>
<rect x="961" y="287.4" width="1.5" height="0.9" fill="#b5e6ad" fill-opacity="1"/>
<rect x="963.2" y="287.4" width="1.5" height="0.9" fill="#b5e6ad" fill-opacity="1"/>
<rect x="567" y="293.1" width="422.2" height="26.9" fill="#141414" rx="1.8"/>
<rect x="567.4" y="294" width="421.4" height="25" fill="#3e7c39" rx="1.6"/>
<line x1="652.2" y1="294" x2="652.2" y2="319" stroke="#1d1d1d" stroke-width="0.7" stroke-opacity=".28"/>
<path d="M652.2 319.2 l1.6 -1.8 h-3.2z M652.2 293.8 l1.6 1.8 h-3.2z" fill="#222"/>
<line x1="737" y1="294" x2="737" y2="319" stroke="#1d1d1d" stroke-width="0.7" stroke-opacity=".28"/>
<path d="M737 319.2 l1.6 -1.8 h-3.2z M737 293.8 l1.6 1.8 h-3.2z" fill="#222"/>
<line x1="821.8" y1="294" x2="821.8" y2="319" stroke="#1d1d1d" stroke-width="0.7" stroke-opacity=".28"/>
<path d="M821.8 319.2 l1.6 -1.8 h-3.2z M821.8 293.8 l1.6 1.8 h-3.2z" fill="#222"/>
<line x1="906.6" y1="294" x2="906.6" y2="319" stroke="#1d1d1d" stroke-width="0.7" stroke-opacity=".28"/>
<path d="M906.6 319.2 l1.6 -1.8 h-3.2z M906.6 293.8 l1.6 1.8 h-3.2z" fill="#222"/>
<text x="570" y="301.6" font-size="6.5" fill="#d9f2d4" stroke="#d9f2d4" stroke-width=".22">Strings</text>
<rect x="567.9" y="306.1" width="4" height="0.9" fill="#b5e6ad" fill-opacity="1"/>
<rect x="587.3" y="306.1" width="1.8" height="0.9" fill="#b5e6ad" fill-opacity="0.85"/>
<rect x="590" y="306.1" width="1.8" height="0.9" fill="#b5e6ad" fill-opacity="0.85"/>
<rect x="592.7" y="306.1" width="1.8" height="0.9" fill="#b5e6ad" fill-opacity="0.85"/>
<rect x="620.3" y="306.1" width="1.8" height="0.9" fill="#b5e6ad" fill-opacity="0.85"/>
<rect x="622.8" y="306.1" width="1.8" height="0.9" fill="#b5e6ad" fill-opacity="0.85"/>
<rect x="641.4" y="306.1" width="1.8" height="0.9" fill="#b5e6ad" fill-opacity="0.85"/>
<rect x="644" y="306.1" width="1.8" height="0.9" fill="#b5e6ad" fill-opacity="0.85"/>
<rect x="646.6" y="306.1" width="1.8" height="0.9" fill="#b5e6ad" fill-opacity="0.85"/>
<rect x="601.1" y="306.1" width="14.7" height="0.9" fill="#b5e6ad" fill-opacity="1"/>
<rect x="567.9" y="309.4" width="4" height="0.9" fill="#b5e6ad" fill-opacity="1"/>
<rect x="587.3" y="309.4" width="1.8" height="0.9" fill="#b5e6ad" fill-opacity="0.85"/>
<rect x="590" y="309.4" width="1.8" height="0.9" fill="#b5e6ad" fill-opacity="0.85"/>
<rect x="592.7" y="309.4" width="1.8" height="0.9" fill="#b5e6ad" fill-opacity="0.85"/>
<rect x="620.3" y="309.4" width="1.8" height="0.9" fill="#b5e6ad" fill-opacity="0.85"/>
<rect x="622.8" y="309.4" width="1.8" height="0.9" fill="#b5e6ad" fill-opacity="0.85"/>
<rect x="641.4" y="309.4" width="1.8" height="0.9" fill="#b5e6ad" fill-opacity="0.85"/>
<rect x="644" y="309.4" width="1.8" height="0.9" fill="#b5e6ad" fill-opacity="0.85"/>
<rect x="646.6" y="309.4" width="1.8" height="0.9" fill="#b5e6ad" fill-opacity="0.85"/>
<rect x="601.1" y="309.4" width="14.7" height="0.9" fill="#b5e6ad" fill-opacity="1"/>
<rect x="567.7" y="313.4" width="2.6" height="0.8" fill="#b5e6ad" fill-opacity="0.7"/>
<rect x="652.7" y="306.1" width="4" height="0.9" fill="#b5e6ad" fill-opacity="0.42"/>
<rect x="672.1" y="306.1" width="1.8" height="0.9" fill="#b5e6ad" fill-opacity="0.357"/>
<rect x="674.8" y="306.1" width="1.8" height="0.9" fill="#b5e6ad" fill-opacity="0.357"/>
<rect x="677.5" y="306.1" width="1.8" height="0.9" fill="#b5e6ad" fill-opacity="0.357"/>
<rect x="705.1" y="306.1" width="1.8" height="0.9" fill="#b5e6ad" fill-opacity="0.357"/>
<rect x="707.6" y="306.1" width="1.8" height="0.9" fill="#b5e6ad" fill-opacity="0.357"/>
<rect x="726.2" y="306.1" width="1.8" height="0.9" fill="#b5e6ad" fill-opacity="0.357"/>
<rect x="728.8" y="306.1" width="1.8" height="0.9" fill="#b5e6ad" fill-opacity="0.357"/>
<rect x="731.4" y="306.1" width="1.8" height="0.9" fill="#b5e6ad" fill-opacity="0.357"/>
<rect x="685.9" y="306.1" width="14.7" height="0.9" fill="#b5e6ad" fill-opacity="0.42"/>
<rect x="652.7" y="309.4" width="4" height="0.9" fill="#b5e6ad" fill-opacity="0.42"/>
<rect x="672.1" y="309.4" width="1.8" height="0.9" fill="#b5e6ad" fill-opacity="0.357"/>
<rect x="674.8" y="309.4" width="1.8" height="0.9" fill="#b5e6ad" fill-opacity="0.357"/>
<rect x="677.5" y="309.4" width="1.8" height="0.9" fill="#b5e6ad" fill-opacity="0.357"/>
<rect x="705.1" y="309.4" width="1.8" height="0.9" fill="#b5e6ad" fill-opacity="0.357"/>
<rect x="707.6" y="309.4" width="1.8" height="0.9" fill="#b5e6ad" fill-opacity="0.357"/>
<rect x="726.2" y="309.4" width="1.8" height="0.9" fill="#b5e6ad" fill-opacity="0.357"/>
<rect x="728.8" y="309.4" width="1.8" height="0.9" fill="#b5e6ad" fill-opacity="0.357"/>
<rect x="731.4" y="309.4" width="1.8" height="0.9" fill="#b5e6ad" fill-opacity="0.357"/>
<rect x="685.9" y="309.4" width="14.7" height="0.9" fill="#b5e6ad" fill-opacity="0.42"/>
<rect x="652.5" y="313.4" width="2.6" height="0.8" fill="#b5e6ad" fill-opacity="0.294"/>
<rect x="737.5" y="306.1" width="4" height="0.9" fill="#b5e6ad" fill-opacity="0.42"/>
<rect x="756.9" y="306.1" width="1.8" height="0.9" fill="#b5e6ad" fill-opacity="0.357"/>
<rect x="759.6" y="306.1" width="1.8" height="0.9" fill="#b5e6ad" fill-opacity="0.357"/>
<rect x="762.3" y="306.1" width="1.8" height="0.9" fill="#b5e6ad" fill-opacity="0.357"/>
<rect x="789.9" y="306.1" width="1.8" height="0.9" fill="#b5e6ad" fill-opacity="0.357"/>
<rect x="792.4" y="306.1" width="1.8" height="0.9" fill="#b5e6ad" fill-opacity="0.357"/>
<rect x="811" y="306.1" width="1.8" height="0.9" fill="#b5e6ad" fill-opacity="0.357"/>
<rect x="813.6" y="306.1" width="1.8" height="0.9" fill="#b5e6ad" fill-opacity="0.357"/>
<rect x="816.2" y="306.1" width="1.8" height="0.9" fill="#b5e6ad" fill-opacity="0.357"/>
<rect x="770.7" y="306.1" width="14.7" height="0.9" fill="#b5e6ad" fill-opacity="0.42"/>
<rect x="737.5" y="309.4" width="4" height="0.9" fill="#b5e6ad" fill-opacity="0.42"/>
<rect x="756.9" y="309.4" width="1.8" height="0.9" fill="#b5e6ad" fill-opacity="0.357"/>
<rect x="759.6" y="309.4" width="1.8" height="0.9" fill="#b5e6ad" fill-opacity="0.357"/>
<rect x="762.3" y="309.4" width="1.8" height="0.9" fill="#b5e6ad" fill-opacity="0.357"/>
<rect x="789.9" y="309.4" width="1.8" height="0.9" fill="#b5e6ad" fill-opacity="0.357"/>
<rect x="792.4" y="309.4" width="1.8" height="0.9" fill="#b5e6ad" fill-opacity="0.357"/>
<rect x="811" y="309.4" width="1.8" height="0.9" fill="#b5e6ad" fill-opacity="0.357"/>
<rect x="813.6" y="309.4" width="1.8" height="0.9" fill="#b5e6ad" fill-opacity="0.357"/>
<rect x="816.2" y="309.4" width="1.8" height="0.9" fill="#b5e6ad" fill-opacity="0.357"/>
<rect x="770.7" y="309.4" width="14.7" height="0.9" fill="#b5e6ad" fill-opacity="0.42"/>
<rect x="737.3" y="313.4" width="2.6" height="0.8" fill="#b5e6ad" fill-opacity="0.294"/>
<rect x="822.3" y="306.1" width="4" height="0.9" fill="#b5e6ad" fill-opacity="0.42"/>
<rect x="841.7" y="306.1" width="1.8" height="0.9" fill="#b5e6ad" fill-opacity="0.357"/>
<rect x="844.4" y="306.1" width="1.8" height="0.9" fill="#b5e6ad" fill-opacity="0.357"/>
<rect x="847.1" y="306.1" width="1.8" height="0.9" fill="#b5e6ad" fill-opacity="0.357"/>
<rect x="874.7" y="306.1" width="1.8" height="0.9" fill="#b5e6ad" fill-opacity="0.357"/>
<rect x="877.2" y="306.1" width="1.8" height="0.9" fill="#b5e6ad" fill-opacity="0.357"/>
<rect x="895.8" y="306.1" width="1.8" height="0.9" fill="#b5e6ad" fill-opacity="0.357"/>
<rect x="898.4" y="306.1" width="1.8" height="0.9" fill="#b5e6ad" fill-opacity="0.357"/>
<rect x="901" y="306.1" width="1.8" height="0.9" fill="#b5e6ad" fill-opacity="0.357"/>
<rect x="855.5" y="306.1" width="14.7" height="0.9" fill="#b5e6ad" fill-opacity="0.42"/>
<rect x="822.3" y="309.4" width="4" height="0.9" fill="#b5e6ad" fill-opacity="0.42"/>
<rect x="841.7" y="309.4" width="1.8" height="0.9" fill="#b5e6ad" fill-opacity="0.357"/>
<rect x="844.4" y="309.4" width="1.8" height="0.9" fill="#b5e6ad" fill-opacity="0.357"/>
<rect x="847.1" y="309.4" width="1.8" height="0.9" fill="#b5e6ad" fill-opacity="0.357"/>
<rect x="874.7" y="309.4" width="1.8" height="0.9" fill="#b5e6ad" fill-opacity="0.357"/>
<rect x="877.2" y="309.4" width="1.8" height="0.9" fill="#b5e6ad" fill-opacity="0.357"/>
<rect x="895.8" y="309.4" width="1.8" height="0.9" fill="#b5e6ad" fill-opacity="0.357"/>
<rect x="898.4" y="309.4" width="1.8" height="0.9" fill="#b5e6ad" fill-opacity="0.357"/>
<rect x="901" y="309.4" width="1.8" height="0.9" fill="#b5e6ad" fill-opacity="0.357"/>
<rect x="855.5" y="309.4" width="14.7" height="0.9" fill="#b5e6ad" fill-opacity="0.42"/>
<rect x="822.1" y="313.4" width="2.6" height="0.8" fill="#b5e6ad" fill-opacity="0.294"/>
<rect x="907.1" y="306.1" width="4" height="0.9" fill="#b5e6ad" fill-opacity="0.42"/>
<rect x="926.5" y="306.1" width="1.8" height="0.9" fill="#b5e6ad" fill-opacity="0.357"/>
<rect x="929.2" y="306.1" width="1.8" height="0.9" fill="#b5e6ad" fill-opacity="0.357"/>
<rect x="931.9" y="306.1" width="1.8" height="0.9" fill="#b5e6ad" fill-opacity="0.357"/>
<rect x="959.5" y="306.1" width="1.8" height="0.9" fill="#b5e6ad" fill-opacity="0.357"/>
<rect x="962" y="306.1" width="1.8" height="0.9" fill="#b5e6ad" fill-opacity="0.357"/>
<rect x="980.6" y="306.1" width="1.8" height="0.9" fill="#b5e6ad" fill-opacity="0.357"/>
<rect x="983.2" y="306.1" width="1.8" height="0.9" fill="#b5e6ad" fill-opacity="0.357"/>
<rect x="985.8" y="306.1" width="0.7" height="0.9" fill="#b5e6ad" fill-opacity="0.357"/>
<rect x="940.3" y="306.1" width="14.7" height="0.9" fill="#b5e6ad" fill-opacity="0.42"/>
<rect x="907.1" y="309.4" width="4" height="0.9" fill="#b5e6ad" fill-opacity="0.42"/>
<rect x="926.5" y="309.4" width="1.8" height="0.9" fill="#b5e6ad" fill-opacity="0.357"/>
<rect x="929.2" y="309.4" width="1.8" height="0.9" fill="#b5e6ad" fill-opacity="0.357"/>
<rect x="931.9" y="309.4" width="1.8" height="0.9" fill="#b5e6ad" fill-opacity="0.357"/>
<rect x="959.5" y="309.4" width="1.8" height="0.9" fill="#b5e6ad" fill-opacity="0.357"/>
<rect x="962" y="309.4" width="1.8" height="0.9" fill="#b5e6ad" fill-opacity="0.357"/>
<rect x="980.6" y="309.4" width="1.8" height="0.9" fill="#b5e6ad" fill-opacity="0.357"/>
<rect x="983.2" y="309.4" width="1.8" height="0.9" fill="#b5e6ad" fill-opacity="0.357"/>
<rect x="985.8" y="309.4" width="0.7" height="0.9" fill="#b5e6ad" fill-opacity="0.357"/>
<rect x="940.3" y="309.4" width="14.7" height="0.9" fill="#b5e6ad" fill-opacity="0.42"/>
<rect x="906.9" y="313.4" width="2.6" height="0.8" fill="#b5e6ad" fill-opacity="0.294"/>
<line x1="567.3" y1="108" x2="567.3" y2="335.5" stroke="#e8e8e8" stroke-width="0.9"/>
<path d="M563.7 105.4 h7.2 v2.6 q0 1.6 -3.6 4.4 q-3.6 -2.8 -3.6 -4.4z" fill="#ececec" stroke="#2b2b2b" stroke-width="0.8"/>
<rect x="944.2" y="98.7" width="35" height="10.2" fill="#454545" rx="2" fill-opacity=".55"/>
<line x1="946" y1="104.5" x2="978" y2="104.5" stroke="#555555" stroke-width="1"/>
<path d="M952.3 106.6 v-2.6 l2 -2.2 l2 2.2 v2.6z" fill="#e6e6e6"/>
<circle cx="952.2" cy="97.6" r="0.7" fill="#ddd"/>
<circle cx="956.8" cy="97.6" r="0.7" fill="#ddd"/>
<rect x="987" y="94.7" width="2" height="241" fill="#9ab3d8"/>
<rect x="212.4" y="95" width="774.8" height="240.4" fill="none" rx="1.5" stroke="#262b36" stroke-width="0.9"/>
<rect x="211" y="339.8" width="778" height="17.2" fill="#434343"/>
<rect x="211" y="338.7" width="778" height="1.2" fill="#74819a"/>
<rect x="211" y="339.8" width="778" height="1.3" fill="#262626"/>
<rect x="211" y="341.1" width="778" height="0.9" fill="#303030"/>
<rect x="217" y="344.2" width="29.7" height="10.6" fill="#3b72c0" rx="1.5"/>
<text x="231.8" y="352.2" font-size="7.4" fill="#ffffff" text-anchor="middle" stroke="#ffffff" stroke-width=".2">Track</text>
<rect x="246.7" y="344.2" width="35.3" height="10.6" fill="#343434" rx="1.5"/>
<text x="264.4" y="352.2" font-size="7.4" fill="#f0f0f0" text-anchor="middle" stroke="#f0f0f0" stroke-width=".2">Master</text>
<rect x="287.5" y="344.2" width="37.2" height="10.6" fill="#43618e" rx="1.5"/>
<text x="306.1" y="352.2" font-size="7.4" fill="#8fabd3" text-anchor="middle">Compare</text>
<rect x="568" y="344.2" width="41.2" height="10.6" fill="#343434" rx="1.5"/>
<text x="588.6" y="352.2" font-size="7.4" fill="#f0f0f0" text-anchor="middle" stroke="#f0f0f0" stroke-width=".2">Controls</text>
<rect x="609.2" y="344.2" width="21" height="10.6" fill="#3b72c0" rx="1.5"/>
<text x="619.7" y="352.2" font-size="7.2" fill="#ffffff" text-anchor="middle" font-weight="bold">EQ</text>
<rect x="965" y="342.6" width="20.6" height="13.6" fill="#494949" rx="1.5"/>
<path d="M970 353.2 L974.6 348.6" fill="none" stroke="#e0e0e0" stroke-width="1.2"/>
<path d="M974.6 348.6 L977.6 344.6 M974.6 348.6 L978.9 346" fill="none" stroke="#e0e0e0" stroke-width="1.1"/>
<rect x="211" y="357" width="180" height="192.6" fill="#646464"/>
<rect x="388.4" y="357" width="2.6" height="192.6" fill="#6e6e6e"/>
<rect x="211" y="357" width="1" height="192.6" fill="#4a4a4a"/>
<rect x="219.7" y="364.7" width="164.5" height="24.5" fill="#575757" rx="3"/>
<rect x="226.3" y="370.3" width="14" height="13" fill="#3b72c0" rx="2"/>
<path d="M231 374.4 a3.3 3.3 0 1 0 4.6 0 M233.3 373 v3.6" fill="none" stroke="#e8f0ff" stroke-width="0.9"/>
<rect x="245" y="370.3" width="131.7" height="13.2" fill="#484848" rx="2"/>
<text x="249.7" y="379.3" font-size="7.4" fill="#f4f4f4">Pop Vocal</text>
<path d="M370 375.6 l1.8 -2 l1.8 2 M370 378.2 l1.8 2 l1.8 -2" fill="none" stroke="#b8b8b8" stroke-width="0.9"/>
<rect x="391" y="357" width="598" height="192.6" fill="url(#eqbg)"/>
<rect x="391" y="357" width="598" height="192.6" fill="url(#eqglow)"/>
<rect x="391" y="357" width="40" height="192.6" fill="url(#vl)"/>
<rect x="920" y="357" width="69" height="192.6" fill="url(#vr)"/>
<line x1="412" y1="381" x2="412" y2="529.5" stroke="#2b4162" stroke-width="0.6" stroke-opacity=".6"/>
<line x1="481.24" y1="381" x2="481.24" y2="529.5" stroke="#2b4162" stroke-width="0.6" stroke-opacity=".6"/>
<line x1="533.62" y1="381" x2="533.62" y2="529.5" stroke="#2b4162" stroke-width="0.6" stroke-opacity=".6"/>
<line x1="586" y1="381" x2="586" y2="529.5" stroke="#2b4162" stroke-width="0.6" stroke-opacity=".6"/>
<line x1="655.24" y1="381" x2="655.24" y2="529.5" stroke="#2b4162" stroke-width="0.6" stroke-opacity=".6"/>
<line x1="707.62" y1="381" x2="707.62" y2="529.5" stroke="#2b4162" stroke-width="0.6" stroke-opacity=".6"/>
<line x1="760" y1="381" x2="760" y2="529.5" stroke="#2b4162" stroke-width="0.6" stroke-opacity=".6"/>
<line x1="829.24" y1="381" x2="829.24" y2="529.5" stroke="#2b4162" stroke-width="0.6" stroke-opacity=".6"/>
<line x1="881.62" y1="381" x2="881.62" y2="529.5" stroke="#2b4162" stroke-width="0.6" stroke-opacity=".6"/>
<line x1="934" y1="381" x2="934" y2="529.5" stroke="#2b4162" stroke-width="0.6" stroke-opacity=".6"/>
<line x1="412" y1="383" x2="936" y2="383" stroke="#2b4162" stroke-width="0.5" stroke-opacity=".5"/>
<line x1="412" y1="406.5" x2="936" y2="406.5" stroke="#2b4162" stroke-width="0.5" stroke-opacity=".5"/>
<line x1="412" y1="430" x2="936" y2="430" stroke="#2b4162" stroke-width="0.5" stroke-opacity=".5"/>
<line x1="412" y1="453.5" x2="936" y2="453.5" stroke="#2b4162" stroke-width="0.5" stroke-opacity=".5"/>
<line x1="412" y1="477" x2="936" y2="477" stroke="#2b4162" stroke-width="0.5" stroke-opacity=".5"/>
<line x1="412" y1="500.5" x2="936" y2="500.5" stroke="#2b4162" stroke-width="0.5" stroke-opacity=".5"/>
<line x1="412" y1="524" x2="936" y2="524" stroke="#2b4162" stroke-width="0.5" stroke-opacity=".5"/>
<rect x="656" y="380.5" width="128" height="144.5" fill="#4a9a98" fill-opacity=".22"/>
<text x="400" y="375.6" font-size="6.5" fill="#9aa8c0" text-anchor="middle">+</text>
<text x="400.5" y="385.6" font-size="6.6" fill="#929cb0" text-anchor="middle">0</text>
<text x="400.5" y="397.35" font-size="6.6" fill="#929cb0" text-anchor="middle">5</text>
<text x="400.5" y="409.1" font-size="6.6" fill="#929cb0" text-anchor="middle">10</text>
<text x="400.5" y="420.85" font-size="6.6" fill="#929cb0" text-anchor="middle">15</text>
<text x="400.5" y="432.6" font-size="6.6" fill="#929cb0" text-anchor="middle">20</text>
<text x="400.5" y="444.35" font-size="6.6" fill="#929cb0" text-anchor="middle">25</text>
<text x="400.5" y="456.1" font-size="6.6" fill="#929cb0" text-anchor="middle">30</text>
<text x="400.5" y="467.85" font-size="6.6" fill="#929cb0" text-anchor="middle">35</text>
<text x="400.5" y="479.6" font-size="6.6" fill="#929cb0" text-anchor="middle">40</text>
<text x="400.5" y="491.35" font-size="6.6" fill="#929cb0" text-anchor="middle">45</text>
<text x="400.5" y="503.1" font-size="6.6" fill="#929cb0" text-anchor="middle">50</text>
<text x="400.5" y="514.85" font-size="6.6" fill="#929cb0" text-anchor="middle">55</text>
<text x="400.5" y="526.6" font-size="6.6" fill="#929cb0" text-anchor="middle">60</text>
<text x="400" y="536.5" font-size="6.5" fill="#9aa8c0" text-anchor="middle">-</text>
<text x="947.5" y="375.6" font-size="6" fill="#304059" text-anchor="middle">+</text>
<text x="947.5" y="385.4" font-size="6.3" fill="#2f405a" text-anchor="middle">30</text>
<text x="947.5" y="397.05" font-size="6.3" fill="#2f405a" text-anchor="middle">25</text>
<text x="947.5" y="408.7" font-size="6.3" fill="#2f405a" text-anchor="middle">20</text>
<text x="947.5" y="420.35" font-size="6.3" fill="#2f405a" text-anchor="middle">15</text>
<text x="947.5" y="432" font-size="6.3" fill="#2f405a" text-anchor="middle">10</text>
<text x="947.5" y="443.65" font-size="6.3" fill="#2f405a" text-anchor="middle">5</text>
<text x="947.5" y="455.3" font-size="6.3" fill="#2f405a" text-anchor="middle">0</text>
<text x="947.5" y="466.95" font-size="6.3" fill="#2f405a" text-anchor="middle">5</text>
<text x="947.5" y="478.6" font-size="6.3" fill="#2f405a" text-anchor="middle">10</text>
<text x="947.5" y="490.25" font-size="6.3" fill="#2f405a" text-anchor="middle">15</text>
<text x="947.5" y="501.9" font-size="6.3" fill="#2f405a" text-anchor="middle">20</text>
<text x="947.5" y="513.55" font-size="6.3" fill="#2f405a" text-anchor="middle">25</text>
<text x="947.5" y="525.2" font-size="6.3" fill="#2f405a" text-anchor="middle">30</text>
<text x="947.5" y="533" font-size="6" fill="#304059" text-anchor="middle">-</text>
<line x1="967.7" y1="383" x2="967.7" y2="526" stroke="#27374f" stroke-width="0.8"/>
<text x="961.5" y="384.5" font-size="5" fill="#2b3b55" text-anchor="middle">-</text>
<text x="973.5" y="384.5" font-size="5" fill="#2b3b55" text-anchor="middle">-</text>
<text x="961.5" y="528.5" font-size="5" fill="#2b3b55" text-anchor="middle">-</text>
<text x="973.5" y="528.5" font-size="5" fill="#2b3b55" text-anchor="middle">-</text>
<circle cx="967.7" cy="452.4" r="3.7" fill="#16233d" stroke="#7aa0dc" stroke-width="1.3"/>
<text x="967" y="541.8" font-size="7" fill="#3b4b62" text-anchor="middle">Gain</text>
<path d="M412 452.5 L534 452.5 C530 453.5 528 455 526 457.5 L478.6 529.4 L412 529.4Z" fill="#6c7192"/>
<line x1="478.6" y1="529.4" x2="526" y2="457.5" stroke="#9ab0bc" stroke-width="0.7" stroke-opacity=".7"/>
<path d="M536 529.2 C537.2 526.14 537.3 526.86 540 519 C542.7 511.14 542 512.6 545 503 C548 493.4 547.3 494.8 550 487 C552.7 479.2 551.6 481.65 554 477 C556.4 472.35 555.75 473.51 558 471.5 C560.25 469.49 559.4 470.3 561.5 470.3 C563.6 470.3 562.75 469.79 565 471.5 C567.25 473.21 566.6 472.25 569 476 C571.4 479.75 570.6 479.2 573 484 C575.4 488.8 574.75 488.25 577 492 C579.25 495.75 578.55 494.7 580.5 496.5 C582.45 498.3 581.25 498.45 583.5 498 C585.75 497.55 585.51 496.53 588 495 C590.49 493.47 589.73 492.9 591.8 492.9 C593.87 492.9 593.04 496.17 594.9 495 C596.76 493.83 596.17 492.75 598 489 C599.83 485.25 598.6 491.2 601 482.5 C603.4 473.8 602.85 472.45 606 460 C609.15 447.55 608.5 449.25 611.5 441 C614.5 432.75 613.54 435.89 616 432.5 C618.46 429.11 617.9 428.95 619.7 429.7 C621.5 430.45 620.74 430.35 622 435 C623.26 439.65 622.55 435.3 623.9 445.2 C625.25 455.1 624.97 454.92 626.5 468 C628.03 481.08 627.5 478.6 629 488.8 C630.5 499 630.24 496.42 631.5 502 C632.76 507.58 632.15 507.4 633.2 507.4 C634.25 507.4 633.74 507.58 635 502 C636.26 496.42 635.75 499 637.4 488.8 C639.05 478.6 638.64 479.19 640.5 468 C642.36 456.81 641.65 459.6 643.6 451.5 C645.55 443.4 645.14 445.05 647 441 C648.86 436.95 648.3 436.5 649.8 438 C651.3 439.5 650.74 438.86 652 446 C653.26 453.14 652.74 449.2 654 461.8 C655.26 474.4 655 474.95 656.2 488 C657.4 501.05 656.92 504.1 658 505.3 C659.08 506.5 658.84 500.7 659.8 492 C660.76 483.3 660.15 478.1 661.2 476.3 C662.25 474.5 662.07 481.02 663.3 486 C664.53 490.98 663.89 495.3 665.3 492.9 C666.71 490.5 666.44 486.7 668 478 C669.56 469.3 669 471.85 670.5 463.9 C672 455.95 671.65 450.87 673 451.5 C674.35 452.13 673.89 457.3 675 466 C676.11 474.7 675.56 475.25 676.7 480.5 C677.84 485.75 677.54 482.27 678.8 483.5 C680.06 484.73 679.49 489.25 680.9 484.6 C682.31 479.95 681.97 477.93 683.5 468 C685.03 458.07 684.65 461.7 686 451.5 C687.35 441.3 686.92 441.8 688 434 C689.08 426.2 688.7 423.7 689.6 425.5 C690.5 427.3 690.19 429.11 691 440 C691.81 450.89 691.4 444.7 692.3 461.8 C693.2 478.9 692.95 478.34 694 497 C695.05 515.66 694.72 518.6 695.8 524 C696.88 529.4 696.49 521.21 697.6 515 C698.71 508.79 698.3 513.8 699.5 503.3 C700.7 492.8 700.34 492.45 701.6 480 C702.86 467.55 702.59 463.3 703.7 461.8 C704.81 460.3 704.37 465.67 705.3 475 C706.23 484.33 705.78 480.9 706.8 492.9 C707.82 504.9 707.59 504.11 708.7 515 C709.81 525.89 709.27 533.7 710.5 529.2 C711.73 524.7 711.45 515.87 712.8 500 C714.15 484.13 713.98 479.3 715 476.3 C716.02 473.3 715.54 482.53 716.2 490 C716.86 497.47 716.36 500.9 717.2 501.2 C718.04 501.5 717.89 496.61 719 491 C720.11 485.39 719.79 488.2 720.9 482.5 C722.01 476.8 721.65 476.95 722.7 472 C723.75 467.05 723.26 461.2 724.4 466 C725.54 470.8 725.27 475.58 726.5 488 C727.73 500.42 727 510.4 728.5 507.4 C730 504.4 729.73 494.77 731.5 478 C733.27 461.23 733.17 450.9 734.4 451.5 C735.63 452.1 734.88 463.23 735.6 480 C736.32 496.77 735.9 496.6 736.8 507.4 C737.7 518.2 737.52 511.65 738.6 516 C739.68 520.35 739.44 526.7 740.4 521.9 C741.36 517.1 741.02 512.42 741.8 500 C742.58 487.58 742.16 478.7 743 480.5 C743.84 482.3 743.64 491.39 744.6 506 C745.56 520.61 745.18 528 746.2 529.2 C747.22 530.4 746.89 520.89 748 510 C749.11 499.11 748.7 493.2 749.9 492.9 C751.1 492.6 750.77 500.3 752 509 C753.23 517.7 752.74 525.5 754 521.9 C755.26 518.3 754.94 511.31 756.2 497 C757.46 482.69 757.21 478.1 758.2 474.2 C759.19 470.3 758.75 478.39 759.5 484 C760.25 489.61 759.83 495.3 760.7 492.9 C761.57 490.5 761.47 484.7 762.4 476 C763.33 467.3 762.96 456.34 763.8 463.9 C764.64 471.46 764.3 494.57 765.2 501.2 C766.1 507.83 765.87 494.1 766.8 486 C767.73 477.9 767.34 479 768.3 474.2 C769.26 469.4 768.89 471.86 770 470 C771.11 468.14 770.86 465 772 468 C773.14 471 772.75 473.16 773.8 480 C774.85 486.84 774.06 488.19 775.5 490.8 C776.94 493.41 776.71 486.21 778.6 488.7 C780.49 491.19 779.91 496.61 781.8 499.1 C783.69 501.59 783.37 504.47 784.9 497 C786.43 489.53 785.73 483.2 786.9 474.2 C788.07 465.2 787.66 470.42 788.8 467 C789.94 463.58 789.59 461.6 790.7 462.8 C791.81 464 791.45 466.32 792.5 471 C793.55 475.68 793.06 473.9 794.2 478.4 C795.34 482.9 795.07 481.65 796.3 486 C797.53 490.35 797.37 487.5 798.3 492.9 C799.23 498.3 798.77 497.79 799.4 504 C800.03 510.21 799.77 515.4 800.4 513.6 C801.03 511.8 800.87 506.7 801.5 498 C802.13 489.3 801.75 486.4 802.5 484.6 C803.25 482.8 803.07 487.65 804 492 C804.93 496.35 804.52 495.2 805.6 499.1 C806.68 503 806.37 501.88 807.6 505 C808.83 508.12 808.14 510.64 809.7 509.5 C811.26 508.36 811.24 499.97 812.8 501.2 C814.36 502.43 813.79 512.76 814.9 513.6 C816.01 514.44 815.57 508.98 816.5 504 C817.43 499.02 816.95 502.4 818 497 C819.05 491.6 818.74 492.21 820 486 C821.26 479.79 821.06 476.3 822.2 476.3 C823.34 476.3 822.87 481.02 823.8 486 C824.73 490.98 823.92 489.6 825.3 492.9 C826.68 496.2 826.84 490.79 828.4 497 C829.96 503.21 828.94 505.8 830.5 513.6 C832.06 521.4 831.74 523 833.6 523 C835.46 523 834.84 518.91 836.7 513.6 C838.56 508.29 838.57 503.44 839.8 505.3 C841.03 507.16 840.2 521.39 840.8 519.8 C841.4 518.21 841.17 511.79 841.8 500 C842.43 488.21 841.64 483.86 842.9 480.5 C844.16 477.14 844.47 488.5 846 488.8 C847.53 489.1 846.44 480.27 848 481.5 C849.56 482.73 849.31 486.36 851.2 492.9 C853.09 499.44 853.07 503.3 854.3 503.3 C855.53 503.3 854.52 490.29 855.3 492.9 C856.08 495.51 855.97 501.11 856.9 512 C857.83 522.89 857.32 529.2 858.4 529.2 C859.48 529.2 859.24 522.26 860.5 512 C861.76 501.74 861.49 498.3 862.6 495 C863.71 491.7 863.27 497.28 864.2 501 C865.13 504.72 864.02 507.34 865.7 507.4 C867.38 507.46 867.31 505.55 869.8 501.2 C872.29 496.85 871.81 493.53 874 492.9 C876.19 492.27 875.24 501.89 877.1 499.1 C878.96 496.31 878.88 485.73 880.2 483.6 C881.52 481.47 880.75 486.72 881.5 492 C882.25 497.28 882.07 494 882.7 501.2 C883.33 508.4 883.09 507.6 883.6 516 C884.11 524.4 883.86 528.6 884.4 529.2 C884.94 529.8 884.8 523.91 885.4 518 C886 512.09 885.77 506.14 886.4 509.5 C887.03 512.86 886.75 528.75 887.5 529.2 C888.25 529.65 888.09 521.26 888.9 511 C889.71 500.74 889.27 498 890.2 495 C891.13 492 890.95 497.28 892 501 C893.05 504.72 892.71 507.7 893.7 507.4 C894.69 507.1 894.37 504.35 895.3 500 C896.23 495.65 895.81 495.6 896.8 492.9 C897.79 490.2 897.49 491.93 898.6 491 C899.71 490.07 899.39 487.1 900.5 489.8 C901.61 492.5 901.25 494.09 902.3 500 C903.35 505.91 902.86 509.77 904 509.5 C905.14 509.23 905.14 499.25 906.1 499.1 C907.06 498.95 906.57 503.39 907.2 509 C907.83 514.61 907.48 522 908.2 517.8 C908.92 513.6 908.37 498.12 909.6 495 C910.83 491.88 910.86 506.47 912.3 507.4 C913.74 508.33 913.53 496.12 914.4 498.1 C915.27 500.08 914.75 504.67 915.2 514 C915.65 523.33 915.21 526.2 915.9 529.2 C916.59 532.2 916.72 524 917.5 524 C918.28 524 918.2 527.64 918.5 529.2" fill="none" stroke="#8a9bb5" stroke-width="0.9" stroke-linejoin="round" stroke-opacity=".85"/>
<path d="M732 452.5 C736.8 452.05 739.87 452.13 750 450.8 C760.13 449.47 760.67 449.45 770 447.5 C779.33 445.55 777.27 445.42 785 443.5 C792.73 441.58 791.8 440.57 799 440.3 C806.2 440.03 803.73 440.58 812 442.5 C820.27 444.42 821.2 445.37 830 447.5 C838.8 449.63 837 449.22 845 450.5 C853 451.78 856 451.82 860 452.3 L860 452.7 L732 452.7 Z" fill="#3a5f8c" fill-opacity="0.55"/>
<path d="M530 452.5 C538 451.83 546.67 451.39 560 450 C573.33 448.61 569.6 448.55 580 447.3 C590.4 446.05 588.33 445.25 599 445.3 C609.67 445.35 609.07 446.25 620 447.5 C630.93 448.75 629.07 448.75 640 450 C650.93 451.25 655.4 451.61 661 452.2 L661 452.7 L530 452.7 Z" fill="#8a8f78" fill-opacity="0.35"/>
<path d="M530 452.5 C538 451.83 546.67 451.39 560 450 C573.33 448.61 569.6 448.55 580 447.3 C590.4 446.05 588.33 445.25 599 445.3 C609.67 445.35 609.07 446.25 620 447.5 C630.93 448.75 629.07 448.75 640 450 C650.93 451.25 655.4 451.61 661 452.2" fill="none" stroke="#c9b84a" stroke-width="0.6" stroke-opacity=".5"/>
<path d="M530 453 C540.67 453.27 548.67 453.33 570 454 C591.33 454.67 591.33 454.54 610 455.5 C628.67 456.46 626.67 456.53 640 457.6 C653.33 458.67 646.67 457.93 660 459.5 C673.33 461.07 677.73 462.03 690 463.5 C702.27 464.97 697.73 464.44 706 465 C714.27 465.56 711.93 465.65 721 465.6 C730.07 465.55 728.27 465.55 740 464.8 C751.73 464.05 751.67 463.87 765 462.8 C778.33 461.73 773.73 462.43 790 460.8 C806.27 459.17 807.33 458.62 826 456.7 C844.67 454.78 840.27 454.61 860 453.6 C879.73 452.59 889.33 453.09 900 452.9 L900 452.7 L530 452.7 Z" fill="#3a9270" fill-opacity="0.95"/>
<path d="M627 452.7 C630.47 453.18 631.2 453.22 640 454.5 C648.8 455.78 646.67 455.23 660 457.5 C673.33 459.77 677.73 461 690 463 C702.27 465 697.73 464.31 706 465 C714.27 465.69 713.27 466.13 721 465.6 C728.73 465.07 727.27 464.89 735 463 C742.73 461.11 742.8 460.69 750 458.5 C757.2 456.31 756.67 456.35 762 454.8 C767.33 453.25 767.87 453.26 770 452.7 L770 452.7 L627 452.7 Z" fill="#5fc6a6" fill-opacity="1"/>
<path d="M528 452.7 C529.6 452.46 529.47 452.65 534 451.8 C538.53 450.95 538.07 450.46 545 449.5 C551.93 448.54 552 448.79 560 448.2 C568 447.61 566.2 447.7 575 447.3 C583.8 446.9 585 446.65 593 446.7 C601 446.75 599.13 446.75 605 447.5 C610.87 448.25 609.13 448.11 615 449.5 C620.87 450.89 623.8 451.85 627 452.7 L627 452.7 L528 452.7 Z" fill="#8ea2b6" fill-opacity="1"/>
<path d="M770 452.7 C772.67 451.85 774.67 451.15 780 449.5 C785.33 447.85 783.87 447.78 790 446.5 C796.13 445.22 796.33 444.89 803 444.7 C809.67 444.51 807.8 444.79 815 445.8 C822.2 446.81 822 447.11 830 448.5 C838 449.89 837 449.93 845 451 C853 452.07 850.67 452.05 860 452.5 C869.33 452.95 874.67 452.65 880 452.7 L880 452.7 L770 452.7 Z" fill="#6b8fc3" fill-opacity="1"/>
<line x1="412" y1="452.7" x2="936" y2="452.7" stroke="#6ccab6" stroke-width="1.7"/>
<circle cx="525.4" cy="458.9" r="2.2" fill="#cf6c5c"/>
<circle cx="552" cy="451.8" r="2.2" fill="#e0b54a"/>
<circle cx="599" cy="445.2" r="2.3" fill="#d7c948"/>
<circle cx="661.2" cy="452.5" r="2.3" fill="#9bd063"/>
<circle cx="720.9" cy="465.5" r="2.6" fill="#b9f5dc" stroke="#7fe0c0" stroke-width="0.8"/>
<circle cx="799.4" cy="440" r="2.6" fill="#a9b9dc"/>
<circle cx="860.5" cy="452.5" r="2.5" fill="#b3b3dd"/>
<text x="413.5" y="460.6" font-size="6.3" fill="#e4e8f2" font-weight="bold" fill-opacity="0.95">20</text>
<text x="481.24" y="460.6" font-size="6.3" fill="#e4e8f2" text-anchor="middle" font-weight="bold" fill-opacity="0.95">50</text>
<text x="533.62" y="460.6" font-size="6.3" fill="#e4e8f2" text-anchor="middle" font-weight="bold" fill-opacity="0.95">100</text>
<text x="586" y="460.6" font-size="6.3" fill="#e4e8f2" text-anchor="middle" font-weight="bold" fill-opacity="0.95">200</text>
<text x="655.24" y="460.6" font-size="6.3" fill="#e4e8f2" text-anchor="middle" font-weight="bold" fill-opacity="0.72">500</text>
<text x="707.62" y="460.6" font-size="6.3" fill="#e4e8f2" text-anchor="middle" font-weight="bold" fill-opacity="0.72">1k</text>
<text x="760" y="460.6" font-size="6.3" fill="#e4e8f2" text-anchor="middle" font-weight="bold" fill-opacity="0.72">2k</text>
<text x="829.24" y="460.6" font-size="6.3" fill="#e4e8f2" text-anchor="middle" font-weight="bold" fill-opacity="0.95">5k</text>
<text x="881.62" y="460.6" font-size="6.3" fill="#e4e8f2" text-anchor="middle" font-weight="bold" fill-opacity="0.95">10k</text>
<text x="936" y="460.6" font-size="6.3" fill="#e4e8f2" text-anchor="end" font-weight="bold">20k</text>
<path d="M428.4 372.3 q3 -0.6 5 -4.3 q2 -3.8 6 -4.3" fill="none" stroke="#b8463c" stroke-width="1.1"/>
<path d="M495.6 363.4 q5 0.4 6.5 4.6 h7 M495.6 372.6 q5 -0.4 6.5 -4.6" fill="none" stroke="#b08e44" stroke-width="1.1"/>
<path d="M560.8 368 h5.8 l4.7 -4.8 l4.7 4.8 h5.8 M566.6 368 l4.7 4.8 l4.7 -4.8" fill="none" stroke="#b9c058" stroke-width="1.1"/>
<path d="M629.5 368 h5.8 l4.7 -4.8 l4.7 4.8 h5.8 M635.3 368 l4.7 4.8 l4.7 -4.8" fill="none" stroke="#7dbd5e" stroke-width="1.1"/>
<rect x="696.2" y="361" width="25" height="14" fill="#25574a" rx="1"/>
<path d="M698.2 368 h5.8 l4.7 -4.8 l4.7 4.8 h5.8 M704 368 l4.7 4.8 l4.7 -4.8" fill="none" stroke="#7fe0ba" stroke-width="1.1"/>
<path d="M766.9 368 h5.8 l4.7 -4.8 l4.7 4.8 h5.8 M772.7 368 l4.7 4.8 l4.7 -4.8" fill="none" stroke="#6284b8" stroke-width="1.1"/>
<path d="M853.1 363.4 q-5 0.4 -6.5 4.6 h-7 M853.1 372.6 q-5 -0.4 -6.5 -4.6" fill="none" stroke="#8f9abb" stroke-width="1.1"/>
<path d="M909.3 363.7 q4 0.6 6 4.3 q2 3.8 5 4.3" fill="none" stroke="#3c4a66" stroke-width="1.1"/>
<rect x="411.6" y="532.3" width="50.8" height="16" fill="#2c4163"/>
<text x="437" y="543.3" font-size="8.2" fill="#dbe3f2" text-anchor="middle">Analyzer</text>
<text x="748.5" y="542.8" font-size="8.1" fill="#3b7d6a" textLength="73" lengthAdjust="spacingAndGlyphs">Frequency: <tspan fill="#5dbd9e">1180 Hz</tspan></text>
<text x="835.5" y="542.8" font-size="8.1" fill="#3b7d6a" textLength="49" lengthAdjust="spacingAndGlyphs">Gain: <tspan fill="#5dbd9e">-5.5 dB</tspan></text>
<text x="904" y="542.8" font-size="8.1" fill="#3b7d6a" textLength="27.5" lengthAdjust="spacingAndGlyphs">Q: <tspan fill="#5dbd9e">0.39</tspan></text>
<rect x="211" y="549" width="778" height="0.8" fill="#4a4a4a"/></svg></body></html>
